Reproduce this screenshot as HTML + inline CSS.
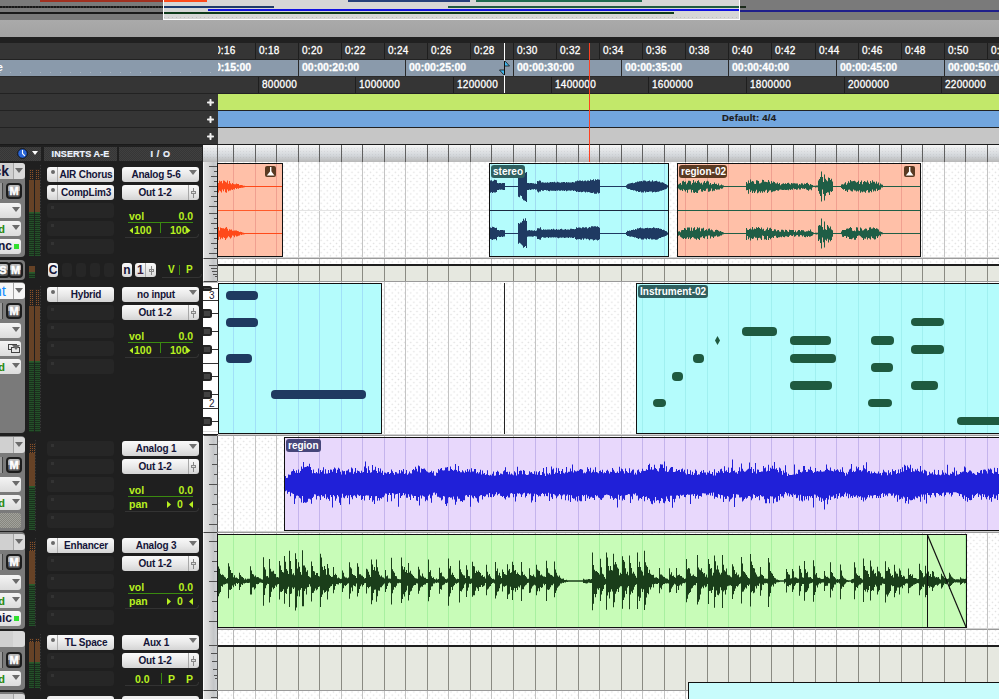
<!DOCTYPE html><html><head><meta charset="utf-8"><style>
*{margin:0;padding:0;box-sizing:border-box}
svg{display:block}
html,body{width:999px;height:699px;overflow:hidden;background:#1f1f1f;font-family:"Liberation Sans",sans-serif}
.ab{position:absolute}
.rl{position:absolute;color:#fff;font-weight:bold;font-size:10.5px;white-space:nowrap;line-height:12px}
.btn{position:absolute;background:linear-gradient(#f4f4f4,#e2e2e2 60%,#d0d0d0);border-radius:3px;color:#1a1a3a;font-weight:bold;font-size:11px;line-height:15px;text-align:center;white-space:nowrap;overflow:hidden}
.slot{position:absolute;background:#262626;border-radius:3px}
.slot:after{content:"";position:absolute;left:5px;top:4px;width:3px;height:3px;background:#333}
.gt{position:absolute;color:#b8f020;font-weight:bold;font-size:10.5px;line-height:12px;white-space:nowrap}
.lp{position:absolute;background:#5a5a5a;left:0;width:25px;border-radius:0 4px 4px 0}
.lb{position:absolute;left:0;width:25px;height:15px;background:linear-gradient(#f2f2f2,#d8d8d8);border-radius:0 3px 3px 0;overflow:hidden}
.mb{position:absolute;left:6px;width:15px;height:16px;background:linear-gradient(#7a7a7a,#333);border:1px solid #222;border-radius:3px;color:#fff;font-weight:bold;font-size:12px;line-height:14px;text-align:center}
.arr{position:absolute;width:0;height:0;border-left:5px solid transparent;border-right:5px solid transparent;border-top:6px solid #666}
</style></head><body>

<div class="ab" style="left:0;top:0;width:999px;height:20px;background:#7a7a7a"></div>
<div class="ab" style="left:0;top:6px;width:163px;height:2px;background:repeating-linear-gradient(90deg,#181818 0 2px,#303030 2px 3px)"></div>
<div class="ab" style="left:0;top:12px;width:163px;height:2px;background:#1a1a1a"></div>
<div class="ab" style="left:40px;top:0;width:123px;height:2px;background:#a03020"></div>
<div class="ab" style="left:739px;top:6px;width:7px;height:2px;background:#1a2a1a"></div>
<div class="ab" style="left:739px;top:10px;width:260px;height:2px;background:#1e1e8a"></div>
<div class="ab" style="left:163px;top:0;width:577px;height:20px;background:#d6d6d6;border:1px solid #fff;border-top:none"></div>
<div class="ab" style="left:164px;top:17px;width:575px;height:1px;background:repeating-linear-gradient(90deg,#c0c0c0 0 1px,transparent 1px 4px)"></div>
<div class="ab" style="left:164px;top:0;width:43px;height:2px;background:#ff4a1a"></div>
<div class="ab" style="left:348px;top:0;width:122px;height:2px;background:#25407a"></div>
<div class="ab" style="left:476px;top:0;width:166px;height:2px;background:#1f6a50"></div>
<div class="ab" style="left:164px;top:6px;width:110px;height:2px;background:#1e3a6a"></div>
<div class="ab" style="left:448px;top:6px;width:291px;height:2px;background:#1f5a40"></div>
<div class="ab" style="left:208px;top:9px;width:531px;height:2px;background:#1010e0"></div>
<div class="ab" style="left:164px;top:12px;width:510px;height:2px;background:#0e3a1a"></div>
<div class="ab" style="left:0;top:20px;width:999px;height:17px;background:linear-gradient(#aaaaaa,#a2a2a2)"></div>
<div class="ab" style="left:0;top:37px;width:999px;height:6px;background:#202020"></div>
<div class="ab" style="left:0;top:43px;width:999px;height:16px;background:#353535"></div>
<div class="ab" style="left:0;top:59px;width:999px;height:1px;background:#222"></div>
<div class="ab" style="left:0;top:60px;width:999px;height:16px;background:#8a9aab"></div>
<div class="ab" style="left:0;top:76px;width:999px;height:1px;background:#2a2a2a"></div>
<div class="ab" style="left:0;top:77px;width:999px;height:16px;background:#353535"></div>
<div class="ab" style="left:0;top:93px;width:999px;height:1px;background:#222"></div>
<div class="ab" style="left:0;top:94px;width:999px;height:16px;background:#353535"></div>
<div class="ab" style="left:218px;top:94px;width:781px;height:16px;background:#c2e86a"></div>
<div class="ab" style="left:0;top:110px;width:999px;height:1px;background:#222"></div>
<svg class="ab" style="left:207px;top:99px" width="7" height="7"><rect x="2.5" y="0" width="2" height="7" rx="0.8" fill="#f0f0f0"/><rect x="0" y="2.5" width="7" height="2" rx="0.8" fill="#f0f0f0"/></svg>
<div class="ab" style="left:0;top:111px;width:999px;height:16px;background:#353535"></div>
<div class="ab" style="left:218px;top:111px;width:781px;height:16px;background:#72a6de"></div>
<div class="ab" style="left:0;top:127px;width:999px;height:1px;background:#222"></div>
<svg class="ab" style="left:207px;top:116px" width="7" height="7"><rect x="2.5" y="0" width="2" height="7" rx="0.8" fill="#f0f0f0"/><rect x="0" y="2.5" width="7" height="2" rx="0.8" fill="#f0f0f0"/></svg>
<div class="ab" style="left:0;top:128px;width:999px;height:16px;background:#353535"></div>
<div class="ab" style="left:218px;top:128px;width:781px;height:16px;background:#c6c6c6"></div>
<div class="ab" style="left:0;top:144px;width:999px;height:1px;background:#222"></div>
<svg class="ab" style="left:207px;top:133px" width="7" height="7"><rect x="2.5" y="0" width="2" height="7" rx="0.8" fill="#f0f0f0"/><rect x="0" y="2.5" width="7" height="2" rx="0.8" fill="#f0f0f0"/></svg>
<div class="ab" style="left:722px;top:111.8px;font-weight:bold;font-size:9.5px;letter-spacing:0.25px;color:#1a1a1a;line-height:12px;-webkit-text-stroke:0.2px #1a1a1a">Default: 4/4</div>
<div class="rl" style="left:-3px;top:61px">e</div>
<div class="ab" style="left:0;top:72px;width:214px;height:1px;background:repeating-linear-gradient(90deg,#a8b4c0 0 1px,transparent 1px 10px)"></div>
<div class="ab" style="left:218px;top:43px;width:781px;height:50px;overflow:hidden">
<div class="ab" style="left:-50px;top:0;width:1px;height:16px;background:#1e1e1e"></div>
<div class="rl" style="left:-46px;top:2px;font-weight:normal;font-size:10px;letter-spacing:0.3px;-webkit-text-stroke:0.3px #fff">0:14</div>
<div class="ab" style="left:-7px;top:0;width:1px;height:16px;background:#1e1e1e"></div>
<div class="rl" style="left:-3px;top:2px;font-weight:normal;font-size:10px;letter-spacing:0.3px;-webkit-text-stroke:0.3px #fff">0:16</div>
<div class="ab" style="left:37px;top:0;width:1px;height:16px;background:#1e1e1e"></div>
<div class="rl" style="left:41px;top:2px;font-weight:normal;font-size:10px;letter-spacing:0.3px;-webkit-text-stroke:0.3px #fff">0:18</div>
<div class="ab" style="left:80px;top:0;width:1px;height:16px;background:#1e1e1e"></div>
<div class="rl" style="left:84px;top:2px;font-weight:normal;font-size:10px;letter-spacing:0.3px;-webkit-text-stroke:0.3px #fff">0:20</div>
<div class="ab" style="left:123px;top:0;width:1px;height:16px;background:#1e1e1e"></div>
<div class="rl" style="left:127px;top:2px;font-weight:normal;font-size:10px;letter-spacing:0.3px;-webkit-text-stroke:0.3px #fff">0:22</div>
<div class="ab" style="left:166px;top:0;width:1px;height:16px;background:#1e1e1e"></div>
<div class="rl" style="left:170px;top:2px;font-weight:normal;font-size:10px;letter-spacing:0.3px;-webkit-text-stroke:0.3px #fff">0:24</div>
<div class="ab" style="left:209px;top:0;width:1px;height:16px;background:#1e1e1e"></div>
<div class="rl" style="left:213px;top:2px;font-weight:normal;font-size:10px;letter-spacing:0.3px;-webkit-text-stroke:0.3px #fff">0:26</div>
<div class="ab" style="left:252px;top:0;width:1px;height:16px;background:#1e1e1e"></div>
<div class="rl" style="left:256px;top:2px;font-weight:normal;font-size:10px;letter-spacing:0.3px;-webkit-text-stroke:0.3px #fff">0:28</div>
<div class="ab" style="left:295px;top:0;width:1px;height:16px;background:#1e1e1e"></div>
<div class="rl" style="left:299px;top:2px;font-weight:normal;font-size:10px;letter-spacing:0.3px;-webkit-text-stroke:0.3px #fff">0:30</div>
<div class="ab" style="left:338px;top:0;width:1px;height:16px;background:#1e1e1e"></div>
<div class="rl" style="left:342px;top:2px;font-weight:normal;font-size:10px;letter-spacing:0.3px;-webkit-text-stroke:0.3px #fff">0:32</div>
<div class="ab" style="left:381px;top:0;width:1px;height:16px;background:#1e1e1e"></div>
<div class="rl" style="left:385px;top:2px;font-weight:normal;font-size:10px;letter-spacing:0.3px;-webkit-text-stroke:0.3px #fff">0:34</div>
<div class="ab" style="left:424px;top:0;width:1px;height:16px;background:#1e1e1e"></div>
<div class="rl" style="left:428px;top:2px;font-weight:normal;font-size:10px;letter-spacing:0.3px;-webkit-text-stroke:0.3px #fff">0:36</div>
<div class="ab" style="left:467px;top:0;width:1px;height:16px;background:#1e1e1e"></div>
<div class="rl" style="left:471px;top:2px;font-weight:normal;font-size:10px;letter-spacing:0.3px;-webkit-text-stroke:0.3px #fff">0:38</div>
<div class="ab" style="left:510px;top:0;width:1px;height:16px;background:#1e1e1e"></div>
<div class="rl" style="left:514px;top:2px;font-weight:normal;font-size:10px;letter-spacing:0.3px;-webkit-text-stroke:0.3px #fff">0:40</div>
<div class="ab" style="left:553px;top:0;width:1px;height:16px;background:#1e1e1e"></div>
<div class="rl" style="left:557px;top:2px;font-weight:normal;font-size:10px;letter-spacing:0.3px;-webkit-text-stroke:0.3px #fff">0:42</div>
<div class="ab" style="left:597px;top:0;width:1px;height:16px;background:#1e1e1e"></div>
<div class="rl" style="left:601px;top:2px;font-weight:normal;font-size:10px;letter-spacing:0.3px;-webkit-text-stroke:0.3px #fff">0:44</div>
<div class="ab" style="left:640px;top:0;width:1px;height:16px;background:#1e1e1e"></div>
<div class="rl" style="left:644px;top:2px;font-weight:normal;font-size:10px;letter-spacing:0.3px;-webkit-text-stroke:0.3px #fff">0:46</div>
<div class="ab" style="left:683px;top:0;width:1px;height:16px;background:#1e1e1e"></div>
<div class="rl" style="left:687px;top:2px;font-weight:normal;font-size:10px;letter-spacing:0.3px;-webkit-text-stroke:0.3px #fff">0:48</div>
<div class="ab" style="left:726px;top:0;width:1px;height:16px;background:#1e1e1e"></div>
<div class="rl" style="left:730px;top:2px;font-weight:normal;font-size:10px;letter-spacing:0.3px;-webkit-text-stroke:0.3px #fff">0:50</div>
<div class="ab" style="left:769px;top:0;width:1px;height:16px;background:#1e1e1e"></div>
<div class="rl" style="left:773px;top:2px;font-weight:normal;font-size:10px;letter-spacing:0.3px;-webkit-text-stroke:0.3px #fff">0:52</div>
<div class="ab" style="left:-28px;top:17px;width:1px;height:16px;background:#2a2a2a"></div>
<div class="rl" style="left:-24px;top:18px;-webkit-text-stroke:0.3px #fff">00:00:15:00</div>
<div class="ab" style="left:80px;top:17px;width:1px;height:16px;background:#2a2a2a"></div>
<div class="rl" style="left:84px;top:18px;-webkit-text-stroke:0.3px #fff">00:00:20:00</div>
<div class="ab" style="left:187px;top:17px;width:1px;height:16px;background:#2a2a2a"></div>
<div class="rl" style="left:191px;top:18px;-webkit-text-stroke:0.3px #fff">00:00:25:00</div>
<div class="ab" style="left:295px;top:17px;width:1px;height:16px;background:#2a2a2a"></div>
<div class="rl" style="left:299px;top:18px;-webkit-text-stroke:0.3px #fff">00:00:30:00</div>
<div class="ab" style="left:403px;top:17px;width:1px;height:16px;background:#2a2a2a"></div>
<div class="rl" style="left:407px;top:18px;-webkit-text-stroke:0.3px #fff">00:00:35:00</div>
<div class="ab" style="left:510px;top:17px;width:1px;height:16px;background:#2a2a2a"></div>
<div class="rl" style="left:514px;top:18px;-webkit-text-stroke:0.3px #fff">00:00:40:00</div>
<div class="ab" style="left:618px;top:17px;width:1px;height:16px;background:#2a2a2a"></div>
<div class="rl" style="left:622px;top:18px;-webkit-text-stroke:0.3px #fff">00:00:45:00</div>
<div class="ab" style="left:726px;top:17px;width:1px;height:16px;background:#2a2a2a"></div>
<div class="rl" style="left:730px;top:18px;-webkit-text-stroke:0.3px #fff">00:00:50:00</div>
<div class="ab" style="left:-58px;top:34px;width:1px;height:16px;background:#1e1e1e"></div>
<div class="rl" style="left:-54px;top:36px;font-weight:normal;font-size:10px;letter-spacing:0.3px;-webkit-text-stroke:0.3px #fff">600000</div>
<div class="ab" style="left:40px;top:34px;width:1px;height:16px;background:#1e1e1e"></div>
<div class="rl" style="left:44px;top:36px;font-weight:normal;font-size:10px;letter-spacing:0.3px;-webkit-text-stroke:0.3px #fff">800000</div>
<div class="ab" style="left:137px;top:34px;width:1px;height:16px;background:#1e1e1e"></div>
<div class="rl" style="left:141px;top:36px;font-weight:normal;font-size:10px;letter-spacing:0.3px;-webkit-text-stroke:0.3px #fff">1000000</div>
<div class="ab" style="left:235px;top:34px;width:1px;height:16px;background:#1e1e1e"></div>
<div class="rl" style="left:239px;top:36px;font-weight:normal;font-size:10px;letter-spacing:0.3px;-webkit-text-stroke:0.3px #fff">1200000</div>
<div class="ab" style="left:333px;top:34px;width:1px;height:16px;background:#1e1e1e"></div>
<div class="rl" style="left:337px;top:36px;font-weight:normal;font-size:10px;letter-spacing:0.3px;-webkit-text-stroke:0.3px #fff">1400000</div>
<div class="ab" style="left:430px;top:34px;width:1px;height:16px;background:#1e1e1e"></div>
<div class="rl" style="left:434px;top:36px;font-weight:normal;font-size:10px;letter-spacing:0.3px;-webkit-text-stroke:0.3px #fff">1600000</div>
<div class="ab" style="left:528px;top:34px;width:1px;height:16px;background:#1e1e1e"></div>
<div class="rl" style="left:532px;top:36px;font-weight:normal;font-size:10px;letter-spacing:0.3px;-webkit-text-stroke:0.3px #fff">1800000</div>
<div class="ab" style="left:626px;top:34px;width:1px;height:16px;background:#1e1e1e"></div>
<div class="rl" style="left:630px;top:36px;font-weight:normal;font-size:10px;letter-spacing:0.3px;-webkit-text-stroke:0.3px #fff">2000000</div>
<div class="ab" style="left:723px;top:34px;width:1px;height:16px;background:#1e1e1e"></div>
<div class="rl" style="left:727px;top:36px;font-weight:normal;font-size:10px;letter-spacing:0.3px;-webkit-text-stroke:0.3px #fff">2200000</div>
</div>
<div class="ab" style="left:0;top:144px;width:999px;height:1px;background:#1a1a1a"></div>
<div class="ab" style="left:0;top:145px;width:203px;height:17px;background:#202020"></div>
<div class="ab" style="left:0;top:147px;width:41px;height:14px;background:repeating-conic-gradient(#363636 0 25%,#404040 0 50%) 0 0/2px 2px"></div>
<div class="ab" style="left:44px;top:147px;width:73px;height:14px;background:repeating-conic-gradient(#363636 0 25%,#404040 0 50%) 0 0/2px 2px;color:#eef4ff;font-weight:bold;font-size:9px;letter-spacing:0.1px;line-height:15px;text-align:center;-webkit-text-stroke:0.2px #eef4ff">INSERTS A-E</div>
<div class="ab" style="left:119px;top:147px;width:83px;height:14px;background:repeating-conic-gradient(#363636 0 25%,#404040 0 50%) 0 0/2px 2px;color:#eef4ff;font-weight:bold;font-size:9px;letter-spacing:0.6px;line-height:15px;text-align:center;-webkit-text-stroke:0.2px #eef4ff">I / O</div>
<svg class="ab" style="left:17px;top:148px" width="11" height="11"><circle cx="5.5" cy="5.5" r="4.8" fill="#2a66d8" stroke="#111" stroke-width="1"/><path d="M5.5 2 L5.5 5.5 L7.8 7.8" stroke="#fff" stroke-width="1.1" fill="none"/></svg>
<div class="arr" style="left:32px;top:151px;border-top-color:#fff;border-left-width:3.5px;border-right-width:3.5px;border-top-width:4px"></div>
<div class="ab" style="left:203px;top:145px;width:796px;height:17px;background:linear-gradient(#f6f6f6,#e4e6e8 30%,#d4d8dc 60%,#b8b8b8)"></div>
<div class="ab" style="left:203px;top:147px;width:796px;height:12px;background:radial-gradient(circle,rgba(0,0,0,0.05) 0.6px,transparent 0.9px) 0 0/3px 3px"></div>
<div class="ab" style="left:233px;top:145px;width:1px;height:17px;background:#606060"></div>
<div class="ab" style="left:255px;top:145px;width:1px;height:17px;background:#606060"></div>
<div class="ab" style="left:276px;top:145px;width:1px;height:17px;background:#606060"></div>
<div class="ab" style="left:298px;top:145px;width:1px;height:17px;background:#606060"></div>
<div class="ab" style="left:319px;top:145px;width:1px;height:17px;background:#606060"></div>
<div class="ab" style="left:341px;top:145px;width:1px;height:17px;background:#606060"></div>
<div class="ab" style="left:362px;top:145px;width:1px;height:17px;background:#606060"></div>
<div class="ab" style="left:384px;top:145px;width:1px;height:17px;background:#606060"></div>
<div class="ab" style="left:405px;top:145px;width:1px;height:17px;background:#606060"></div>
<div class="ab" style="left:427px;top:145px;width:1px;height:17px;background:#606060"></div>
<div class="ab" style="left:448px;top:145px;width:1px;height:17px;background:#606060"></div>
<div class="ab" style="left:470px;top:145px;width:1px;height:17px;background:#606060"></div>
<div class="ab" style="left:491px;top:145px;width:1px;height:17px;background:#606060"></div>
<div class="ab" style="left:513px;top:145px;width:1px;height:17px;background:#606060"></div>
<div class="ab" style="left:535px;top:145px;width:1px;height:17px;background:#606060"></div>
<div class="ab" style="left:556px;top:145px;width:1px;height:17px;background:#606060"></div>
<div class="ab" style="left:578px;top:145px;width:1px;height:17px;background:#606060"></div>
<div class="ab" style="left:599px;top:145px;width:1px;height:17px;background:#606060"></div>
<div class="ab" style="left:621px;top:145px;width:1px;height:17px;background:#606060"></div>
<div class="ab" style="left:642px;top:145px;width:1px;height:17px;background:#606060"></div>
<div class="ab" style="left:664px;top:145px;width:1px;height:17px;background:#606060"></div>
<div class="ab" style="left:685px;top:145px;width:1px;height:17px;background:#606060"></div>
<div class="ab" style="left:707px;top:145px;width:1px;height:17px;background:#606060"></div>
<div class="ab" style="left:728px;top:145px;width:1px;height:17px;background:#606060"></div>
<div class="ab" style="left:750px;top:145px;width:1px;height:17px;background:#606060"></div>
<div class="ab" style="left:771px;top:145px;width:1px;height:17px;background:#606060"></div>
<div class="ab" style="left:793px;top:145px;width:1px;height:17px;background:#606060"></div>
<div class="ab" style="left:815px;top:145px;width:1px;height:17px;background:#606060"></div>
<div class="ab" style="left:836px;top:145px;width:1px;height:17px;background:#606060"></div>
<div class="ab" style="left:858px;top:145px;width:1px;height:17px;background:#606060"></div>
<div class="ab" style="left:879px;top:145px;width:1px;height:17px;background:#606060"></div>
<div class="ab" style="left:901px;top:145px;width:1px;height:17px;background:#606060"></div>
<div class="ab" style="left:922px;top:145px;width:1px;height:17px;background:#606060"></div>
<div class="ab" style="left:944px;top:145px;width:1px;height:17px;background:#606060"></div>
<div class="ab" style="left:965px;top:145px;width:1px;height:17px;background:#606060"></div>
<div class="ab" style="left:987px;top:145px;width:1px;height:17px;background:#606060"></div>
<div class="ab" style="left:217px;top:145px;width:1px;height:17px;background:#606060"></div>
<div class="ab" style="left:218px;top:162px;width:781px;height:537px;background:radial-gradient(circle,#dedede 0.6px,transparent 1px) 1px 1px/6.2px 6.2px,radial-gradient(circle,#dedede 0.6px,transparent 1px) 4.1px 4.1px/6.2px 6.2px,#fff"></div>
<div class="ab" style="left:203px;top:162px;width:15px;height:96px;background:linear-gradient(90deg,#fafafa 0,#fafafa 1px,#e2e2e2 1px,#d6d6d6 40%,#c4c6c8 70%,#cdd0d2 90%,#5a5a5a 93%,#5a5a5a)"></div><svg class="ab" style="left:203px;top:162px" width="15" height="96"><rect x="6" y="4" width="8" height="1" fill="#505050"/><rect x="11" y="9" width="3" height="1" fill="#505050"/><rect x="8" y="14" width="6" height="1" fill="#505050"/><rect x="11" y="19" width="3" height="1" fill="#505050"/><rect x="6" y="24" width="8" height="1" fill="#505050"/><rect x="11" y="29" width="3" height="1" fill="#505050"/><rect x="8" y="34" width="6" height="1" fill="#505050"/><rect x="11" y="39" width="3" height="1" fill="#505050"/><rect x="6" y="44" width="8" height="1" fill="#505050"/><rect x="6" y="51" width="8" height="1" fill="#505050"/><rect x="11" y="56" width="3" height="1" fill="#505050"/><rect x="8" y="61" width="6" height="1" fill="#505050"/><rect x="11" y="66" width="3" height="1" fill="#505050"/><rect x="6" y="71" width="8" height="1" fill="#505050"/><rect x="11" y="76" width="3" height="1" fill="#505050"/><rect x="8" y="81" width="6" height="1" fill="#505050"/><rect x="11" y="86" width="3" height="1" fill="#505050"/><rect x="6" y="91" width="8" height="1" fill="#505050"/></svg>
<div class="ab" style="left:233px;top:162px;width:1px;height:96px;background:#c4c4c4"></div>
<div class="ab" style="left:255px;top:162px;width:1px;height:96px;background:#c4c4c4"></div>
<div class="ab" style="left:276px;top:162px;width:1px;height:96px;background:#c4c4c4"></div>
<div class="ab" style="left:298px;top:162px;width:1px;height:96px;background:#c4c4c4"></div>
<div class="ab" style="left:319px;top:162px;width:1px;height:96px;background:#c4c4c4"></div>
<div class="ab" style="left:341px;top:162px;width:1px;height:96px;background:#c4c4c4"></div>
<div class="ab" style="left:362px;top:162px;width:1px;height:96px;background:#c4c4c4"></div>
<div class="ab" style="left:384px;top:162px;width:1px;height:96px;background:#c4c4c4"></div>
<div class="ab" style="left:405px;top:162px;width:1px;height:96px;background:#c4c4c4"></div>
<div class="ab" style="left:427px;top:162px;width:1px;height:96px;background:#c4c4c4"></div>
<div class="ab" style="left:448px;top:162px;width:1px;height:96px;background:#c4c4c4"></div>
<div class="ab" style="left:470px;top:162px;width:1px;height:96px;background:#c4c4c4"></div>
<div class="ab" style="left:491px;top:162px;width:1px;height:96px;background:#c4c4c4"></div>
<div class="ab" style="left:513px;top:162px;width:1px;height:96px;background:#c4c4c4"></div>
<div class="ab" style="left:535px;top:162px;width:1px;height:96px;background:#c4c4c4"></div>
<div class="ab" style="left:556px;top:162px;width:1px;height:96px;background:#c4c4c4"></div>
<div class="ab" style="left:578px;top:162px;width:1px;height:96px;background:#c4c4c4"></div>
<div class="ab" style="left:599px;top:162px;width:1px;height:96px;background:#c4c4c4"></div>
<div class="ab" style="left:621px;top:162px;width:1px;height:96px;background:#c4c4c4"></div>
<div class="ab" style="left:642px;top:162px;width:1px;height:96px;background:#c4c4c4"></div>
<div class="ab" style="left:664px;top:162px;width:1px;height:96px;background:#c4c4c4"></div>
<div class="ab" style="left:685px;top:162px;width:1px;height:96px;background:#c4c4c4"></div>
<div class="ab" style="left:707px;top:162px;width:1px;height:96px;background:#c4c4c4"></div>
<div class="ab" style="left:728px;top:162px;width:1px;height:96px;background:#c4c4c4"></div>
<div class="ab" style="left:750px;top:162px;width:1px;height:96px;background:#c4c4c4"></div>
<div class="ab" style="left:771px;top:162px;width:1px;height:96px;background:#c4c4c4"></div>
<div class="ab" style="left:793px;top:162px;width:1px;height:96px;background:#c4c4c4"></div>
<div class="ab" style="left:815px;top:162px;width:1px;height:96px;background:#c4c4c4"></div>
<div class="ab" style="left:836px;top:162px;width:1px;height:96px;background:#c4c4c4"></div>
<div class="ab" style="left:858px;top:162px;width:1px;height:96px;background:#c4c4c4"></div>
<div class="ab" style="left:879px;top:162px;width:1px;height:96px;background:#c4c4c4"></div>
<div class="ab" style="left:901px;top:162px;width:1px;height:96px;background:#c4c4c4"></div>
<div class="ab" style="left:922px;top:162px;width:1px;height:96px;background:#c4c4c4"></div>
<div class="ab" style="left:944px;top:162px;width:1px;height:96px;background:#c4c4c4"></div>
<div class="ab" style="left:965px;top:162px;width:1px;height:96px;background:#c4c4c4"></div>
<div class="ab" style="left:987px;top:162px;width:1px;height:96px;background:#c4c4c4"></div>
<div class="ab" style="left:218px;top:210px;width:781px;height:1px;background:#e4e4e4"></div>
<div class="ab" style="left:203px;top:258px;width:796px;height:1px;background:#9a9a9a"></div><div class="ab" style="left:204px;top:258px;width:13px;height:1px;background:#454545"></div><div class="ab" style="left:218px;top:257px;width:781px;height:1px;background:#d2d2d2"></div>
<div class="ab" style="left:217px;top:163px;width:66px;height:94px;background:#ffc0a8;border:1px solid #111;overflow:hidden"><div class="ab" style="left:-1px;top:-1px;width:66px;height:94px"><div class="ab" style="left:16px;top:0;width:1px;height:94px;background:#f0a090"></div><div class="ab" style="left:38px;top:0;width:1px;height:94px;background:#f0a090"></div><div class="ab" style="left:59px;top:0;width:1px;height:94px;background:#f0a090"></div></div><svg class="ab" style="left:0;top:0" width="66" height="95" viewBox="218 164 66 95"><rect x="218" y="186.0" width="66" height="1" fill="#ff4a1a"/><path d="M218 182.9 V182.9 H219 V180.7 H220 V181.5 H221 V181.0 H222 V183.2 H223 V180.5 H224 V180.7 H225 V181.7 H226 V182.5 H227 V180.4 H228 V183.8 H229 V181.0 H230 V183.3 H231 V184.3 H232 V183.1 H233 V183.9 H234 V184.2 H235 V184.2 H236 V183.6 H237 V184.1 H238 V184.0 H239 V185.3 H240 V184.9 H241 V184.9 H242 V185.2 H243 V185.8 H244 V185.7 H245 V186.0 H246 V187.0 H245 V187.3 H244 V187.4 H243 V187.7 H242 V187.7 H241 V188.1 H240 V188.0 H239 V188.8 H238 V188.2 H237 V189.0 H236 V188.0 H235 V189.4 H234 V189.1 H233 V190.0 H232 V189.5 H231 V190.4 H230 V190.5 H229 V191.2 H228 V189.4 H227 V192.8 H226 V192.2 H225 V189.2 H224 V191.3 H223 V189.4 H222 V192.4 H221 V191.3 H220 V190.6 H219 V192.6 H218Z" fill="#ff4a1a"/><rect x="218" y="233.0" width="66" height="1" fill="#ff4a1a"/><path d="M218 227.1 V227.1 H219 V230.4 H220 V227.5 H221 V228.0 H222 V228.2 H223 V228.2 H224 V228.7 H225 V227.8 H226 V227.1 H227 V228.8 H228 V230.7 H229 V229.2 H230 V229.8 H231 V229.6 H232 V230.7 H233 V230.7 H234 V230.5 H235 V230.5 H236 V230.5 H237 V231.0 H238 V231.3 H239 V232.0 H240 V231.7 H241 V232.1 H242 V232.5 H243 V232.7 H244 V232.9 H245 V233.0 H246 V234.0 H245 V234.3 H244 V234.6 H243 V234.6 H242 V234.9 H241 V234.6 H240 V235.6 H239 V235.8 H238 V236.2 H237 V236.4 H236 V235.5 H235 V237.3 H234 V235.8 H233 V235.5 H232 V237.5 H231 V238.6 H230 V237.3 H229 V236.2 H228 V237.5 H227 V238.6 H226 V240.0 H225 V238.1 H224 V237.2 H223 V238.8 H222 V237.8 H221 V239.2 H220 V236.8 H219 V239.9 H218Z" fill="#ff4a1a"/><rect x="218" y="210" width="66" height="1" fill="#ff5a2a"/></svg><div class="ab" style="left:47px;top:2px;width:11px;height:11px"><svg width="11" height="11"><rect x="0" y="0" width="11" height="11" rx="2" fill="#5a3a22"/><rect x="5" y="1" width="1.4" height="5" fill="#fff"/><path d="M5 5.5 L6.4 5.5 L9.5 9.5 L1.8 9.5Z" fill="#fff"/></svg></div></div>
<div class="ab" style="left:489px;top:163px;width:180px;height:94px;background:#b4fcfc;border:1px solid #111;overflow:hidden"><div class="ab" style="left:-1px;top:-1px;width:180px;height:94px"><div class="ab" style="left:2px;top:0;width:1px;height:94px;background:#a0dcf0"></div><div class="ab" style="left:24px;top:0;width:1px;height:94px;background:#a0dcf0"></div><div class="ab" style="left:46px;top:0;width:1px;height:94px;background:#a0dcf0"></div><div class="ab" style="left:67px;top:0;width:1px;height:94px;background:#a0dcf0"></div><div class="ab" style="left:89px;top:0;width:1px;height:94px;background:#a0dcf0"></div><div class="ab" style="left:110px;top:0;width:1px;height:94px;background:#a0dcf0"></div><div class="ab" style="left:132px;top:0;width:1px;height:94px;background:#a0dcf0"></div><div class="ab" style="left:153px;top:0;width:1px;height:94px;background:#a0dcf0"></div><div class="ab" style="left:175px;top:0;width:1px;height:94px;background:#a0dcf0"></div></div><svg class="ab" style="left:0;top:0" width="181" height="95" viewBox="490 164 181 95"><rect x="489" y="186.0" width="181" height="1" fill="#1f3a62"/><path d="M489 180.8 V180.8 H490 V180.6 H491 V180.2 H492 V181.2 H493 V180.8 H494 V179.7 H495 V179.9 H496 V180.2 H497 V183.1 H498 V183.2 H499 V183.1 H500 V183.0 H501 V183.4 H502 V182.9 H503 V183.1 H504 V183.1 H505 V186.0 H506 V186.0 H507 V186.0 H508 V186.0 H509 V186.0 H510 V186.0 H511 V186.0 H512 V186.0 H513 V186.0 H514 V186.0 H515 V186.0 H516 V186.0 H517 V186.0 H518 V177.3 H519 V176.9 H520 V175.6 H521 V177.2 H522 V172.7 H523 V171.6 H524 V172.2 H525 V172.8 H526 V172.1 H527 V183.1 H528 V183.0 H529 V183.2 H530 V183.1 H531 V183.1 H532 V183.3 H533 V183.3 H534 V183.7 H535 V183.4 H536 V184.0 H537 V181.0 H538 V181.2 H539 V180.4 H540 V180.7 H541 V182.5 H542 V182.3 H543 V182.6 H544 V182.8 H545 V182.4 H546 V182.8 H547 V182.3 H548 V182.8 H549 V182.5 H550 V181.9 H551 V182.3 H552 V182.1 H553 V182.2 H554 V181.8 H555 V182.4 H556 V182.6 H557 V181.8 H558 V182.2 H559 V182.4 H560 V182.8 H561 V182.2 H562 V182.2 H563 V182.1 H564 V182.1 H565 V182.8 H566 V182.1 H567 V182.6 H568 V182.2 H569 V182.4 H570 V182.4 H571 V182.5 H572 V182.0 H573 V182.2 H574 V182.5 H575 V181.2 H576 V181.3 H577 V180.6 H578 V181.1 H579 V180.4 H580 V180.4 H581 V181.1 H582 V180.4 H583 V181.3 H584 V180.8 H585 V180.5 H586 V181.3 H587 V180.5 H588 V180.5 H589 V181.0 H590 V179.5 H591 V180.2 H592 V180.1 H593 V179.3 H594 V180.8 H595 V179.3 H596 V180.1 H597 V179.3 H598 V179.6 H599 V179.7 H600 V186.0 H601 V186.0 H602 V186.0 H603 V186.0 H604 V186.0 H605 V186.0 H606 V186.0 H607 V186.0 H608 V186.0 H609 V186.0 H610 V186.0 H611 V186.0 H612 V186.0 H613 V186.0 H614 V186.0 H615 V186.0 H616 V186.0 H617 V186.0 H618 V186.0 H619 V186.0 H620 V186.0 H621 V186.0 H622 V186.0 H623 V186.0 H624 V186.0 H625 V186.0 H626 V185.2 H627 V184.2 H628 V183.8 H629 V183.4 H630 V183.2 H631 V182.9 H632 V182.7 H633 V183.3 H634 V182.9 H635 V182.2 H636 V182.2 H637 V181.6 H638 V181.8 H639 V181.2 H640 V181.3 H641 V181.0 H642 V181.5 H643 V180.5 H644 V180.6 H645 V180.8 H646 V181.6 H647 V181.3 H648 V181.1 H649 V180.6 H650 V181.6 H651 V181.5 H652 V180.3 H653 V181.5 H654 V181.2 H655 V181.1 H656 V180.8 H657 V181.5 H658 V181.8 H659 V181.4 H660 V182.4 H661 V182.4 H662 V182.3 H663 V182.7 H664 V183.5 H665 V183.9 H666 V184.4 H667 V185.3 H668 V187.6 H667 V188.7 H666 V189.2 H665 V189.4 H664 V190.1 H663 V190.3 H662 V190.8 H661 V190.7 H660 V191.2 H659 V191.7 H658 V191.7 H657 V191.9 H656 V192.3 H655 V191.8 H654 V192.1 H653 V192.5 H652 V191.5 H651 V191.5 H650 V191.4 H649 V192.0 H648 V192.0 H647 V191.7 H646 V192.5 H645 V191.3 H644 V192.4 H643 V192.3 H642 V192.4 H641 V191.5 H640 V192.1 H639 V191.9 H638 V191.0 H637 V191.4 H636 V190.7 H635 V190.2 H634 V190.4 H633 V190.0 H632 V190.1 H631 V189.7 H630 V189.0 H629 V189.0 H628 V188.7 H627 V187.8 H626 V187.0 H625 V187.0 H624 V187.0 H623 V187.0 H622 V187.0 H621 V187.0 H620 V187.0 H619 V187.0 H618 V187.0 H617 V187.0 H616 V187.0 H615 V187.0 H614 V187.0 H613 V187.0 H612 V187.0 H611 V187.0 H610 V187.0 H609 V187.0 H608 V187.0 H607 V187.0 H606 V187.0 H605 V187.0 H604 V187.0 H603 V187.0 H602 V187.0 H601 V187.0 H600 V193.1 H599 V193.6 H598 V192.6 H597 V193.8 H596 V193.8 H595 V193.8 H594 V192.5 H593 V192.9 H592 V192.9 H591 V192.7 H590 V192.3 H589 V191.9 H588 V192.3 H587 V191.8 H586 V192.6 H585 V191.7 H584 V191.6 H583 V192.0 H582 V192.3 H581 V191.7 H580 V192.0 H579 V191.9 H578 V191.6 H577 V192.0 H576 V191.1 H575 V190.4 H574 V191.0 H573 V190.2 H572 V190.6 H571 V190.8 H570 V190.5 H569 V190.5 H568 V190.7 H567 V191.2 H566 V190.3 H565 V191.0 H564 V190.6 H563 V190.7 H562 V190.3 H561 V190.8 H560 V190.8 H559 V190.2 H558 V190.7 H557 V190.5 H556 V190.9 H555 V190.7 H554 V190.8 H553 V190.8 H552 V190.7 H551 V190.6 H550 V191.2 H549 V191.0 H548 V190.2 H547 V190.4 H546 V190.0 H545 V190.0 H544 V190.8 H543 V190.8 H542 V190.1 H541 V191.5 H540 V191.5 H539 V192.5 H538 V191.6 H537 V189.5 H536 V189.7 H535 V189.1 H534 V189.5 H533 V189.3 H532 V189.6 H531 V190.0 H530 V189.4 H529 V190.1 H528 V190.1 H527 V202.0 H526 V201.0 H525 V200.4 H524 V200.2 H523 V198.7 H522 V196.0 H521 V195.5 H520 V197.2 H519 V196.7 H518 V187.0 H517 V187.0 H516 V187.0 H515 V187.0 H514 V187.0 H513 V187.0 H512 V187.0 H511 V187.0 H510 V187.0 H509 V187.0 H508 V187.0 H507 V187.0 H506 V187.0 H505 V190.1 H504 V190.1 H503 V189.8 H502 V189.4 H501 V189.8 H500 V189.4 H499 V190.0 H498 V190.1 H497 V192.1 H496 V192.5 H495 V192.5 H494 V192.2 H493 V193.1 H492 V191.9 H491 V192.7 H490 V192.6 H489Z" fill="#1f3a62"/><rect x="489" y="233.0" width="181" height="1" fill="#1f3a62"/><path d="M489 227.8 V227.8 H490 V227.6 H491 V228.1 H492 V226.8 H493 V227.0 H494 V227.4 H495 V227.9 H496 V227.8 H497 V230.0 H498 V230.0 H499 V230.4 H500 V230.0 H501 V229.9 H502 V230.1 H503 V230.2 H504 V230.2 H505 V233.0 H506 V233.0 H507 V233.0 H508 V233.0 H509 V233.0 H510 V233.0 H511 V233.0 H512 V233.0 H513 V233.0 H514 V233.0 H515 V233.0 H516 V233.0 H517 V233.0 H518 V223.0 H519 V223.7 H520 V222.6 H521 V222.4 H522 V221.1 H523 V218.7 H524 V220.4 H525 V218.2 H526 V221.0 H527 V230.4 H528 V230.3 H529 V229.9 H530 V230.4 H531 V230.3 H532 V230.6 H533 V230.7 H534 V230.3 H535 V230.9 H536 V230.5 H537 V228.3 H538 V228.3 H539 V228.5 H540 V227.3 H541 V229.5 H542 V230.1 H543 V229.2 H544 V229.7 H545 V229.4 H546 V229.7 H547 V229.5 H548 V229.5 H549 V229.5 H550 V229.8 H551 V229.0 H552 V229.5 H553 V228.8 H554 V229.6 H555 V229.8 H556 V229.1 H557 V229.8 H558 V229.6 H559 V229.7 H560 V229.0 H561 V228.8 H562 V229.6 H563 V229.8 H564 V229.6 H565 V228.9 H566 V229.8 H567 V229.6 H568 V229.6 H569 V229.7 H570 V228.8 H571 V228.8 H572 V228.9 H573 V229.0 H574 V229.3 H575 V228.9 H576 V227.3 H577 V228.1 H578 V227.5 H579 V227.5 H580 V227.7 H581 V228.2 H582 V227.3 H583 V227.2 H584 V227.7 H585 V227.3 H586 V227.2 H587 V228.5 H588 V227.7 H589 V227.1 H590 V227.4 H591 V226.3 H592 V226.3 H593 V226.5 H594 V226.3 H595 V226.3 H596 V226.7 H597 V226.3 H598 V227.0 H599 V227.7 H600 V233.0 H601 V233.0 H602 V233.0 H603 V233.0 H604 V233.0 H605 V233.0 H606 V233.0 H607 V233.0 H608 V233.0 H609 V233.0 H610 V233.0 H611 V233.0 H612 V233.0 H613 V233.0 H614 V233.0 H615 V233.0 H616 V233.0 H617 V233.0 H618 V233.0 H619 V233.0 H620 V233.0 H621 V233.0 H622 V233.0 H623 V233.0 H624 V233.0 H625 V233.0 H626 V232.1 H627 V230.8 H628 V231.1 H629 V230.5 H630 V230.8 H631 V230.0 H632 V230.0 H633 V229.6 H634 V229.9 H635 V228.9 H636 V229.5 H637 V228.3 H638 V228.6 H639 V227.9 H640 V227.6 H641 V228.3 H642 V228.2 H643 V228.5 H644 V228.5 H645 V228.0 H646 V227.9 H647 V227.7 H648 V228.2 H649 V228.0 H650 V228.0 H651 V228.3 H652 V228.1 H653 V227.3 H654 V227.7 H655 V228.2 H656 V227.9 H657 V228.3 H658 V228.0 H659 V228.7 H660 V228.7 H661 V229.1 H662 V230.0 H663 V229.7 H664 V230.2 H665 V230.9 H666 V231.3 H667 V232.4 H668 V234.8 H667 V235.4 H666 V236.0 H665 V236.4 H664 V236.7 H663 V237.1 H662 V237.3 H661 V237.9 H660 V237.9 H659 V238.8 H658 V239.4 H657 V239.7 H656 V239.7 H655 V239.2 H654 V239.2 H653 V239.4 H652 V239.5 H651 V238.5 H650 V239.3 H649 V239.1 H648 V238.3 H647 V239.5 H646 V238.8 H645 V238.5 H644 V239.5 H643 V239.4 H642 V239.4 H641 V238.5 H640 V238.2 H639 V238.9 H638 V238.2 H637 V238.1 H636 V237.2 H635 V237.4 H634 V237.0 H633 V236.8 H632 V236.4 H631 V236.8 H630 V236.4 H629 V236.0 H628 V236.0 H627 V234.9 H626 V234.0 H625 V234.0 H624 V234.0 H623 V234.0 H622 V234.0 H621 V234.0 H620 V234.0 H619 V234.0 H618 V234.0 H617 V234.0 H616 V234.0 H615 V234.0 H614 V234.0 H613 V234.0 H612 V234.0 H611 V234.0 H610 V234.0 H609 V234.0 H608 V234.0 H607 V234.0 H606 V234.0 H605 V234.0 H604 V234.0 H603 V234.0 H602 V234.0 H601 V234.0 H600 V239.3 H599 V240.1 H598 V240.5 H597 V239.8 H596 V239.6 H595 V240.1 H594 V240.5 H593 V239.4 H592 V239.3 H591 V239.2 H590 V240.2 H589 V239.2 H588 V238.7 H587 V239.3 H586 V238.6 H585 V238.5 H584 V239.7 H583 V238.5 H582 V239.7 H581 V239.4 H580 V239.1 H579 V239.3 H578 V239.3 H577 V239.7 H576 V238.9 H575 V237.3 H574 V238.0 H573 V237.9 H572 V237.6 H571 V237.8 H570 V237.2 H569 V238.1 H568 V237.4 H567 V237.5 H566 V237.7 H565 V238.1 H564 V237.6 H563 V237.6 H562 V237.7 H561 V237.6 H560 V237.7 H559 V238.2 H558 V237.7 H557 V237.3 H556 V237.4 H555 V237.3 H554 V237.6 H553 V237.3 H552 V237.6 H551 V237.4 H550 V237.2 H549 V238.1 H548 V237.2 H547 V237.2 H546 V237.8 H545 V237.8 H544 V237.6 H543 V237.1 H542 V237.7 H541 V239.7 H540 V239.4 H539 V239.1 H538 V238.9 H537 V236.4 H536 V236.2 H535 V236.1 H534 V236.5 H533 V236.7 H532 V236.4 H531 V236.4 H530 V236.4 H529 V236.6 H528 V236.8 H527 V248.0 H526 V246.1 H525 V247.1 H524 V247.7 H523 V245.6 H522 V244.5 H521 V243.6 H520 V242.7 H519 V243.8 H518 V234.0 H517 V234.0 H516 V234.0 H515 V234.0 H514 V234.0 H513 V234.0 H512 V234.0 H511 V234.0 H510 V234.0 H509 V234.0 H508 V234.0 H507 V234.0 H506 V234.0 H505 V236.4 H504 V236.5 H503 V236.9 H502 V236.4 H501 V237.1 H500 V236.9 H499 V236.5 H498 V237.0 H497 V240.2 H496 V239.0 H495 V239.2 H494 V239.2 H493 V240.0 H492 V239.4 H491 V239.1 H490 V239.0 H489Z" fill="#1f3a62"/><rect x="489" y="210" width="181" height="1" fill="#1a2a40"/></svg><div class="ab" style="left:1px;top:1px;width:34px;height:13px;background:#2f6060;border-radius:3px;color:#fff;font-weight:bold;font-size:10px;line-height:13px;padding-left:2px;white-space:nowrap;overflow:hidden">stereo</div></div>
<div class="ab" style="left:677px;top:163px;width:244px;height:94px;background:#ffc0a8;border:1px solid #111;overflow:hidden"><div class="ab" style="left:-1px;top:-1px;width:244px;height:94px"><div class="ab" style="left:8px;top:0;width:1px;height:94px;background:#f0a090"></div><div class="ab" style="left:30px;top:0;width:1px;height:94px;background:#f0a090"></div><div class="ab" style="left:51px;top:0;width:1px;height:94px;background:#f0a090"></div><div class="ab" style="left:73px;top:0;width:1px;height:94px;background:#f0a090"></div><div class="ab" style="left:94px;top:0;width:1px;height:94px;background:#f0a090"></div><div class="ab" style="left:116px;top:0;width:1px;height:94px;background:#f0a090"></div><div class="ab" style="left:138px;top:0;width:1px;height:94px;background:#f0a090"></div><div class="ab" style="left:159px;top:0;width:1px;height:94px;background:#f0a090"></div><div class="ab" style="left:181px;top:0;width:1px;height:94px;background:#f0a090"></div><div class="ab" style="left:202px;top:0;width:1px;height:94px;background:#f0a090"></div><div class="ab" style="left:224px;top:0;width:1px;height:94px;background:#f0a090"></div></div><svg class="ab" style="left:0;top:0" width="245" height="95" viewBox="678 164 245 95"><rect x="677" y="186.0" width="245" height="1" fill="#1f5e46"/><path d="M678 184.6 V184.6 H679 V183.7 H680 V183.1 H681 V184.8 H682 V181.3 H683 V180.7 H684 V181.9 H685 V181.6 H686 V184.3 H687 V182.7 H688 V180.8 H689 V180.7 H690 V181.3 H691 V184.5 H692 V183.0 H693 V180.1 H694 V182.6 H695 V181.6 H696 V183.1 H697 V181.0 H698 V180.3 H699 V182.3 H700 V183.4 H701 V182.7 H702 V184.5 H703 V182.6 H704 V181.0 H705 V182.9 H706 V181.5 H707 V180.8 H708 V181.6 H709 V184.6 H710 V183.0 H711 V184.8 H712 V184.0 H713 V184.1 H714 V182.4 H715 V184.0 H716 V183.7 H717 V184.9 H718 V183.6 H719 V185.4 H720 V185.3 H721 V184.6 H722 V185.2 H723 V185.6 H724 V186.0 H725 V186.0 H726 V186.0 H727 V186.0 H728 V186.0 H729 V186.0 H730 V186.0 H731 V186.0 H732 V186.0 H733 V186.0 H734 V186.0 H735 V186.0 H736 V186.0 H737 V186.0 H738 V186.0 H739 V186.0 H740 V186.0 H741 V186.0 H742 V186.0 H743 V186.0 H744 V186.0 H745 V186.0 H746 V181.9 H747 V183.4 H748 V180.4 H749 V182.9 H750 V179.4 H751 V181.8 H752 V181.0 H753 V181.6 H754 V183.8 H755 V184.0 H756 V180.2 H757 V180.6 H758 V181.0 H759 V183.5 H760 V183.2 H761 V182.5 H762 V179.8 H763 V179.9 H764 V181.7 H765 V181.7 H766 V182.1 H767 V182.2 H768 V180.1 H769 V181.7 H770 V183.8 H771 V181.1 H772 V182.7 H773 V181.5 H774 V182.1 H775 V183.2 H776 V183.6 H777 V182.4 H778 V183.9 H779 V183.1 H780 V185.2 H781 V184.3 H782 V183.7 H783 V183.3 H784 V184.0 H785 V183.2 H786 V184.1 H787 V182.9 H788 V182.8 H789 V183.7 H790 V184.6 H791 V182.9 H792 V183.4 H793 V183.3 H794 V183.3 H795 V183.5 H796 V183.6 H797 V183.6 H798 V185.2 H799 V184.1 H800 V184.5 H801 V183.3 H802 V183.5 H803 V184.7 H804 V183.5 H805 V183.9 H806 V183.1 H807 V182.8 H808 V184.0 H809 V185.2 H810 V184.0 H811 V184.7 H812 V184.9 H813 V185.7 H814 V185.7 H815 V185.7 H816 V185.6 H817 V185.6 H818 V180.6 H819 V179.1 H820 V177.1 H821 V178.7 H822 V177.1 H823 V182.1 H824 V178.7 H825 V178.7 H826 V180.2 H827 V181.3 H828 V177.4 H829 V177.9 H830 V180.0 H831 V178.8 H832 V181.6 H833 V186.0 H834 V186.0 H835 V186.0 H836 V186.0 H837 V186.0 H838 V186.0 H839 V186.0 H840 V186.0 H841 V184.5 H842 V184.3 H843 V184.6 H844 V183.4 H845 V182.2 H846 V184.8 H847 V183.3 H848 V181.2 H849 V182.8 H850 V180.0 H851 V181.3 H852 V181.2 H853 V180.9 H854 V180.8 H855 V181.6 H856 V182.6 H857 V181.9 H858 V180.8 H859 V184.1 H860 V181.9 H861 V180.4 H862 V184.3 H863 V182.0 H864 V181.0 H865 V181.8 H866 V182.2 H867 V180.5 H868 V182.6 H869 V183.9 H870 V181.0 H871 V182.7 H872 V180.3 H873 V181.8 H874 V181.8 H875 V183.5 H876 V181.5 H877 V183.8 H878 V182.6 H879 V185.2 H880 V183.5 H881 V184.4 H882 V184.8 H883 V186.0 H884 V186.0 H885 V186.0 H886 V186.0 H887 V186.0 H888 V186.0 H889 V186.0 H890 V186.0 H891 V186.0 H892 V186.0 H893 V186.0 H894 V186.0 H895 V186.0 H896 V186.0 H897 V186.0 H898 V186.0 H899 V186.0 H900 V186.0 H901 V186.0 H902 V186.0 H903 V186.0 H904 V186.0 H905 V186.0 H906 V186.0 H907 V186.0 H908 V186.0 H909 V186.0 H910 V186.0 H911 V186.0 H912 V186.0 H913 V186.0 H914 V186.0 H915 V186.0 H916 V186.0 H917 V186.0 H918 V186.0 H919 V186.0 H920 V187.0 H919 V187.0 H918 V187.0 H917 V187.0 H916 V187.0 H915 V187.0 H914 V187.0 H913 V187.0 H912 V187.0 H911 V187.0 H910 V187.0 H909 V187.0 H908 V187.0 H907 V187.0 H906 V187.0 H905 V187.0 H904 V187.0 H903 V187.0 H902 V187.0 H901 V187.0 H900 V187.0 H899 V187.0 H898 V187.0 H897 V187.0 H896 V187.0 H895 V187.0 H894 V187.0 H893 V187.0 H892 V187.0 H891 V187.0 H890 V187.0 H889 V187.0 H888 V187.0 H887 V187.0 H886 V187.0 H885 V187.0 H884 V187.0 H883 V187.5 H882 V187.4 H881 V189.6 H880 V189.7 H879 V190.1 H878 V191.0 H877 V188.8 H876 V191.3 H875 V190.5 H874 V191.4 H873 V189.6 H872 V192.3 H871 V191.0 H870 V192.5 H869 V192.4 H868 V189.9 H867 V190.8 H866 V192.7 H865 V191.8 H864 V191.5 H863 V192.3 H862 V191.4 H861 V192.7 H860 V190.2 H859 V191.6 H858 V190.7 H857 V191.4 H856 V190.6 H855 V190.4 H854 V189.5 H853 V191.6 H852 V191.2 H851 V190.4 H850 V189.6 H849 V189.8 H848 V191.9 H847 V190.4 H846 V190.9 H845 V189.1 H844 V189.8 H843 V189.1 H842 V188.0 H841 V187.0 H840 V187.0 H839 V187.0 H838 V187.0 H837 V187.0 H836 V187.0 H835 V187.0 H834 V187.0 H833 V191.0 H832 V192.1 H831 V191.2 H830 V194.9 H829 V192.6 H828 V192.2 H827 V193.1 H826 V195.7 H825 V191.2 H824 V194.1 H823 V189.5 H822 V192.8 H821 V196.0 H820 V193.7 H819 V190.9 H818 V187.3 H817 V187.2 H816 V187.5 H815 V187.1 H814 V187.0 H813 V187.4 H812 V190.2 H811 V189.3 H810 V189.4 H809 V190.8 H808 V190.1 H807 V189.6 H806 V188.3 H805 V189.0 H804 V188.6 H803 V188.8 H802 V188.0 H801 V189.6 H800 V189.4 H799 V188.2 H798 V189.6 H797 V189.7 H796 V189.0 H795 V189.3 H794 V188.3 H793 V189.7 H792 V189.2 H791 V189.9 H790 V189.3 H789 V190.2 H788 V189.7 H787 V190.0 H786 V190.0 H785 V189.7 H784 V190.0 H783 V190.1 H782 V189.8 H781 V189.5 H780 V189.7 H779 V190.8 H778 V190.4 H777 V190.0 H776 V190.8 H775 V191.2 H774 V191.2 H773 V191.7 H772 V192.2 H771 V190.2 H770 V190.6 H769 V191.8 H768 V193.0 H767 V189.7 H766 V190.4 H765 V192.2 H764 V191.2 H763 V192.7 H762 V191.2 H761 V192.7 H760 V191.2 H759 V192.6 H758 V193.2 H757 V189.7 H756 V191.5 H755 V193.1 H754 V191.2 H753 V192.9 H752 V190.4 H751 V191.9 H750 V189.3 H749 V193.8 H748 V190.1 H747 V190.3 H746 V187.0 H745 V187.0 H744 V187.0 H743 V187.0 H742 V187.0 H741 V187.0 H740 V187.0 H739 V187.0 H738 V187.0 H737 V187.0 H736 V187.0 H735 V187.0 H734 V187.0 H733 V187.0 H732 V187.0 H731 V187.0 H730 V187.0 H729 V187.0 H728 V187.0 H727 V187.0 H726 V187.0 H725 V187.0 H724 V187.3 H723 V188.6 H722 V188.8 H721 V188.2 H720 V189.4 H719 V189.5 H718 V189.5 H717 V189.8 H716 V189.1 H715 V190.7 H714 V190.5 H713 V191.2 H712 V188.4 H711 V190.7 H710 V191.5 H709 V191.7 H708 V188.5 H707 V188.8 H706 V190.8 H705 V190.9 H704 V190.2 H703 V191.7 H702 V191.5 H701 V189.1 H700 V189.7 H699 V190.4 H698 V192.9 H697 V192.8 H696 V191.9 H695 V192.9 H694 V192.6 H693 V190.0 H692 V192.6 H691 V189.5 H690 V189.6 H689 V189.7 H688 V192.7 H687 V190.0 H686 V191.5 H685 V190.2 H684 V189.3 H683 V190.9 H682 V189.8 H681 V190.2 H680 V189.5 H679 V188.6 H678Z" fill="#1f5e46"/><rect x="821" y="171.5" width="1" height="30" fill="#1f5e46"/><rect x="824" y="174.5" width="1" height="26" fill="#1f5e46"/><rect x="677" y="233.0" width="245" height="1" fill="#1f5e46"/><path d="M678 231.4 V231.4 H679 V231.2 H680 V232.3 H681 V230.2 H682 V230.0 H683 V229.9 H684 V227.9 H685 V228.6 H686 V230.1 H687 V227.6 H688 V227.6 H689 V227.5 H690 V230.7 H691 V227.6 H692 V230.7 H693 V228.2 H694 V227.2 H695 V230.1 H696 V229.3 H697 V227.3 H698 V228.2 H699 V227.6 H700 V231.2 H701 V228.5 H702 V228.6 H703 V227.7 H704 V230.7 H705 V229.9 H706 V229.3 H707 V230.4 H708 V228.7 H709 V228.6 H710 V230.2 H711 V229.4 H712 V230.3 H713 V231.4 H714 V231.8 H715 V230.0 H716 V229.8 H717 V230.1 H718 V230.8 H719 V231.4 H720 V231.1 H721 V231.8 H722 V232.1 H723 V232.4 H724 V233.0 H725 V233.0 H726 V233.0 H727 V233.0 H728 V233.0 H729 V233.0 H730 V233.0 H731 V233.0 H732 V233.0 H733 V233.0 H734 V233.0 H735 V233.0 H736 V233.0 H737 V233.0 H738 V233.0 H739 V233.0 H740 V233.0 H741 V233.0 H742 V233.0 H743 V233.0 H744 V233.0 H745 V233.0 H746 V228.1 H747 V229.8 H748 V230.1 H749 V228.9 H750 V228.5 H751 V229.5 H752 V226.9 H753 V229.5 H754 V228.5 H755 V229.0 H756 V227.3 H757 V227.9 H758 V226.9 H759 V228.1 H760 V229.0 H761 V227.5 H762 V229.5 H763 V228.8 H764 V231.1 H765 V230.5 H766 V229.3 H767 V227.4 H768 V230.1 H769 V228.3 H770 V227.8 H771 V229.1 H772 V230.9 H773 V230.8 H774 V229.2 H775 V229.4 H776 V231.3 H777 V230.2 H778 V230.0 H779 V231.6 H780 V231.8 H781 V229.7 H782 V229.8 H783 V230.2 H784 V231.7 H785 V229.8 H786 V230.1 H787 V231.3 H788 V232.0 H789 V229.8 H790 V229.9 H791 V230.1 H792 V229.9 H793 V230.0 H794 V232.0 H795 V230.6 H796 V232.2 H797 V231.2 H798 V230.0 H799 V230.1 H800 V231.2 H801 V230.1 H802 V230.3 H803 V230.2 H804 V231.5 H805 V231.7 H806 V231.2 H807 V231.2 H808 V230.5 H809 V231.1 H810 V229.5 H811 V231.5 H812 V232.1 H813 V232.6 H814 V233.0 H815 V232.8 H816 V232.8 H817 V232.7 H818 V225.7 H819 V225.0 H820 V225.5 H821 V228.6 H822 V226.9 H823 V229.8 H824 V229.1 H825 V229.2 H826 V230.0 H827 V225.0 H828 V226.4 H829 V228.3 H830 V226.4 H831 V229.6 H832 V230.2 H833 V233.0 H834 V233.0 H835 V233.0 H836 V233.0 H837 V233.0 H838 V233.0 H839 V233.0 H840 V233.0 H841 V231.5 H842 V230.0 H843 V230.1 H844 V229.9 H845 V230.1 H846 V228.7 H847 V228.5 H848 V228.8 H849 V227.9 H850 V227.0 H851 V228.1 H852 V230.7 H853 V231.1 H854 V230.5 H855 V231.2 H856 V227.2 H857 V227.5 H858 V230.4 H859 V230.9 H860 V227.6 H861 V228.4 H862 V230.4 H863 V230.2 H864 V229.2 H865 V228.5 H866 V228.8 H867 V230.4 H868 V230.1 H869 V227.6 H870 V227.2 H871 V228.7 H872 V228.4 H873 V227.5 H874 V228.0 H875 V229.1 H876 V228.2 H877 V228.8 H878 V229.5 H879 V231.4 H880 V231.5 H881 V231.9 H882 V232.4 H883 V233.0 H884 V233.0 H885 V233.0 H886 V233.0 H887 V233.0 H888 V233.0 H889 V233.0 H890 V233.0 H891 V233.0 H892 V233.0 H893 V233.0 H894 V233.0 H895 V233.0 H896 V233.0 H897 V233.0 H898 V233.0 H899 V233.0 H900 V233.0 H901 V233.0 H902 V233.0 H903 V233.0 H904 V233.0 H905 V233.0 H906 V233.0 H907 V233.0 H908 V233.0 H909 V233.0 H910 V233.0 H911 V233.0 H912 V233.0 H913 V233.0 H914 V233.0 H915 V233.0 H916 V233.0 H917 V233.0 H918 V233.0 H919 V233.0 H920 V234.0 H919 V234.0 H918 V234.0 H917 V234.0 H916 V234.0 H915 V234.0 H914 V234.0 H913 V234.0 H912 V234.0 H911 V234.0 H910 V234.0 H909 V234.0 H908 V234.0 H907 V234.0 H906 V234.0 H905 V234.0 H904 V234.0 H903 V234.0 H902 V234.0 H901 V234.0 H900 V234.0 H899 V234.0 H898 V234.0 H897 V234.0 H896 V234.0 H895 V234.0 H894 V234.0 H893 V234.0 H892 V234.0 H891 V234.0 H890 V234.0 H889 V234.0 H888 V234.0 H887 V234.0 H886 V234.0 H885 V234.0 H884 V234.0 H883 V234.3 H882 V234.3 H881 V236.3 H880 V235.2 H879 V236.2 H878 V238.1 H877 V236.2 H876 V239.2 H875 V239.4 H874 V238.4 H873 V238.1 H872 V236.5 H871 V239.4 H870 V238.5 H869 V238.0 H868 V239.6 H867 V237.3 H866 V238.7 H865 V238.6 H864 V239.9 H863 V237.9 H862 V237.3 H861 V236.3 H860 V235.5 H859 V235.6 H858 V236.0 H857 V238.0 H856 V239.7 H855 V239.8 H854 V237.7 H853 V238.6 H852 V239.3 H851 V239.0 H850 V239.0 H849 V236.9 H848 V236.5 H847 V238.1 H846 V236.0 H845 V236.1 H844 V237.0 H843 V236.7 H842 V234.3 H841 V234.0 H840 V234.0 H839 V234.0 H838 V234.0 H837 V234.0 H836 V234.0 H835 V234.0 H834 V234.0 H833 V236.8 H832 V239.9 H831 V241.2 H830 V239.7 H829 V242.4 H828 V238.7 H827 V240.8 H826 V239.8 H825 V241.8 H824 V242.2 H823 V237.5 H822 V241.4 H821 V243.0 H820 V239.6 H819 V240.9 H818 V234.3 H817 V234.5 H816 V234.2 H815 V234.1 H814 V234.3 H813 V235.4 H812 V236.0 H811 V236.4 H810 V236.8 H809 V236.0 H808 V237.1 H807 V236.3 H806 V237.2 H805 V237.1 H804 V235.4 H803 V236.5 H802 V235.3 H801 V235.0 H800 V236.5 H799 V236.6 H798 V234.9 H797 V235.3 H796 V236.2 H795 V236.8 H794 V234.8 H793 V236.0 H792 V235.7 H791 V235.1 H790 V235.7 H789 V236.9 H788 V236.7 H787 V236.2 H786 V236.2 H785 V237.3 H784 V237.0 H783 V236.3 H782 V237.3 H781 V236.7 H780 V237.3 H779 V237.2 H778 V237.9 H777 V237.5 H776 V235.7 H775 V236.1 H774 V238.0 H773 V237.3 H772 V237.9 H771 V239.3 H770 V237.9 H769 V239.9 H768 V236.1 H767 V239.9 H766 V239.2 H765 V239.4 H764 V236.1 H763 V235.6 H762 V240.0 H761 V238.4 H760 V237.7 H759 V238.0 H758 V240.2 H757 V237.7 H756 V237.7 H755 V236.8 H754 V238.5 H753 V239.1 H752 V238.3 H751 V240.4 H750 V237.6 H749 V239.2 H748 V236.1 H747 V240.1 H746 V234.0 H745 V234.0 H744 V234.0 H743 V234.0 H742 V234.0 H741 V234.0 H740 V234.0 H739 V234.0 H738 V234.0 H737 V234.0 H736 V234.0 H735 V234.0 H734 V234.0 H733 V234.0 H732 V234.0 H731 V234.0 H730 V234.0 H729 V234.0 H728 V234.0 H727 V234.0 H726 V234.0 H725 V234.0 H724 V234.2 H723 V234.4 H722 V235.5 H721 V235.5 H720 V236.2 H719 V236.5 H718 V236.8 H717 V235.6 H716 V236.2 H715 V236.4 H714 V238.1 H713 V236.7 H712 V236.6 H711 V238.6 H710 V235.4 H709 V235.4 H708 V238.9 H707 V236.3 H706 V236.6 H705 V238.5 H704 V238.1 H703 V236.2 H702 V237.3 H701 V237.6 H700 V239.9 H699 V239.0 H698 V238.3 H697 V239.8 H696 V238.8 H695 V238.6 H694 V237.4 H693 V236.9 H692 V238.0 H691 V239.3 H690 V237.6 H689 V238.9 H688 V237.2 H687 V238.5 H686 V238.9 H685 V237.9 H684 V239.0 H683 V238.2 H682 V237.6 H681 V236.7 H680 V235.3 H679 V235.7 H678Z" fill="#1f5e46"/><rect x="821" y="218.5" width="1" height="30" fill="#1f5e46"/><rect x="824" y="221.5" width="1" height="26" fill="#1f5e46"/><rect x="677" y="210" width="245" height="1" fill="#1f5e46"/></svg><div class="ab" style="left:1px;top:1px;width:48px;height:13px;background:#5a3a22;border-radius:3px;color:#fff;font-weight:bold;font-size:10px;line-height:13px;padding-left:2px;white-space:nowrap;overflow:hidden">region-02</div><div class="ab" style="left:226px;top:2px;width:11px;height:11px"><svg width="11" height="11"><rect x="0" y="0" width="11" height="11" rx="2" fill="#5a3a22"/><rect x="5" y="1" width="1.4" height="5" fill="#fff"/><path d="M5 5.5 L6.4 5.5 L9.5 9.5 L1.8 9.5Z" fill="#fff"/></svg></div></div>
<div class="ab" style="left:203px;top:259px;width:15px;height:22px;background:linear-gradient(90deg,#fafafa 0,#fafafa 1px,#e2e2e2 1px,#d6d6d6 40%,#c4c6c8 70%,#cdd0d2 90%,#5a5a5a 93%,#5a5a5a)"></div><svg class="ab" style="left:203px;top:259px" width="15" height="22"><rect x="6" y="6" width="8" height="1" fill="#505050"/><rect x="8" y="9" width="6" height="1" fill="#505050"/><rect x="9" y="12" width="5" height="1" fill="#505050"/><rect x="10" y="15" width="4" height="1" fill="#505050"/><rect x="12" y="17" width="2" height="1" fill="#505050"/></svg>
<div class="ab" style="left:233px;top:259px;width:1px;height:5px;background:#b8b8b8"></div>
<div class="ab" style="left:255px;top:259px;width:1px;height:5px;background:#b8b8b8"></div>
<div class="ab" style="left:276px;top:259px;width:1px;height:5px;background:#b8b8b8"></div>
<div class="ab" style="left:298px;top:259px;width:1px;height:5px;background:#b8b8b8"></div>
<div class="ab" style="left:319px;top:259px;width:1px;height:5px;background:#b8b8b8"></div>
<div class="ab" style="left:341px;top:259px;width:1px;height:5px;background:#b8b8b8"></div>
<div class="ab" style="left:362px;top:259px;width:1px;height:5px;background:#b8b8b8"></div>
<div class="ab" style="left:384px;top:259px;width:1px;height:5px;background:#b8b8b8"></div>
<div class="ab" style="left:405px;top:259px;width:1px;height:5px;background:#b8b8b8"></div>
<div class="ab" style="left:427px;top:259px;width:1px;height:5px;background:#b8b8b8"></div>
<div class="ab" style="left:448px;top:259px;width:1px;height:5px;background:#b8b8b8"></div>
<div class="ab" style="left:470px;top:259px;width:1px;height:5px;background:#b8b8b8"></div>
<div class="ab" style="left:491px;top:259px;width:1px;height:5px;background:#b8b8b8"></div>
<div class="ab" style="left:513px;top:259px;width:1px;height:5px;background:#b8b8b8"></div>
<div class="ab" style="left:535px;top:259px;width:1px;height:5px;background:#b8b8b8"></div>
<div class="ab" style="left:556px;top:259px;width:1px;height:5px;background:#b8b8b8"></div>
<div class="ab" style="left:578px;top:259px;width:1px;height:5px;background:#b8b8b8"></div>
<div class="ab" style="left:599px;top:259px;width:1px;height:5px;background:#b8b8b8"></div>
<div class="ab" style="left:621px;top:259px;width:1px;height:5px;background:#b8b8b8"></div>
<div class="ab" style="left:642px;top:259px;width:1px;height:5px;background:#b8b8b8"></div>
<div class="ab" style="left:664px;top:259px;width:1px;height:5px;background:#b8b8b8"></div>
<div class="ab" style="left:685px;top:259px;width:1px;height:5px;background:#b8b8b8"></div>
<div class="ab" style="left:707px;top:259px;width:1px;height:5px;background:#b8b8b8"></div>
<div class="ab" style="left:728px;top:259px;width:1px;height:5px;background:#b8b8b8"></div>
<div class="ab" style="left:750px;top:259px;width:1px;height:5px;background:#b8b8b8"></div>
<div class="ab" style="left:771px;top:259px;width:1px;height:5px;background:#b8b8b8"></div>
<div class="ab" style="left:793px;top:259px;width:1px;height:5px;background:#b8b8b8"></div>
<div class="ab" style="left:815px;top:259px;width:1px;height:5px;background:#b8b8b8"></div>
<div class="ab" style="left:836px;top:259px;width:1px;height:5px;background:#b8b8b8"></div>
<div class="ab" style="left:858px;top:259px;width:1px;height:5px;background:#b8b8b8"></div>
<div class="ab" style="left:879px;top:259px;width:1px;height:5px;background:#b8b8b8"></div>
<div class="ab" style="left:901px;top:259px;width:1px;height:5px;background:#b8b8b8"></div>
<div class="ab" style="left:922px;top:259px;width:1px;height:5px;background:#b8b8b8"></div>
<div class="ab" style="left:944px;top:259px;width:1px;height:5px;background:#b8b8b8"></div>
<div class="ab" style="left:965px;top:259px;width:1px;height:5px;background:#b8b8b8"></div>
<div class="ab" style="left:987px;top:259px;width:1px;height:5px;background:#b8b8b8"></div>
<div class="ab" style="left:218px;top:266px;width:781px;height:15px;background:#e6e8e0"></div>
<div class="ab" style="left:233px;top:264px;width:1px;height:17px;background:#8a8a82"></div>
<div class="ab" style="left:255px;top:264px;width:1px;height:17px;background:#8a8a82"></div>
<div class="ab" style="left:276px;top:264px;width:1px;height:17px;background:#8a8a82"></div>
<div class="ab" style="left:298px;top:264px;width:1px;height:17px;background:#8a8a82"></div>
<div class="ab" style="left:319px;top:264px;width:1px;height:17px;background:#8a8a82"></div>
<div class="ab" style="left:341px;top:264px;width:1px;height:17px;background:#8a8a82"></div>
<div class="ab" style="left:362px;top:264px;width:1px;height:17px;background:#8a8a82"></div>
<div class="ab" style="left:384px;top:264px;width:1px;height:17px;background:#8a8a82"></div>
<div class="ab" style="left:405px;top:264px;width:1px;height:17px;background:#8a8a82"></div>
<div class="ab" style="left:427px;top:264px;width:1px;height:17px;background:#8a8a82"></div>
<div class="ab" style="left:448px;top:264px;width:1px;height:17px;background:#8a8a82"></div>
<div class="ab" style="left:470px;top:264px;width:1px;height:17px;background:#8a8a82"></div>
<div class="ab" style="left:491px;top:264px;width:1px;height:17px;background:#8a8a82"></div>
<div class="ab" style="left:513px;top:264px;width:1px;height:17px;background:#8a8a82"></div>
<div class="ab" style="left:535px;top:264px;width:1px;height:17px;background:#8a8a82"></div>
<div class="ab" style="left:556px;top:264px;width:1px;height:17px;background:#8a8a82"></div>
<div class="ab" style="left:578px;top:264px;width:1px;height:17px;background:#8a8a82"></div>
<div class="ab" style="left:599px;top:264px;width:1px;height:17px;background:#8a8a82"></div>
<div class="ab" style="left:621px;top:264px;width:1px;height:17px;background:#8a8a82"></div>
<div class="ab" style="left:642px;top:264px;width:1px;height:17px;background:#8a8a82"></div>
<div class="ab" style="left:664px;top:264px;width:1px;height:17px;background:#8a8a82"></div>
<div class="ab" style="left:685px;top:264px;width:1px;height:17px;background:#8a8a82"></div>
<div class="ab" style="left:707px;top:264px;width:1px;height:17px;background:#8a8a82"></div>
<div class="ab" style="left:728px;top:264px;width:1px;height:17px;background:#8a8a82"></div>
<div class="ab" style="left:750px;top:264px;width:1px;height:17px;background:#8a8a82"></div>
<div class="ab" style="left:771px;top:264px;width:1px;height:17px;background:#8a8a82"></div>
<div class="ab" style="left:793px;top:264px;width:1px;height:17px;background:#8a8a82"></div>
<div class="ab" style="left:815px;top:264px;width:1px;height:17px;background:#8a8a82"></div>
<div class="ab" style="left:836px;top:264px;width:1px;height:17px;background:#8a8a82"></div>
<div class="ab" style="left:858px;top:264px;width:1px;height:17px;background:#8a8a82"></div>
<div class="ab" style="left:879px;top:264px;width:1px;height:17px;background:#8a8a82"></div>
<div class="ab" style="left:901px;top:264px;width:1px;height:17px;background:#8a8a82"></div>
<div class="ab" style="left:922px;top:264px;width:1px;height:17px;background:#8a8a82"></div>
<div class="ab" style="left:944px;top:264px;width:1px;height:17px;background:#8a8a82"></div>
<div class="ab" style="left:965px;top:264px;width:1px;height:17px;background:#8a8a82"></div>
<div class="ab" style="left:987px;top:264px;width:1px;height:17px;background:#8a8a82"></div>
<div class="ab" style="left:218px;top:264px;width:781px;height:2px;background:#1e1e1e"></div>
<div class="ab" style="left:203px;top:281px;width:796px;height:1px;background:#9a9a9a"></div><div class="ab" style="left:204px;top:281px;width:13px;height:1px;background:#454545"></div>
<svg class="ab" style="left:203px;top:282px" width="15" height="152"><rect width="15" height="152" fill="#fff"/><rect x="0" y="0" width="15" height="1" fill="#bbb"/><rect x="0" y="18" width="15" height="1" fill="#333"/><rect x="0" y="81" width="15" height="1" fill="#333"/><rect x="0" y="126" width="15" height="1" fill="#333"/><rect x="8" y="6" width="7" height="1" fill="#333"/><rect x="-3" y="4" width="12" height="5" rx="2.5" fill="#242424"/><rect x="1" y="6" width="6" height="1" fill="#4a4a4a" opacity="0.8"/><rect x="8" y="31" width="7" height="1" fill="#333"/><rect x="-3" y="27" width="12" height="9" rx="2.5" fill="#242424"/><rect x="1" y="29" width="6" height="5" fill="#4a4a4a" opacity="0.8"/><rect x="8" y="49" width="7" height="1" fill="#333"/><rect x="-3" y="45" width="12" height="9" rx="2.5" fill="#242424"/><rect x="1" y="47" width="6" height="5" fill="#4a4a4a" opacity="0.8"/><rect x="8" y="67" width="7" height="1" fill="#333"/><rect x="-3" y="63" width="12" height="9" rx="2.5" fill="#242424"/><rect x="1" y="65" width="6" height="5" fill="#4a4a4a" opacity="0.8"/><rect x="8" y="94" width="7" height="1" fill="#333"/><rect x="-3" y="90" width="12" height="9" rx="2.5" fill="#242424"/><rect x="1" y="92" width="6" height="5" fill="#4a4a4a" opacity="0.8"/><rect x="8" y="112" width="7" height="1" fill="#333"/><rect x="-3" y="108" width="12" height="9" rx="2.5" fill="#242424"/><rect x="1" y="110" width="6" height="5" fill="#4a4a4a" opacity="0.8"/><rect x="8" y="139" width="7" height="1" fill="#333"/><rect x="-3" y="135" width="12" height="9" rx="2.5" fill="#242424"/><rect x="1" y="137" width="6" height="5" fill="#4a4a4a" opacity="0.8"/><text x="6" y="17" font-family="Liberation Sans" font-size="10" fill="#223">3</text><text x="6" y="125" font-family="Liberation Sans" font-size="10" fill="#223">2</text><rect x="0" y="149" width="15" height="1" fill="#ddd"/></svg>
<div class="ab" style="left:233px;top:282px;width:1px;height:153px;background:#c4c4c4"></div>
<div class="ab" style="left:255px;top:282px;width:1px;height:153px;background:#c4c4c4"></div>
<div class="ab" style="left:276px;top:282px;width:1px;height:153px;background:#c4c4c4"></div>
<div class="ab" style="left:298px;top:282px;width:1px;height:153px;background:#c4c4c4"></div>
<div class="ab" style="left:319px;top:282px;width:1px;height:153px;background:#c4c4c4"></div>
<div class="ab" style="left:341px;top:282px;width:1px;height:153px;background:#c4c4c4"></div>
<div class="ab" style="left:362px;top:282px;width:1px;height:153px;background:#c4c4c4"></div>
<div class="ab" style="left:384px;top:282px;width:1px;height:153px;background:#c4c4c4"></div>
<div class="ab" style="left:405px;top:282px;width:1px;height:153px;background:#c4c4c4"></div>
<div class="ab" style="left:427px;top:282px;width:1px;height:153px;background:#c4c4c4"></div>
<div class="ab" style="left:448px;top:282px;width:1px;height:153px;background:#c4c4c4"></div>
<div class="ab" style="left:470px;top:282px;width:1px;height:153px;background:#c4c4c4"></div>
<div class="ab" style="left:491px;top:282px;width:1px;height:153px;background:#c4c4c4"></div>
<div class="ab" style="left:513px;top:282px;width:1px;height:153px;background:#c4c4c4"></div>
<div class="ab" style="left:535px;top:282px;width:1px;height:153px;background:#c4c4c4"></div>
<div class="ab" style="left:556px;top:282px;width:1px;height:153px;background:#c4c4c4"></div>
<div class="ab" style="left:578px;top:282px;width:1px;height:153px;background:#c4c4c4"></div>
<div class="ab" style="left:599px;top:282px;width:1px;height:153px;background:#c4c4c4"></div>
<div class="ab" style="left:621px;top:282px;width:1px;height:153px;background:#c4c4c4"></div>
<div class="ab" style="left:642px;top:282px;width:1px;height:153px;background:#c4c4c4"></div>
<div class="ab" style="left:664px;top:282px;width:1px;height:153px;background:#c4c4c4"></div>
<div class="ab" style="left:685px;top:282px;width:1px;height:153px;background:#c4c4c4"></div>
<div class="ab" style="left:707px;top:282px;width:1px;height:153px;background:#c4c4c4"></div>
<div class="ab" style="left:728px;top:282px;width:1px;height:153px;background:#c4c4c4"></div>
<div class="ab" style="left:750px;top:282px;width:1px;height:153px;background:#c4c4c4"></div>
<div class="ab" style="left:771px;top:282px;width:1px;height:153px;background:#c4c4c4"></div>
<div class="ab" style="left:793px;top:282px;width:1px;height:153px;background:#c4c4c4"></div>
<div class="ab" style="left:815px;top:282px;width:1px;height:153px;background:#c4c4c4"></div>
<div class="ab" style="left:836px;top:282px;width:1px;height:153px;background:#c4c4c4"></div>
<div class="ab" style="left:858px;top:282px;width:1px;height:153px;background:#c4c4c4"></div>
<div class="ab" style="left:879px;top:282px;width:1px;height:153px;background:#c4c4c4"></div>
<div class="ab" style="left:901px;top:282px;width:1px;height:153px;background:#c4c4c4"></div>
<div class="ab" style="left:922px;top:282px;width:1px;height:153px;background:#c4c4c4"></div>
<div class="ab" style="left:944px;top:282px;width:1px;height:153px;background:#c4c4c4"></div>
<div class="ab" style="left:965px;top:282px;width:1px;height:153px;background:#c4c4c4"></div>
<div class="ab" style="left:987px;top:282px;width:1px;height:153px;background:#c4c4c4"></div>
<div class="ab" style="left:504px;top:283px;width:1px;height:151px;background:#222"></div>
<div class="ab" style="left:218px;top:283px;width:164px;height:151px;background:#b4fcfc;border:1px solid #111;overflow:hidden"><div class="ab" style="left:-1px;top:-1px;width:164px;height:151px"><div class="ab" style="left:15px;top:0;width:1px;height:151px;background:#a0e0f8"></div><div class="ab" style="left:37px;top:0;width:1px;height:151px;background:#a0e0f8"></div><div class="ab" style="left:58px;top:0;width:1px;height:151px;background:#a0e0f8"></div><div class="ab" style="left:80px;top:0;width:1px;height:151px;background:#a0e0f8"></div><div class="ab" style="left:101px;top:0;width:1px;height:151px;background:#a0e0f8"></div><div class="ab" style="left:123px;top:0;width:1px;height:151px;background:#a0e0f8"></div><div class="ab" style="left:144px;top:0;width:1px;height:151px;background:#a0e0f8"></div></div><div class="ab" style="left:7px;top:7px;width:32px;height:9px;background:#1f3a60;border-radius:4px"></div><div class="ab" style="left:7px;top:34px;width:32px;height:9px;background:#1f3a60;border-radius:4px"></div><div class="ab" style="left:7px;top:70px;width:26px;height:9px;background:#1f3a60;border-radius:4px"></div><div class="ab" style="left:52px;top:106px;width:95px;height:9px;background:#1f3a60;border-radius:4px"></div></div>
<div class="ab" style="left:636px;top:283px;width:374px;height:151px;background:#b4fcfc;border:1px solid #111;overflow:hidden"><div class="ab" style="left:-1px;top:-1px;width:374px;height:151px"><div class="ab" style="left:6px;top:0;width:1px;height:151px;background:#a0f0f0"></div><div class="ab" style="left:28px;top:0;width:1px;height:151px;background:#a0f0f0"></div><div class="ab" style="left:49px;top:0;width:1px;height:151px;background:#a0f0f0"></div><div class="ab" style="left:71px;top:0;width:1px;height:151px;background:#a0f0f0"></div><div class="ab" style="left:92px;top:0;width:1px;height:151px;background:#a0f0f0"></div><div class="ab" style="left:114px;top:0;width:1px;height:151px;background:#a0f0f0"></div><div class="ab" style="left:135px;top:0;width:1px;height:151px;background:#a0f0f0"></div><div class="ab" style="left:157px;top:0;width:1px;height:151px;background:#a0f0f0"></div><div class="ab" style="left:179px;top:0;width:1px;height:151px;background:#a0f0f0"></div><div class="ab" style="left:200px;top:0;width:1px;height:151px;background:#a0f0f0"></div><div class="ab" style="left:222px;top:0;width:1px;height:151px;background:#a0f0f0"></div><div class="ab" style="left:243px;top:0;width:1px;height:151px;background:#a0f0f0"></div><div class="ab" style="left:265px;top:0;width:1px;height:151px;background:#a0f0f0"></div><div class="ab" style="left:286px;top:0;width:1px;height:151px;background:#a0f0f0"></div><div class="ab" style="left:308px;top:0;width:1px;height:151px;background:#a0f0f0"></div><div class="ab" style="left:329px;top:0;width:1px;height:151px;background:#a0f0f0"></div><div class="ab" style="left:351px;top:0;width:1px;height:151px;background:#a0f0f0"></div><div class="ab" style="left:372px;top:0;width:1px;height:151px;background:#a0f0f0"></div></div><div class="ab" style="left:1px;top:1px;width:70px;height:13px;background:#2f6060;border-radius:3px;color:#fff;font-weight:bold;font-size:10px;line-height:13px;padding-left:2px;white-space:nowrap;overflow:hidden">Instrument-02</div><div class="ab" style="left:16px;top:115px;width:13px;height:8px;background:#1f5a40;border-radius:4px"></div><div class="ab" style="left:35px;top:88px;width:11px;height:9px;background:#1f5a40;border-radius:4px"></div><div class="ab" style="left:56px;top:70px;width:11px;height:9px;background:#1f5a40;border-radius:4px"></div><svg class="ab" style="left:78px;top:52px" width="5" height="9"><path d="M2.5 0 L5 4.5 L2.5 9 L0 4.5Z" fill="#1f5a40"/></svg><div class="ab" style="left:105px;top:43px;width:35px;height:9px;background:#1f5a40;border-radius:4px"></div><div class="ab" style="left:153px;top:52px;width:41px;height:9px;background:#1f5a40;border-radius:4px"></div><div class="ab" style="left:153px;top:70px;width:46px;height:9px;background:#1f5a40;border-radius:4px"></div><div class="ab" style="left:153px;top:97px;width:42px;height:9px;background:#1f5a40;border-radius:4px"></div><div class="ab" style="left:234px;top:52px;width:23px;height:9px;background:#1f5a40;border-radius:4px"></div><div class="ab" style="left:234px;top:79px;width:22px;height:9px;background:#1f5a40;border-radius:4px"></div><div class="ab" style="left:231px;top:115px;width:24px;height:8px;background:#1f5a40;border-radius:4px"></div><div class="ab" style="left:274px;top:34px;width:33px;height:8px;background:#1f5a40;border-radius:4px"></div><div class="ab" style="left:274px;top:61px;width:33px;height:9px;background:#1f5a40;border-radius:4px"></div><div class="ab" style="left:274px;top:97px;width:27px;height:9px;background:#1f5a40;border-radius:4px"></div><div class="ab" style="left:320px;top:133px;width:53px;height:8px;background:#1f5a40;border-radius:4px"></div></div>
<div class="ab" style="left:203px;top:435px;width:796px;height:1px;background:#9a9a9a"></div><div class="ab" style="left:204px;top:435px;width:13px;height:1px;background:#454545"></div><div class="ab" style="left:218px;top:434px;width:781px;height:1px;background:#d2d2d2"></div>
<div class="ab" style="left:203px;top:436px;width:15px;height:96px;background:linear-gradient(90deg,#fafafa 0,#fafafa 1px,#e2e2e2 1px,#d6d6d6 40%,#c4c6c8 70%,#cdd0d2 90%,#5a5a5a 93%,#5a5a5a)"></div><svg class="ab" style="left:203px;top:436px" width="15" height="96"><rect x="6" y="8" width="8" height="1" fill="#505050"/><rect x="11" y="18" width="3" height="1" fill="#505050"/><rect x="9" y="28" width="5" height="1" fill="#505050"/><rect x="11" y="38" width="3" height="1" fill="#505050"/><rect x="6" y="48" width="8" height="1" fill="#505050"/><rect x="11" y="58" width="3" height="1" fill="#505050"/><rect x="9" y="68" width="5" height="1" fill="#505050"/><rect x="11" y="78" width="3" height="1" fill="#505050"/><rect x="6" y="88" width="8" height="1" fill="#505050"/></svg>
<div class="ab" style="left:233px;top:436px;width:1px;height:96px;background:#c4c4c4"></div>
<div class="ab" style="left:255px;top:436px;width:1px;height:96px;background:#c4c4c4"></div>
<div class="ab" style="left:276px;top:436px;width:1px;height:96px;background:#c4c4c4"></div>
<div class="ab" style="left:298px;top:436px;width:1px;height:96px;background:#c4c4c4"></div>
<div class="ab" style="left:319px;top:436px;width:1px;height:96px;background:#c4c4c4"></div>
<div class="ab" style="left:341px;top:436px;width:1px;height:96px;background:#c4c4c4"></div>
<div class="ab" style="left:362px;top:436px;width:1px;height:96px;background:#c4c4c4"></div>
<div class="ab" style="left:384px;top:436px;width:1px;height:96px;background:#c4c4c4"></div>
<div class="ab" style="left:405px;top:436px;width:1px;height:96px;background:#c4c4c4"></div>
<div class="ab" style="left:427px;top:436px;width:1px;height:96px;background:#c4c4c4"></div>
<div class="ab" style="left:448px;top:436px;width:1px;height:96px;background:#c4c4c4"></div>
<div class="ab" style="left:470px;top:436px;width:1px;height:96px;background:#c4c4c4"></div>
<div class="ab" style="left:491px;top:436px;width:1px;height:96px;background:#c4c4c4"></div>
<div class="ab" style="left:513px;top:436px;width:1px;height:96px;background:#c4c4c4"></div>
<div class="ab" style="left:535px;top:436px;width:1px;height:96px;background:#c4c4c4"></div>
<div class="ab" style="left:556px;top:436px;width:1px;height:96px;background:#c4c4c4"></div>
<div class="ab" style="left:578px;top:436px;width:1px;height:96px;background:#c4c4c4"></div>
<div class="ab" style="left:599px;top:436px;width:1px;height:96px;background:#c4c4c4"></div>
<div class="ab" style="left:621px;top:436px;width:1px;height:96px;background:#c4c4c4"></div>
<div class="ab" style="left:642px;top:436px;width:1px;height:96px;background:#c4c4c4"></div>
<div class="ab" style="left:664px;top:436px;width:1px;height:96px;background:#c4c4c4"></div>
<div class="ab" style="left:685px;top:436px;width:1px;height:96px;background:#c4c4c4"></div>
<div class="ab" style="left:707px;top:436px;width:1px;height:96px;background:#c4c4c4"></div>
<div class="ab" style="left:728px;top:436px;width:1px;height:96px;background:#c4c4c4"></div>
<div class="ab" style="left:750px;top:436px;width:1px;height:96px;background:#c4c4c4"></div>
<div class="ab" style="left:771px;top:436px;width:1px;height:96px;background:#c4c4c4"></div>
<div class="ab" style="left:793px;top:436px;width:1px;height:96px;background:#c4c4c4"></div>
<div class="ab" style="left:815px;top:436px;width:1px;height:96px;background:#c4c4c4"></div>
<div class="ab" style="left:836px;top:436px;width:1px;height:96px;background:#c4c4c4"></div>
<div class="ab" style="left:858px;top:436px;width:1px;height:96px;background:#c4c4c4"></div>
<div class="ab" style="left:879px;top:436px;width:1px;height:96px;background:#c4c4c4"></div>
<div class="ab" style="left:901px;top:436px;width:1px;height:96px;background:#c4c4c4"></div>
<div class="ab" style="left:922px;top:436px;width:1px;height:96px;background:#c4c4c4"></div>
<div class="ab" style="left:944px;top:436px;width:1px;height:96px;background:#c4c4c4"></div>
<div class="ab" style="left:965px;top:436px;width:1px;height:96px;background:#c4c4c4"></div>
<div class="ab" style="left:987px;top:436px;width:1px;height:96px;background:#c4c4c4"></div>
<div class="ab" style="left:284px;top:437px;width:726px;height:94px;background:#e8d8fc;border:1px solid #111;overflow:hidden"><div class="ab" style="left:-1px;top:-1px;width:726px;height:94px"><div class="ab" style="left:14px;top:0;width:1px;height:94px;background:#c4b4ec"></div><div class="ab" style="left:35px;top:0;width:1px;height:94px;background:#c4b4ec"></div><div class="ab" style="left:57px;top:0;width:1px;height:94px;background:#c4b4ec"></div><div class="ab" style="left:78px;top:0;width:1px;height:94px;background:#c4b4ec"></div><div class="ab" style="left:100px;top:0;width:1px;height:94px;background:#c4b4ec"></div><div class="ab" style="left:121px;top:0;width:1px;height:94px;background:#c4b4ec"></div><div class="ab" style="left:143px;top:0;width:1px;height:94px;background:#c4b4ec"></div><div class="ab" style="left:164px;top:0;width:1px;height:94px;background:#c4b4ec"></div><div class="ab" style="left:186px;top:0;width:1px;height:94px;background:#c4b4ec"></div><div class="ab" style="left:207px;top:0;width:1px;height:94px;background:#c4b4ec"></div><div class="ab" style="left:229px;top:0;width:1px;height:94px;background:#c4b4ec"></div><div class="ab" style="left:251px;top:0;width:1px;height:94px;background:#c4b4ec"></div><div class="ab" style="left:272px;top:0;width:1px;height:94px;background:#c4b4ec"></div><div class="ab" style="left:294px;top:0;width:1px;height:94px;background:#c4b4ec"></div><div class="ab" style="left:315px;top:0;width:1px;height:94px;background:#c4b4ec"></div><div class="ab" style="left:337px;top:0;width:1px;height:94px;background:#c4b4ec"></div><div class="ab" style="left:358px;top:0;width:1px;height:94px;background:#c4b4ec"></div><div class="ab" style="left:380px;top:0;width:1px;height:94px;background:#c4b4ec"></div><div class="ab" style="left:401px;top:0;width:1px;height:94px;background:#c4b4ec"></div><div class="ab" style="left:423px;top:0;width:1px;height:94px;background:#c4b4ec"></div><div class="ab" style="left:444px;top:0;width:1px;height:94px;background:#c4b4ec"></div><div class="ab" style="left:466px;top:0;width:1px;height:94px;background:#c4b4ec"></div><div class="ab" style="left:487px;top:0;width:1px;height:94px;background:#c4b4ec"></div><div class="ab" style="left:509px;top:0;width:1px;height:94px;background:#c4b4ec"></div><div class="ab" style="left:531px;top:0;width:1px;height:94px;background:#c4b4ec"></div><div class="ab" style="left:552px;top:0;width:1px;height:94px;background:#c4b4ec"></div><div class="ab" style="left:574px;top:0;width:1px;height:94px;background:#c4b4ec"></div><div class="ab" style="left:595px;top:0;width:1px;height:94px;background:#c4b4ec"></div><div class="ab" style="left:617px;top:0;width:1px;height:94px;background:#c4b4ec"></div><div class="ab" style="left:638px;top:0;width:1px;height:94px;background:#c4b4ec"></div><div class="ab" style="left:660px;top:0;width:1px;height:94px;background:#c4b4ec"></div><div class="ab" style="left:681px;top:0;width:1px;height:94px;background:#c4b4ec"></div><div class="ab" style="left:703px;top:0;width:1px;height:94px;background:#c4b4ec"></div><div class="ab" style="left:724px;top:0;width:1px;height:94px;background:#c4b4ec"></div></div><svg class="ab" style="left:0;top:0" width="726" height="95" viewBox="285 438 726 95"><path d="M285 476.0 V476.0 H286 V478.1 H287 V477.8 H288 V474.6 H289 V474.8 H290 V474.8 H291 V471.6 H292 V471.1 H293 V469.2 H294 V471.1 H295 V472.7 H296 V470.2 H297 V473.0 H298 V469.6 H299 V472.8 H300 V471.0 H301 V466.4 H302 V468.8 H303 V462.0 H304 V467.2 H305 V466.9 H306 V466.7 H307 V465.9 H308 V466.6 H309 V463.7 H310 V467.1 H311 V470.0 H312 V473.2 H313 V469.6 H314 V472.9 H315 V473.3 H316 V472.0 H317 V473.3 H318 V468.6 H319 V473.5 H320 V470.0 H321 V471.9 H322 V470.6 H323 V467.2 H324 V473.7 H325 V469.2 H326 V473.6 H327 V473.6 H328 V470.1 H329 V473.0 H330 V469.6 H331 V469.7 H332 V471.8 H333 V469.3 H334 V467.6 H335 V468.6 H336 V472.9 H337 V469.8 H338 V467.8 H339 V468.7 H340 V471.8 H341 V474.4 H342 V470.6 H343 V471.3 H344 V471.1 H345 V474.4 H346 V470.7 H347 V470.5 H348 V469.3 H349 V472.3 H350 V472.2 H351 V467.4 H352 V468.4 H353 V473.7 H354 V471.7 H355 V467.9 H356 V472.9 H357 V470.4 H358 V471.1 H359 V471.6 H360 V473.0 H361 V470.8 H362 V472.5 H363 V472.0 H364 V466.4 H365 V461.4 H366 V468.3 H367 V473.0 H368 V466.3 H369 V470.3 H370 V472.7 H371 V472.3 H372 V465.0 H373 V470.3 H374 V469.8 H375 V466.7 H376 V470.9 H377 V473.0 H378 V468.0 H379 V471.4 H380 V468.6 H381 V472.8 H382 V470.7 H383 V474.9 H384 V472.5 H385 V472.8 H386 V473.5 H387 V472.3 H388 V471.9 H389 V474.0 H390 V472.9 H391 V469.5 H392 V471.2 H393 V473.0 H394 V474.7 H395 V472.0 H396 V472.3 H397 V473.4 H398 V473.6 H399 V469.9 H400 V473.3 H401 V470.3 H402 V471.4 H403 V469.1 H404 V474.0 H405 V473.3 H406 V469.9 H407 V474.8 H408 V473.4 H409 V471.6 H410 V473.2 H411 V473.6 H412 V470.0 H413 V469.1 H414 V470.3 H415 V466.7 H416 V468.8 H417 V471.4 H418 V465.4 H419 V466.2 H420 V472.4 H421 V468.6 H422 V468.9 H423 V468.7 H424 V468.4 H425 V469.8 H426 V471.2 H427 V471.8 H428 V472.4 H429 V472.6 H430 V472.0 H431 V470.8 H432 V472.7 H433 V471.3 H434 V475.5 H435 V475.8 H436 V472.6 H437 V472.9 H438 V468.9 H439 V470.3 H440 V468.8 H441 V468.1 H442 V470.2 H443 V470.4 H444 V470.2 H445 V467.5 H446 V467.4 H447 V467.0 H448 V470.7 H449 V470.7 H450 V466.4 H451 V468.9 H452 V470.0 H453 V470.7 H454 V469.7 H455 V463.9 H456 V470.0 H457 V471.4 H458 V465.9 H459 V471.1 H460 V472.3 H461 V472.3 H462 V470.3 H463 V471.6 H464 V472.7 H465 V470.4 H466 V471.9 H467 V468.9 H468 V471.4 H469 V469.5 H470 V472.3 H471 V468.3 H472 V471.6 H473 V471.5 H474 V469.0 H475 V469.0 H476 V473.2 H477 V472.0 H478 V473.4 H479 V472.3 H480 V469.7 H481 V474.5 H482 V470.6 H483 V473.8 H484 V473.1 H485 V475.0 H486 V474.3 H487 V470.3 H488 V475.1 H489 V475.5 H490 V474.7 H491 V475.5 H492 V473.8 H493 V471.5 H494 V475.7 H495 V475.4 H496 V472.1 H497 V470.7 H498 V471.8 H499 V475.0 H500 V473.4 H501 V473.8 H502 V474.3 H503 V471.2 H504 V470.2 H505 V467.2 H506 V472.0 H507 V471.7 H508 V474.2 H509 V471.7 H510 V474.6 H511 V473.5 H512 V474.5 H513 V475.3 H514 V471.3 H515 V472.5 H516 V475.5 H517 V466.8 H518 V474.3 H519 V471.1 H520 V470.4 H521 V470.7 H522 V474.2 H523 V469.9 H524 V470.7 H525 V474.2 H526 V474.9 H527 V475.0 H528 V474.6 H529 V471.2 H530 V472.5 H531 V472.0 H532 V473.4 H533 V474.1 H534 V471.3 H535 V474.5 H536 V471.4 H537 V474.7 H538 V472.3 H539 V471.1 H540 V475.1 H541 V474.9 H542 V472.0 H543 V468.1 H544 V473.6 H545 V475.9 H546 V466.9 H547 V473.4 H548 V474.4 H549 V473.0 H550 V474.5 H551 V466.6 H552 V469.5 H553 V468.4 H554 V474.1 H555 V472.4 H556 V467.7 H557 V473.1 H558 V468.3 H559 V471.0 H560 V473.9 H561 V471.1 H562 V469.1 H563 V472.7 H564 V473.4 H565 V472.2 H566 V467.0 H567 V472.7 H568 V471.8 H569 V471.8 H570 V468.5 H571 V471.2 H572 V464.4 H573 V472.5 H574 V470.3 H575 V471.2 H576 V471.6 H577 V470.7 H578 V470.9 H579 V469.7 H580 V469.1 H581 V469.3 H582 V469.8 H583 V473.2 H584 V472.5 H585 V473.2 H586 V471.8 H587 V467.3 H588 V468.9 H589 V471.3 H590 V467.8 H591 V472.8 H592 V471.8 H593 V469.8 H594 V472.2 H595 V467.2 H596 V472.0 H597 V472.6 H598 V473.3 H599 V471.0 H600 V470.6 H601 V472.1 H602 V469.8 H603 V473.2 H604 V472.2 H605 V473.0 H606 V470.7 H607 V469.7 H608 V471.3 H609 V473.4 H610 V471.7 H611 V472.0 H612 V468.1 H613 V469.8 H614 V471.5 H615 V473.0 H616 V472.7 H617 V471.5 H618 V473.0 H619 V466.8 H620 V471.2 H621 V468.5 H622 V469.3 H623 V471.2 H624 V473.6 H625 V468.6 H626 V470.9 H627 V472.2 H628 V473.1 H629 V468.2 H630 V472.8 H631 V471.3 H632 V469.8 H633 V469.5 H634 V474.6 H635 V472.7 H636 V474.4 H637 V470.2 H638 V469.5 H639 V471.7 H640 V473.1 H641 V471.2 H642 V468.7 H643 V470.7 H644 V471.0 H645 V470.8 H646 V469.2 H647 V470.0 H648 V464.9 H649 V463.7 H650 V469.4 H651 V467.0 H652 V469.7 H653 V469.6 H654 V464.8 H655 V468.1 H656 V469.1 H657 V470.7 H658 V471.6 H659 V468.2 H660 V464.2 H661 V464.4 H662 V464.5 H663 V468.1 H664 V461.5 H665 V471.2 H666 V466.3 H667 V472.1 H668 V471.5 H669 V469.4 H670 V467.7 H671 V467.1 H672 V467.0 H673 V472.0 H674 V472.1 H675 V471.5 H676 V469.0 H677 V471.0 H678 V470.1 H679 V469.7 H680 V472.0 H681 V469.2 H682 V468.4 H683 V471.5 H684 V469.7 H685 V473.2 H686 V474.5 H687 V469.3 H688 V474.0 H689 V474.0 H690 V470.3 H691 V474.7 H692 V471.8 H693 V474.9 H694 V473.2 H695 V469.6 H696 V470.7 H697 V474.9 H698 V474.3 H699 V474.6 H700 V471.9 H701 V470.7 H702 V473.0 H703 V469.9 H704 V472.5 H705 V472.6 H706 V474.7 H707 V472.3 H708 V472.7 H709 V470.8 H710 V473.8 H711 V473.9 H712 V472.1 H713 V475.5 H714 V469.2 H715 V475.6 H716 V472.6 H717 V473.1 H718 V471.1 H719 V472.5 H720 V469.3 H721 V468.8 H722 V471.3 H723 V473.1 H724 V466.2 H725 V471.3 H726 V470.2 H727 V472.0 H728 V467.5 H729 V473.0 H730 V472.2 H731 V467.8 H732 V459.5 H733 V471.1 H734 V470.5 H735 V472.4 H736 V472.2 H737 V473.7 H738 V470.9 H739 V467.2 H740 V471.4 H741 V463.4 H742 V468.8 H743 V470.8 H744 V471.8 H745 V471.6 H746 V470.6 H747 V469.4 H748 V468.7 H749 V462.6 H750 V469.1 H751 V467.0 H752 V472.9 H753 V468.9 H754 V471.5 H755 V463.1 H756 V473.4 H757 V469.4 H758 V469.7 H759 V472.1 H760 V472.1 H761 V471.5 H762 V471.4 H763 V466.1 H764 V468.3 H765 V467.4 H766 V471.6 H767 V470.8 H768 V464.7 H769 V471.0 H770 V467.8 H771 V468.7 H772 V465.8 H773 V468.8 H774 V462.1 H775 V469.3 H776 V468.3 H777 V470.0 H778 V472.2 H779 V467.5 H780 V468.5 H781 V471.1 H782 V474.7 H783 V470.6 H784 V472.7 H785 V465.3 H786 V472.2 H787 V475.9 H788 V473.8 H789 V475.1 H790 V474.9 H791 V474.9 H792 V474.7 H793 V474.4 H794 V464.5 H795 V474.5 H796 V473.5 H797 V474.1 H798 V469.8 H799 V469.7 H800 V471.9 H801 V472.5 H802 V471.4 H803 V465.9 H804 V466.0 H805 V470.1 H806 V471.9 H807 V471.7 H808 V469.3 H809 V469.7 H810 V466.7 H811 V470.1 H812 V471.2 H813 V472.9 H814 V472.0 H815 V467.9 H816 V471.4 H817 V471.0 H818 V471.6 H819 V471.5 H820 V469.9 H821 V471.6 H822 V471.7 H823 V471.4 H824 V471.3 H825 V469.9 H826 V464.5 H827 V468.8 H828 V469.9 H829 V470.5 H830 V467.6 H831 V470.7 H832 V471.1 H833 V471.4 H834 V469.2 H835 V470.8 H836 V470.1 H837 V469.2 H838 V470.6 H839 V471.9 H840 V469.5 H841 V471.9 H842 V467.2 H843 V471.7 H844 V472.9 H845 V475.7 H846 V472.7 H847 V474.2 H848 V471.7 H849 V469.6 H850 V468.8 H851 V464.1 H852 V471.9 H853 V470.8 H854 V472.0 H855 V471.3 H856 V466.6 H857 V468.4 H858 V467.0 H859 V470.2 H860 V469.9 H861 V471.4 H862 V470.5 H863 V465.3 H864 V468.3 H865 V469.3 H866 V462.3 H867 V472.2 H868 V471.0 H869 V471.1 H870 V473.4 H871 V471.6 H872 V473.3 H873 V473.0 H874 V471.7 H875 V473.1 H876 V473.6 H877 V473.6 H878 V471.6 H879 V473.6 H880 V473.1 H881 V475.3 H882 V472.8 H883 V469.8 H884 V471.6 H885 V472.2 H886 V472.4 H887 V475.2 H888 V470.3 H889 V473.3 H890 V472.1 H891 V474.7 H892 V469.2 H893 V470.9 H894 V471.3 H895 V469.9 H896 V473.9 H897 V473.1 H898 V469.5 H899 V473.3 H900 V469.0 H901 V472.0 H902 V467.2 H903 V471.4 H904 V464.7 H905 V465.7 H906 V470.0 H907 V465.5 H908 V467.2 H909 V468.5 H910 V464.8 H911 V472.1 H912 V468.2 H913 V471.2 H914 V471.5 H915 V469.3 H916 V470.6 H917 V468.7 H918 V471.1 H919 V471.7 H920 V466.1 H921 V471.4 H922 V470.2 H923 V473.2 H924 V469.8 H925 V470.5 H926 V471.2 H927 V475.4 H928 V475.1 H929 V471.7 H930 V473.5 H931 V473.5 H932 V472.3 H933 V474.5 H934 V469.7 H935 V474.2 H936 V474.9 H937 V474.6 H938 V469.9 H939 V474.8 H940 V475.2 H941 V474.6 H942 V470.3 H943 V472.5 H944 V474.7 H945 V472.7 H946 V473.8 H947 V464.8 H948 V474.7 H949 V475.3 H950 V473.5 H951 V473.9 H952 V471.7 H953 V472.6 H954 V467.6 H955 V475.7 H956 V470.8 H957 V474.6 H958 V474.4 H959 V474.1 H960 V472.0 H961 V472.5 H962 V471.8 H963 V471.4 H964 V466.6 H965 V467.6 H966 V472.1 H967 V472.7 H968 V471.8 H969 V470.6 H970 V470.4 H971 V471.5 H972 V473.5 H973 V472.9 H974 V473.7 H975 V474.8 H976 V475.1 H977 V472.0 H978 V472.8 H979 V472.9 H980 V470.5 H981 V469.9 H982 V473.6 H983 V469.8 H984 V469.4 H985 V469.7 H986 V471.2 H987 V473.5 H988 V468.8 H989 V469.7 H990 V468.6 H991 V469.4 H992 V473.0 H993 V473.8 H994 V467.7 H995 V471.7 H996 V472.0 H997 V468.1 H998 V474.0 H999 V470.5 H1000 V495.3 H999 V494.0 H998 V499.9 H997 V495.4 H996 V498.5 H995 V498.5 H994 V494.4 H993 V497.1 H992 V501.7 H991 V497.9 H990 V499.7 H989 V495.7 H988 V497.0 H987 V499.3 H986 V497.2 H985 V494.6 H984 V496.9 H983 V494.0 H982 V499.7 H981 V495.5 H980 V494.5 H979 V496.9 H978 V493.2 H977 V494.0 H976 V495.0 H975 V496.3 H974 V498.0 H973 V494.7 H972 V499.9 H971 V500.2 H970 V500.0 H969 V498.0 H968 V501.8 H967 V497.1 H966 V500.7 H965 V495.4 H964 V499.0 H963 V497.3 H962 V494.3 H961 V494.0 H960 V496.1 H959 V493.6 H958 V493.1 H957 V492.6 H956 V492.3 H955 V492.3 H954 V492.3 H953 V494.8 H952 V496.4 H951 V492.9 H950 V494.2 H949 V492.6 H948 V492.4 H947 V492.4 H946 V495.0 H945 V496.6 H944 V492.6 H943 V493.2 H942 V495.9 H941 V495.0 H940 V495.6 H939 V493.9 H938 V493.0 H937 V493.0 H936 V497.2 H935 V495.4 H934 V493.1 H933 V492.9 H932 V495.0 H931 V497.5 H930 V495.2 H929 V494.9 H928 V492.9 H927 V503.5 H926 V494.6 H925 V499.8 H924 V494.5 H923 V496.7 H922 V494.6 H921 V501.8 H920 V496.7 H919 V496.3 H918 V498.2 H917 V497.7 H916 V496.5 H915 V499.5 H914 V498.7 H913 V500.0 H912 V500.2 H911 V500.3 H910 V499.4 H909 V503.8 H908 V497.1 H907 V500.9 H906 V503.2 H905 V497.6 H904 V496.6 H903 V498.7 H902 V497.5 H901 V499.0 H900 V499.6 H899 V495.2 H898 V501.7 H897 V494.8 H896 V495.8 H895 V497.8 H894 V493.4 H893 V495.6 H892 V495.7 H891 V493.8 H890 V493.2 H889 V493.5 H888 V496.2 H887 V494.7 H886 V495.7 H885 V493.7 H884 V497.1 H883 V493.1 H882 V494.1 H881 V498.1 H880 V495.8 H879 V498.1 H878 V496.1 H877 V497.9 H876 V495.1 H875 V495.0 H874 V495.4 H873 V498.3 H872 V495.8 H871 V495.5 H870 V497.6 H869 V495.1 H868 V497.3 H867 V498.7 H866 V500.2 H865 V497.6 H864 V501.4 H863 V497.4 H862 V500.0 H861 V496.2 H860 V497.1 H859 V495.9 H858 V497.8 H857 V495.2 H856 V496.6 H855 V497.1 H854 V495.6 H853 V498.1 H852 V495.9 H851 V497.6 H850 V494.2 H849 V498.2 H848 V493.6 H847 V496.2 H846 V492.6 H845 V494.2 H844 V496.9 H843 V496.1 H842 V496.5 H841 V497.6 H840 V493.3 H839 V496.1 H838 V498.7 H837 V494.1 H836 V498.1 H835 V498.6 H834 V495.6 H833 V496.8 H832 V496.8 H831 V500.1 H830 V495.6 H829 V499.4 H828 V504.2 H827 V498.0 H826 V499.8 H825 V509.5 H824 V500.7 H823 V498.5 H822 V502.1 H821 V497.5 H820 V500.8 H819 V497.0 H818 V495.7 H817 V497.8 H816 V494.7 H815 V494.4 H814 V507.4 H813 V497.9 H812 V496.0 H811 V497.6 H810 V496.1 H809 V500.4 H808 V496.1 H807 V499.3 H806 V496.5 H805 V500.4 H804 V496.1 H803 V501.5 H802 V500.5 H801 V494.7 H800 V500.8 H799 V495.3 H798 V497.7 H797 V498.2 H796 V494.4 H795 V495.0 H794 V493.7 H793 V497.0 H792 V495.3 H791 V494.2 H790 V496.6 H789 V493.2 H788 V495.5 H787 V493.3 H786 V491.9 H785 V494.3 H784 V497.8 H783 V496.2 H782 V496.4 H781 V493.9 H780 V500.3 H779 V496.0 H778 V501.7 H777 V501.8 H776 V497.5 H775 V498.7 H774 V503.3 H773 V496.4 H772 V496.4 H771 V496.3 H770 V503.3 H769 V499.0 H768 V498.6 H767 V503.3 H766 V503.2 H765 V499.2 H764 V496.3 H763 V496.7 H762 V496.2 H761 V495.1 H760 V500.2 H759 V496.0 H758 V497.1 H757 V496.4 H756 V498.1 H755 V495.1 H754 V494.2 H753 V498.6 H752 V500.3 H751 V496.7 H750 V495.9 H749 V496.0 H748 V497.8 H747 V498.8 H746 V497.4 H745 V498.9 H744 V500.4 H743 V501.5 H742 V497.3 H741 V497.5 H740 V497.4 H739 V494.7 H738 V494.5 H737 V494.3 H736 V497.8 H735 V507.1 H734 V494.1 H733 V497.6 H732 V498.8 H731 V499.6 H730 V501.4 H729 V496.7 H728 V496.1 H727 V498.8 H726 V498.9 H725 V496.7 H724 V502.0 H723 V495.3 H722 V494.9 H721 V498.6 H720 V494.8 H719 V494.0 H718 V497.7 H717 V497.0 H716 V496.8 H715 V498.8 H714 V492.6 H713 V495.8 H712 V492.7 H711 V495.4 H710 V493.2 H709 V494.7 H708 V494.6 H707 V495.3 H706 V493.5 H705 V493.5 H704 V493.2 H703 V493.2 H702 V496.7 H701 V495.9 H700 V496.0 H699 V498.7 H698 V494.8 H697 V496.0 H696 V498.4 H695 V494.0 H694 V495.9 H693 V494.3 H692 V494.4 H691 V503.9 H690 V494.8 H689 V494.8 H688 V494.2 H687 V494.9 H686 V497.2 H685 V496.9 H684 V494.7 H683 V495.2 H682 V495.8 H681 V494.7 H680 V498.6 H679 V496.1 H678 V495.2 H677 V495.6 H676 V498.7 H675 V502.2 H674 V498.9 H673 V507.8 H672 V495.8 H671 V495.8 H670 V501.9 H669 V500.9 H668 V498.8 H667 V496.4 H666 V501.2 H665 V503.3 H664 V502.8 H663 V498.7 H662 V498.1 H661 V501.1 H660 V503.2 H659 V500.2 H658 V500.1 H657 V500.8 H656 V496.9 H655 V502.8 H654 V500.6 H653 V504.3 H652 V503.8 H651 V501.3 H650 V498.8 H649 V498.0 H648 V499.7 H647 V496.6 H646 V496.9 H645 V501.2 H644 V496.1 H643 V497.1 H642 V499.0 H641 V497.9 H640 V498.5 H639 V500.5 H638 V495.5 H637 V495.8 H636 V493.2 H635 V494.6 H634 V493.8 H633 V499.3 H632 V496.5 H631 V503.0 H630 V494.3 H629 V493.9 H628 V494.7 H627 V494.9 H626 V495.2 H625 V499.9 H624 V498.8 H623 V500.6 H622 V495.4 H621 V496.0 H620 V499.8 H619 V494.8 H618 V507.4 H617 V498.8 H616 V498.1 H615 V498.7 H614 V500.0 H613 V497.7 H612 V496.0 H611 V498.7 H610 V495.4 H609 V494.9 H608 V494.7 H607 V494.6 H606 V495.1 H605 V495.3 H604 V497.6 H603 V498.2 H602 V500.0 H601 V499.6 H600 V498.1 H599 V497.4 H598 V495.5 H597 V496.3 H596 V495.0 H595 V500.0 H594 V498.1 H593 V497.7 H592 V496.8 H591 V497.5 H590 V498.9 H589 V496.2 H588 V498.3 H587 V494.8 H586 V500.9 H585 V494.9 H584 V496.2 H583 V495.0 H582 V501.3 H581 V501.2 H580 V500.4 H579 V496.1 H578 V501.4 H577 V496.8 H576 V500.4 H575 V498.6 H574 V498.7 H573 V497.9 H572 V495.3 H571 V502.0 H570 V495.1 H569 V500.4 H568 V494.4 H567 V495.7 H566 V500.2 H565 V494.6 H564 V494.5 H563 V495.5 H562 V499.3 H561 V495.3 H560 V494.1 H559 V495.4 H558 V496.6 H557 V498.3 H556 V495.4 H555 V494.6 H554 V494.0 H553 V499.1 H552 V497.3 H551 V493.8 H550 V501.0 H549 V492.7 H548 V496.2 H547 V495.9 H546 V493.8 H545 V496.3 H544 V494.1 H543 V493.0 H542 V494.0 H541 V496.2 H540 V495.7 H539 V496.5 H538 V495.1 H537 V494.3 H536 V502.0 H535 V493.7 H534 V496.3 H533 V500.5 H532 V502.6 H531 V493.5 H530 V494.2 H529 V493.3 H528 V493.4 H527 V496.0 H526 V497.5 H525 V492.8 H524 V493.2 H523 V494.4 H522 V497.1 H521 V494.2 H520 V493.3 H519 V493.8 H518 V493.3 H517 V496.5 H516 V501.5 H515 V493.9 H514 V497.3 H513 V493.8 H512 V493.1 H511 V493.6 H510 V497.4 H509 V497.5 H508 V495.7 H507 V496.9 H506 V499.4 H505 V498.3 H504 V495.9 H503 V497.0 H502 V496.0 H501 V495.7 H500 V493.4 H499 V494.0 H498 V495.3 H497 V492.3 H496 V494.2 H495 V495.8 H494 V497.1 H493 V494.3 H492 V497.2 H491 V497.0 H490 V493.0 H489 V497.3 H488 V494.5 H487 V494.5 H486 V496.3 H485 V496.8 H484 V496.1 H483 V499.4 H482 V495.0 H481 V495.2 H480 V496.2 H479 V502.7 H478 V501.4 H477 V498.3 H476 V497.4 H475 V496.1 H474 V498.5 H473 V497.5 H472 V495.5 H471 V506.7 H470 V494.9 H469 V497.1 H468 V496.4 H467 V495.1 H466 V495.4 H465 V500.3 H464 V500.2 H463 V502.1 H462 V500.9 H461 V501.2 H460 V498.7 H459 V498.8 H458 V496.6 H457 V501.8 H456 V504.8 H455 V499.4 H454 V496.5 H453 V499.6 H452 V497.5 H451 V497.8 H450 V497.1 H449 V497.4 H448 V503.3 H447 V506.0 H446 V504.0 H445 V496.6 H444 V496.0 H443 V499.4 H442 V500.4 H441 V497.8 H440 V497.6 H439 V496.7 H438 V496.8 H437 V493.2 H436 V494.7 H435 V492.5 H434 V492.8 H433 V495.4 H432 V502.8 H431 V498.2 H430 V494.5 H429 V495.7 H428 V500.5 H427 V499.7 H426 V501.3 H425 V496.8 H424 V496.3 H423 V495.5 H422 V498.5 H421 V495.6 H420 V505.4 H419 V496.9 H418 V500.9 H417 V500.6 H416 V495.9 H415 V496.1 H414 V497.9 H413 V495.7 H412 V494.5 H411 V500.1 H410 V496.7 H409 V494.2 H408 V497.8 H407 V497.7 H406 V493.8 H405 V495.3 H404 V493.0 H403 V495.2 H402 V496.1 H401 V498.1 H400 V493.1 H399 V506.7 H398 V493.8 H397 V494.1 H396 V494.6 H395 V498.6 H394 V493.5 H393 V493.1 H392 V501.2 H391 V494.9 H390 V492.9 H389 V495.1 H388 V501.7 H387 V493.7 H386 V493.4 H385 V495.4 H384 V497.3 H383 V497.3 H382 V498.8 H381 V498.0 H380 V500.6 H379 V498.0 H378 V500.8 H377 V495.9 H376 V496.2 H375 V503.9 H374 V500.3 H373 V501.8 H372 V495.9 H371 V498.1 H370 V500.1 H369 V495.4 H368 V495.6 H367 V495.3 H366 V495.8 H365 V500.5 H364 V495.9 H363 V499.0 H362 V499.9 H361 V495.2 H360 V496.1 H359 V495.3 H358 V494.6 H357 V498.1 H356 V496.4 H355 V495.3 H354 V495.8 H353 V499.3 H352 V497.2 H351 V495.1 H350 V504.2 H349 V495.4 H348 V497.9 H347 V495.3 H346 V496.2 H345 V498.2 H344 V497.6 H343 V493.7 H342 V497.8 H341 V505.1 H340 V502.8 H339 V496.6 H338 V494.9 H337 V498.5 H336 V500.8 H335 V496.2 H334 V494.9 H333 V507.6 H332 V497.0 H331 V495.0 H330 V500.8 H329 V499.1 H328 V497.6 H327 V499.2 H326 V494.3 H325 V498.1 H324 V496.2 H323 V496.5 H322 V495.1 H321 V500.1 H320 V496.4 H319 V495.7 H318 V495.9 H317 V499.4 H316 V494.5 H315 V494.3 H314 V496.8 H313 V497.9 H312 V503.7 H311 V499.5 H310 V498.8 H309 V498.7 H308 V501.8 H307 V502.6 H306 V502.8 H305 V502.3 H304 V502.9 H303 V496.1 H302 V502.6 H301 V498.5 H300 V497.8 H299 V496.1 H298 V495.6 H297 V495.8 H296 V498.4 H295 V503.9 H294 V493.9 H293 V493.5 H292 V492.7 H291 V496.2 H290 V491.7 H289 V491.9 H288 V493.8 H287 V490.4 H286 V491.3 H285Z" fill="#2020d8"/></svg><div class="ab" style="left:1px;top:1px;width:35px;height:13px;background:#46467a;border-radius:3px;color:#fff;font-weight:bold;font-size:10px;line-height:13px;padding-left:2px;white-space:nowrap;overflow:hidden">region</div></div>
<div class="ab" style="left:203px;top:532px;width:796px;height:1px;background:#9a9a9a"></div><div class="ab" style="left:204px;top:532px;width:13px;height:1px;background:#454545"></div><div class="ab" style="left:218px;top:531px;width:781px;height:1px;background:#d2d2d2"></div>
<div class="ab" style="left:203px;top:533px;width:15px;height:96px;background:linear-gradient(90deg,#fafafa 0,#fafafa 1px,#e2e2e2 1px,#d6d6d6 40%,#c4c6c8 70%,#cdd0d2 90%,#5a5a5a 93%,#5a5a5a)"></div><svg class="ab" style="left:203px;top:533px" width="15" height="96"><rect x="6" y="8" width="8" height="1" fill="#505050"/><rect x="11" y="18" width="3" height="1" fill="#505050"/><rect x="9" y="28" width="5" height="1" fill="#505050"/><rect x="11" y="38" width="3" height="1" fill="#505050"/><rect x="6" y="48" width="8" height="1" fill="#505050"/><rect x="11" y="58" width="3" height="1" fill="#505050"/><rect x="9" y="68" width="5" height="1" fill="#505050"/><rect x="11" y="78" width="3" height="1" fill="#505050"/><rect x="6" y="88" width="8" height="1" fill="#505050"/></svg>
<div class="ab" style="left:233px;top:533px;width:1px;height:96px;background:#c4c4c4"></div>
<div class="ab" style="left:255px;top:533px;width:1px;height:96px;background:#c4c4c4"></div>
<div class="ab" style="left:276px;top:533px;width:1px;height:96px;background:#c4c4c4"></div>
<div class="ab" style="left:298px;top:533px;width:1px;height:96px;background:#c4c4c4"></div>
<div class="ab" style="left:319px;top:533px;width:1px;height:96px;background:#c4c4c4"></div>
<div class="ab" style="left:341px;top:533px;width:1px;height:96px;background:#c4c4c4"></div>
<div class="ab" style="left:362px;top:533px;width:1px;height:96px;background:#c4c4c4"></div>
<div class="ab" style="left:384px;top:533px;width:1px;height:96px;background:#c4c4c4"></div>
<div class="ab" style="left:405px;top:533px;width:1px;height:96px;background:#c4c4c4"></div>
<div class="ab" style="left:427px;top:533px;width:1px;height:96px;background:#c4c4c4"></div>
<div class="ab" style="left:448px;top:533px;width:1px;height:96px;background:#c4c4c4"></div>
<div class="ab" style="left:470px;top:533px;width:1px;height:96px;background:#c4c4c4"></div>
<div class="ab" style="left:491px;top:533px;width:1px;height:96px;background:#c4c4c4"></div>
<div class="ab" style="left:513px;top:533px;width:1px;height:96px;background:#c4c4c4"></div>
<div class="ab" style="left:535px;top:533px;width:1px;height:96px;background:#c4c4c4"></div>
<div class="ab" style="left:556px;top:533px;width:1px;height:96px;background:#c4c4c4"></div>
<div class="ab" style="left:578px;top:533px;width:1px;height:96px;background:#c4c4c4"></div>
<div class="ab" style="left:599px;top:533px;width:1px;height:96px;background:#c4c4c4"></div>
<div class="ab" style="left:621px;top:533px;width:1px;height:96px;background:#c4c4c4"></div>
<div class="ab" style="left:642px;top:533px;width:1px;height:96px;background:#c4c4c4"></div>
<div class="ab" style="left:664px;top:533px;width:1px;height:96px;background:#c4c4c4"></div>
<div class="ab" style="left:685px;top:533px;width:1px;height:96px;background:#c4c4c4"></div>
<div class="ab" style="left:707px;top:533px;width:1px;height:96px;background:#c4c4c4"></div>
<div class="ab" style="left:728px;top:533px;width:1px;height:96px;background:#c4c4c4"></div>
<div class="ab" style="left:750px;top:533px;width:1px;height:96px;background:#c4c4c4"></div>
<div class="ab" style="left:771px;top:533px;width:1px;height:96px;background:#c4c4c4"></div>
<div class="ab" style="left:793px;top:533px;width:1px;height:96px;background:#c4c4c4"></div>
<div class="ab" style="left:815px;top:533px;width:1px;height:96px;background:#c4c4c4"></div>
<div class="ab" style="left:836px;top:533px;width:1px;height:96px;background:#c4c4c4"></div>
<div class="ab" style="left:858px;top:533px;width:1px;height:96px;background:#c4c4c4"></div>
<div class="ab" style="left:879px;top:533px;width:1px;height:96px;background:#c4c4c4"></div>
<div class="ab" style="left:901px;top:533px;width:1px;height:96px;background:#c4c4c4"></div>
<div class="ab" style="left:922px;top:533px;width:1px;height:96px;background:#c4c4c4"></div>
<div class="ab" style="left:944px;top:533px;width:1px;height:96px;background:#c4c4c4"></div>
<div class="ab" style="left:965px;top:533px;width:1px;height:96px;background:#c4c4c4"></div>
<div class="ab" style="left:987px;top:533px;width:1px;height:96px;background:#c4c4c4"></div>
<div class="ab" style="left:217px;top:534px;width:750px;height:94px;background:#c8fcb8;border:1px solid #111;overflow:hidden"><div class="ab" style="left:-1px;top:-1px;width:750px;height:94px"><div class="ab" style="left:16px;top:0;width:1px;height:94px;background:#a8f0a0"></div><div class="ab" style="left:38px;top:0;width:1px;height:94px;background:#a8f0a0"></div><div class="ab" style="left:59px;top:0;width:1px;height:94px;background:#a8f0a0"></div><div class="ab" style="left:81px;top:0;width:1px;height:94px;background:#a8f0a0"></div><div class="ab" style="left:102px;top:0;width:1px;height:94px;background:#a8f0a0"></div><div class="ab" style="left:124px;top:0;width:1px;height:94px;background:#a8f0a0"></div><div class="ab" style="left:145px;top:0;width:1px;height:94px;background:#a8f0a0"></div><div class="ab" style="left:167px;top:0;width:1px;height:94px;background:#a8f0a0"></div><div class="ab" style="left:188px;top:0;width:1px;height:94px;background:#a8f0a0"></div><div class="ab" style="left:210px;top:0;width:1px;height:94px;background:#a8f0a0"></div><div class="ab" style="left:231px;top:0;width:1px;height:94px;background:#a8f0a0"></div><div class="ab" style="left:253px;top:0;width:1px;height:94px;background:#a8f0a0"></div><div class="ab" style="left:274px;top:0;width:1px;height:94px;background:#a8f0a0"></div><div class="ab" style="left:296px;top:0;width:1px;height:94px;background:#a8f0a0"></div><div class="ab" style="left:318px;top:0;width:1px;height:94px;background:#a8f0a0"></div><div class="ab" style="left:339px;top:0;width:1px;height:94px;background:#a8f0a0"></div><div class="ab" style="left:361px;top:0;width:1px;height:94px;background:#a8f0a0"></div><div class="ab" style="left:382px;top:0;width:1px;height:94px;background:#a8f0a0"></div><div class="ab" style="left:404px;top:0;width:1px;height:94px;background:#a8f0a0"></div><div class="ab" style="left:425px;top:0;width:1px;height:94px;background:#a8f0a0"></div><div class="ab" style="left:447px;top:0;width:1px;height:94px;background:#a8f0a0"></div><div class="ab" style="left:468px;top:0;width:1px;height:94px;background:#a8f0a0"></div><div class="ab" style="left:490px;top:0;width:1px;height:94px;background:#a8f0a0"></div><div class="ab" style="left:511px;top:0;width:1px;height:94px;background:#a8f0a0"></div><div class="ab" style="left:533px;top:0;width:1px;height:94px;background:#a8f0a0"></div><div class="ab" style="left:554px;top:0;width:1px;height:94px;background:#a8f0a0"></div><div class="ab" style="left:576px;top:0;width:1px;height:94px;background:#a8f0a0"></div><div class="ab" style="left:598px;top:0;width:1px;height:94px;background:#a8f0a0"></div><div class="ab" style="left:619px;top:0;width:1px;height:94px;background:#a8f0a0"></div><div class="ab" style="left:641px;top:0;width:1px;height:94px;background:#a8f0a0"></div><div class="ab" style="left:662px;top:0;width:1px;height:94px;background:#a8f0a0"></div><div class="ab" style="left:684px;top:0;width:1px;height:94px;background:#a8f0a0"></div><div class="ab" style="left:705px;top:0;width:1px;height:94px;background:#a8f0a0"></div><div class="ab" style="left:727px;top:0;width:1px;height:94px;background:#a8f0a0"></div><div class="ab" style="left:748px;top:0;width:1px;height:94px;background:#a8f0a0"></div></div><svg class="ab" style="left:0;top:0" width="749" height="94" viewBox="218 535 749 94"><path d="M218 566.6 V566.6 H219 V568.7 H220 V573.7 H221 V574.9 H222 V574.6 H223 V575.2 H224 V576.8 H225 V577.6 H226 V579.0 H227 V578.0 H228 V563.2 H229 V566.6 H230 V570.0 H231 V573.0 H232 V572.9 H233 V577.2 H234 V575.3 H235 V577.7 H236 V577.5 H237 V578.2 H238 V578.9 H239 V572.8 H240 V575.1 H241 V576.4 H242 V576.9 H243 V578.0 H244 V579.4 H245 V578.5 H246 V579.4 H247 V578.7 H248 V578.7 H249 V578.8 H250 V566.2 H251 V570.5 H252 V574.0 H253 V574.6 H254 V576.5 H255 V575.6 H256 V577.2 H257 V577.1 H258 V577.3 H259 V578.3 H260 V578.6 H261 V579.3 H262 V579.5 H263 V557.3 H264 V567.3 H265 V569.6 H266 V576.2 H267 V576.1 H268 V577.6 H269 V559.0 H270 V568.7 H271 V571.6 H272 V571.6 H273 V570.7 H274 V573.7 H275 V574.1 H276 V577.2 H277 V577.0 H278 V577.4 H279 V561.0 H280 V565.6 H281 V570.1 H282 V572.1 H283 V572.4 H284 V556.1 H285 V561.7 H286 V568.9 H287 V570.8 H288 V574.0 H289 V550.8 H290 V560.9 H291 V569.0 H292 V574.6 H293 V573.2 H294 V575.3 H295 V553.2 H296 V559.1 H297 V568.6 H298 V562.2 H299 V566.8 H300 V572.0 H301 V574.7 H302 V550.3 H303 V565.5 H304 V565.5 H305 V567.4 H306 V571.8 H307 V570.2 H308 V575.9 H309 V576.8 H310 V577.5 H311 V561.5 H312 V565.9 H313 V571.1 H314 V571.6 H315 V575.1 H316 V573.0 H317 V573.0 H318 V575.9 H319 V576.4 H320 V553.8 H321 V557.6 H322 V566.8 H323 V570.0 H324 V566.0 H325 V569.0 H326 V574.7 H327 V564.0 H328 V568.3 H329 V574.7 H330 V576.0 H331 V576.9 H332 V576.8 H333 V566.9 H334 V574.9 H335 V573.8 H336 V575.0 H337 V578.3 H338 V577.4 H339 V578.2 H340 V579.1 H341 V578.7 H342 V570.6 H343 V572.8 H344 V576.6 H345 V577.5 H346 V577.5 H347 V578.2 H348 V577.5 H349 V562.3 H350 V567.3 H351 V568.6 H352 V574.0 H353 V574.9 H354 V575.2 H355 V576.1 H356 V578.0 H357 V563.2 H358 V566.8 H359 V574.3 H360 V574.2 H361 V575.5 H362 V575.8 H363 V576.9 H364 V578.4 H365 V578.1 H366 V568.7 H367 V569.4 H368 V571.7 H369 V574.7 H370 V577.0 H371 V559.5 H372 V564.5 H373 V570.1 H374 V567.1 H375 V570.8 H376 V559.4 H377 V567.3 H378 V571.4 H379 V574.7 H380 V576.4 H381 V575.4 H382 V577.3 H383 V577.4 H384 V578.5 H385 V570.0 H386 V576.2 H387 V575.4 H388 V578.4 H389 V578.6 H390 V578.7 H391 V557.7 H392 V569.2 H393 V571.3 H394 V572.8 H395 V576.1 H396 V576.2 H397 V578.8 H398 V578.9 H399 V579.2 H400 V579.2 H401 V557.5 H402 V566.3 H403 V569.4 H404 V567.0 H405 V572.1 H406 V570.0 H407 V573.1 H408 V562.9 H409 V572.4 H410 V570.7 H411 V573.7 H412 V574.7 H413 V576.0 H414 V577.5 H415 V578.2 H416 V578.4 H417 V578.8 H418 V566.7 H419 V569.6 H420 V575.6 H421 V576.5 H422 V573.6 H423 V576.5 H424 V577.8 H425 V577.7 H426 V579.1 H427 V579.1 H428 V559.6 H429 V572.1 H430 V570.3 H431 V576.3 H432 V577.9 H433 V577.3 H434 V578.9 H435 V579.5 H436 V578.6 H437 V579.6 H438 V579.0 H439 V567.7 H440 V573.1 H441 V572.5 H442 V576.3 H443 V576.5 H444 V577.6 H445 V578.9 H446 V579.3 H447 V578.5 H448 V558.4 H449 V568.4 H450 V566.1 H451 V574.7 H452 V572.7 H453 V574.9 H454 V576.9 H455 V578.2 H456 V579.2 H457 V578.8 H458 V579.0 H459 V560.4 H460 V569.2 H461 V572.3 H462 V574.3 H463 V575.2 H464 V575.4 H465 V577.9 H466 V565.3 H467 V569.8 H468 V575.9 H469 V576.2 H470 V578.8 H471 V578.4 H472 V561.7 H473 V566.1 H474 V566.6 H475 V573.1 H476 V570.8 H477 V572.0 H478 V570.5 H479 V572.1 H480 V572.9 H481 V575.7 H482 V575.0 H483 V577.0 H484 V576.4 H485 V578.5 H486 V564.8 H487 V571.8 H488 V575.2 H489 V574.1 H490 V576.5 H491 V577.9 H492 V579.0 H493 V578.7 H494 V579.4 H495 V561.9 H496 V571.1 H497 V568.6 H498 V575.3 H499 V572.8 H500 V576.1 H501 V578.0 H502 V569.6 H503 V571.9 H504 V574.0 H505 V574.4 H506 V575.1 H507 V564.2 H508 V570.5 H509 V569.0 H510 V572.9 H511 V572.3 H512 V561.8 H513 V565.0 H514 V570.7 H515 V570.1 H516 V574.1 H517 V572.4 H518 V573.9 H519 V575.1 H520 V575.6 H521 V562.1 H522 V571.8 H523 V574.9 H524 V574.4 H525 V575.9 H526 V577.3 H527 V578.8 H528 V578.8 H529 V568.2 H530 V575.0 H531 V575.8 H532 V576.1 H533 V574.4 H534 V576.6 H535 V577.2 H536 V564.7 H537 V569.6 H538 V570.4 H539 V570.9 H540 V575.3 H541 V574.5 H542 V575.7 H543 V576.6 H544 V576.5 H545 V576.9 H546 V560.7 H547 V568.3 H548 V572.8 H549 V573.5 H550 V574.8 H551 V575.1 H552 V575.7 H553 V576.7 H554 V561.4 H555 V569.4 H556 V572.8 H557 V575.4 H558 V576.7 H559 V575.5 H560 V577.7 H561 V578.8 H562 V578.7 H563 V578.5 H564 V579.9 H565 V580.1 H566 V579.7 H567 V580.4 H568 V580.5 H569 V580.5 H570 V580.5 H571 V580.5 H572 V580.5 H573 V580.5 H574 V580.5 H575 V580.5 H576 V580.5 H577 V580.5 H578 V580.5 H579 V580.5 H580 V580.5 H581 V580.5 H582 V580.5 H583 V578.7 H584 V579.6 H585 V579.7 H586 V579.4 H587 V579.4 H588 V579.1 H589 V579.1 H590 V579.6 H591 V579.1 H592 V552.5 H593 V565.0 H594 V569.7 H595 V571.3 H596 V571.1 H597 V572.0 H598 V573.0 H599 V574.6 H600 V558.8 H601 V567.3 H602 V573.8 H603 V574.4 H604 V577.1 H605 V578.8 H606 V552.6 H607 V557.4 H608 V566.0 H609 V570.6 H610 V566.1 H611 V570.0 H612 V570.5 H613 V553.7 H614 V564.6 H615 V562.1 H616 V564.3 H617 V567.6 H618 V568.8 H619 V575.2 H620 V572.7 H621 V573.9 H622 V556.3 H623 V560.1 H624 V561.8 H625 V568.3 H626 V573.8 H627 V571.7 H628 V575.2 H629 V555.5 H630 V563.1 H631 V567.9 H632 V573.4 H633 V571.8 H634 V573.8 H635 V575.7 H636 V577.7 H637 V552.6 H638 V567.0 H639 V561.8 H640 V567.0 H641 V570.6 H642 V571.8 H643 V575.5 H644 V550.8 H645 V562.2 H646 V565.4 H647 V567.0 H648 V573.0 H649 V569.8 H650 V573.7 H651 V574.7 H652 V575.1 H653 V574.8 H654 V577.7 H655 V577.6 H656 V577.3 H657 V578.1 H658 V578.7 H659 V568.0 H660 V574.6 H661 V574.5 H662 V575.6 H663 V576.8 H664 V577.1 H665 V578.2 H666 V578.6 H667 V578.7 H668 V579.7 H669 V568.3 H670 V574.6 H671 V572.2 H672 V575.9 H673 V575.6 H674 V577.1 H675 V577.8 H676 V567.9 H677 V575.4 H678 V575.1 H679 V574.5 H680 V575.9 H681 V576.0 H682 V577.6 H683 V577.7 H684 V579.1 H685 V578.5 H686 V558.9 H687 V569.2 H688 V567.9 H689 V568.4 H690 V573.6 H691 V575.9 H692 V575.5 H693 V574.4 H694 V576.0 H695 V576.4 H696 V577.0 H697 V555.0 H698 V567.5 H699 V569.4 H700 V570.3 H701 V568.2 H702 V572.0 H703 V573.6 H704 V573.0 H705 V576.8 H706 V574.4 H707 V577.5 H708 V559.1 H709 V564.1 H710 V568.7 H711 V568.1 H712 V575.6 H713 V572.8 H714 V555.6 H715 V561.3 H716 V569.5 H717 V565.4 H718 V569.4 H719 V572.6 H720 V574.4 H721 V572.7 H722 V555.1 H723 V564.8 H724 V570.2 H725 V571.4 H726 V568.5 H727 V574.7 H728 V575.2 H729 V575.3 H730 V576.5 H731 V577.3 H732 V564.3 H733 V566.6 H734 V570.0 H735 V574.1 H736 V572.6 H737 V575.2 H738 V574.5 H739 V577.3 H740 V576.5 H741 V557.1 H742 V563.5 H743 V571.3 H744 V571.9 H745 V573.6 H746 V575.1 H747 V576.7 H748 V577.9 H749 V578.6 H750 V554.0 H751 V561.4 H752 V564.9 H753 V568.1 H754 V568.6 H755 V572.4 H756 V574.5 H757 V576.4 H758 V576.7 H759 V576.3 H760 V567.0 H761 V574.4 H762 V575.0 H763 V576.0 H764 V578.4 H765 V578.6 H766 V578.7 H767 V578.7 H768 V558.1 H769 V562.5 H770 V571.0 H771 V572.8 H772 V573.8 H773 V576.1 H774 V577.7 H775 V578.3 H776 V579.5 H777 V579.4 H778 V579.9 H779 V580.5 H780 V580.5 H781 V580.5 H782 V580.5 H783 V580.5 H784 V579.1 H785 V578.7 H786 V568.9 H787 V572.1 H788 V574.3 H789 V574.8 H790 V578.4 H791 V578.2 H792 V568.9 H793 V571.3 H794 V577.5 H795 V577.3 H796 V577.8 H797 V578.6 H798 V578.8 H799 V565.8 H800 V569.0 H801 V572.7 H802 V577.3 H803 V577.7 H804 V560.9 H805 V569.2 H806 V573.1 H807 V571.8 H808 V577.2 H809 V577.2 H810 V577.0 H811 V578.2 H812 V579.1 H813 V560.3 H814 V566.2 H815 V574.4 H816 V572.9 H817 V577.6 H818 V578.0 H819 V577.7 H820 V578.6 H821 V579.1 H822 V579.0 H823 V578.8 H824 V571.0 H825 V575.8 H826 V576.9 H827 V576.8 H828 V577.7 H829 V578.6 H830 V562.2 H831 V571.9 H832 V573.1 H833 V576.2 H834 V577.0 H835 V578.3 H836 V579.4 H837 V579.1 H838 V579.5 H839 V579.0 H840 V564.4 H841 V570.5 H842 V575.8 H843 V577.6 H844 V578.4 H845 V578.7 H846 V579.8 H847 V580.0 H848 V580.4 H849 V580.5 H850 V580.5 H851 V579.5 H852 V578.9 H853 V578.8 H854 V562.3 H855 V567.4 H856 V573.6 H857 V574.9 H858 V575.9 H859 V575.8 H860 V577.9 H861 V578.6 H862 V579.4 H863 V558.5 H864 V566.0 H865 V570.1 H866 V570.8 H867 V570.8 H868 V574.1 H869 V576.9 H870 V560.5 H871 V566.6 H872 V570.8 H873 V569.5 H874 V573.7 H875 V573.1 H876 V576.2 H877 V566.8 H878 V571.3 H879 V571.4 H880 V573.3 H881 V577.0 H882 V576.8 H883 V578.4 H884 V578.6 H885 V561.3 H886 V571.1 H887 V570.7 H888 V567.2 H889 V569.0 H890 V573.6 H891 V576.1 H892 V574.9 H893 V577.6 H894 V564.8 H895 V571.6 H896 V573.4 H897 V573.8 H898 V576.4 H899 V568.4 H900 V570.5 H901 V574.9 H902 V576.9 H903 V575.7 H904 V576.5 H905 V578.9 H906 V578.7 H907 V578.8 H908 V568.6 H909 V574.9 H910 V573.9 H911 V576.1 H912 V574.6 H913 V578.0 H914 V578.1 H915 V578.0 H916 V578.6 H917 V579.2 H918 V579.1 H919 V563.7 H920 V569.9 H921 V571.3 H922 V573.0 H923 V577.2 H924 V576.3 H925 V565.7 H926 V573.5 H927 V572.7 H928 V571.5 H929 V576.0 H930 V574.1 H931 V576.9 H932 V570.9 H933 V571.8 H934 V576.3 H935 V577.5 H936 V576.9 H937 V577.6 H938 V577.0 H939 V578.7 H940 V579.4 H941 V573.7 H942 V575.7 H943 V576.5 H944 V578.0 H945 V577.9 H946 V578.7 H947 V579.1 H948 V578.6 H949 V572.7 H950 V574.6 H951 V576.5 H952 V577.5 H953 V578.5 H954 V578.9 H955 V579.6 H956 V579.3 H957 V579.2 H958 V579.3 H959 V579.5 H960 V577.3 H961 V578.5 H962 V578.7 H963 V578.7 H964 V579.1 H965 V578.8 H966 V580.4 H967 V581.7 H966 V583.1 H965 V583.4 H964 V582.4 H963 V583.0 H962 V584.1 H961 V584.7 H960 V582.6 H959 V582.4 H958 V582.5 H957 V582.3 H956 V582.4 H955 V582.3 H954 V583.0 H953 V583.8 H952 V584.9 H951 V586.0 H950 V588.9 H949 V582.6 H948 V583.0 H947 V584.3 H946 V583.9 H945 V583.6 H944 V585.3 H943 V587.2 H942 V588.4 H941 V583.5 H940 V583.8 H939 V584.8 H938 V585.8 H937 V584.8 H936 V585.0 H935 V586.4 H934 V587.7 H933 V590.9 H932 V586.9 H931 V586.6 H930 V587.8 H929 V585.9 H928 V586.6 H927 V595.0 H926 V597.2 H925 V584.4 H924 V587.1 H923 V586.4 H922 V588.9 H921 V590.2 H920 V595.2 H919 V583.2 H918 V583.1 H917 V583.4 H916 V584.1 H915 V584.6 H914 V584.8 H913 V585.9 H912 V586.5 H911 V587.5 H910 V588.1 H909 V593.2 H908 V583.4 H907 V583.3 H906 V583.7 H905 V585.5 H904 V585.1 H903 V588.3 H902 V586.5 H901 V587.3 H900 V594.4 H899 V587.4 H898 V587.6 H897 V590.8 H896 V593.1 H895 V597.3 H894 V586.1 H893 V586.2 H892 V585.3 H891 V591.0 H890 V592.7 H889 V594.5 H888 V596.4 H887 V594.4 H886 V602.4 H885 V584.0 H884 V583.7 H883 V583.6 H882 V585.2 H881 V585.3 H880 V590.1 H879 V591.4 H878 V594.6 H877 V586.4 H876 V584.8 H875 V587.0 H874 V590.8 H873 V589.9 H872 V591.1 H871 V600.4 H870 V586.1 H869 V589.9 H868 V592.2 H867 V589.3 H866 V591.6 H865 V590.1 H864 V602.0 H863 V582.8 H862 V583.2 H861 V584.6 H860 V584.5 H859 V585.6 H858 V587.9 H857 V586.9 H856 V590.6 H855 V599.3 H854 V582.8 H853 V583.2 H852 V582.9 H851 V581.5 H850 V581.5 H849 V581.9 H848 V581.8 H847 V582.2 H846 V583.5 H845 V584.5 H844 V587.1 H843 V586.5 H842 V588.8 H841 V599.3 H840 V583.4 H839 V582.4 H838 V583.0 H837 V582.6 H836 V584.5 H835 V584.6 H834 V587.5 H833 V590.8 H832 V589.3 H831 V597.6 H830 V583.2 H829 V583.3 H828 V585.7 H827 V585.8 H826 V586.0 H825 V590.9 H824 V582.5 H823 V582.6 H822 V582.8 H821 V583.8 H820 V583.3 H819 V584.5 H818 V587.5 H817 V585.6 H816 V592.0 H815 V595.1 H814 V601.8 H813 V582.4 H812 V583.1 H811 V583.3 H810 V583.7 H809 V588.2 H808 V590.4 H807 V592.1 H806 V592.3 H805 V600.8 H804 V584.0 H803 V584.0 H802 V586.1 H801 V591.3 H800 V595.7 H799 V582.8 H798 V582.9 H797 V583.1 H796 V584.5 H795 V586.0 H794 V589.6 H793 V591.9 H792 V583.8 H791 V585.3 H790 V585.0 H789 V586.5 H788 V586.1 H787 V592.5 H786 V582.3 H785 V583.4 H784 V581.5 H783 V581.5 H782 V581.5 H781 V581.5 H780 V582.0 H779 V582.3 H778 V582.2 H777 V582.5 H776 V583.9 H775 V583.6 H774 V586.4 H773 V584.8 H772 V586.6 H771 V593.0 H770 V596.4 H769 V607.0 H768 V583.5 H767 V583.0 H766 V583.3 H765 V583.2 H764 V585.1 H763 V584.6 H762 V590.2 H761 V595.7 H760 V583.5 H759 V586.0 H758 V585.4 H757 V588.5 H756 V586.2 H755 V592.6 H754 V593.2 H753 V590.9 H752 V592.3 H751 V606.6 H750 V584.5 H749 V586.0 H748 V585.0 H747 V588.5 H746 V587.5 H745 V589.4 H744 V591.4 H743 V591.7 H742 V603.4 H741 V583.4 H740 V584.1 H739 V585.5 H738 V586.7 H737 V586.0 H736 V588.4 H735 V590.9 H734 V594.2 H733 V599.1 H732 V586.0 H731 V585.3 H730 V585.4 H729 V585.8 H728 V586.2 H727 V589.7 H726 V594.5 H725 V590.2 H724 V591.6 H723 V607.9 H722 V590.2 H721 V587.3 H720 V593.6 H719 V595.3 H718 V594.7 H717 V590.6 H716 V596.9 H715 V607.8 H714 V586.8 H713 V589.9 H712 V592.9 H711 V590.7 H710 V591.1 H709 V604.0 H708 V583.9 H707 V586.5 H706 V587.2 H705 V585.4 H704 V588.2 H703 V586.8 H702 V588.6 H701 V594.6 H700 V599.6 H699 V601.8 H698 V604.4 H697 V583.0 H696 V585.2 H695 V585.1 H694 V585.8 H693 V587.8 H692 V588.5 H691 V592.0 H690 V593.1 H689 V594.6 H688 V598.7 H687 V602.3 H686 V582.6 H685 V583.2 H684 V583.0 H683 V583.5 H682 V585.8 H681 V584.6 H680 V585.4 H679 V589.9 H678 V586.0 H677 V593.1 H676 V584.4 H675 V583.8 H674 V585.2 H673 V586.8 H672 V588.6 H671 V592.0 H670 V592.6 H669 V583.4 H668 V583.2 H667 V583.5 H666 V583.2 H665 V584.0 H664 V584.0 H663 V585.2 H662 V589.3 H661 V587.7 H660 V593.3 H659 V583.1 H658 V583.9 H657 V584.0 H656 V583.7 H655 V583.9 H654 V587.4 H653 V584.2 H652 V587.2 H651 V589.6 H650 V587.3 H649 V594.3 H648 V593.1 H647 V597.4 H646 V604.7 H645 V610.1 H644 V589.2 H643 V592.1 H642 V588.8 H641 V597.7 H640 V601.0 H639 V596.5 H638 V608.9 H637 V584.3 H636 V584.9 H635 V586.7 H634 V589.7 H633 V593.1 H632 V591.5 H631 V594.4 H630 V609.2 H629 V585.9 H628 V587.4 H627 V593.9 H626 V590.8 H625 V597.4 H624 V600.1 H623 V608.7 H622 V586.2 H621 V586.3 H620 V587.5 H619 V591.9 H618 V589.1 H617 V591.6 H616 V593.7 H615 V602.3 H614 V607.2 H613 V591.5 H612 V589.2 H611 V591.7 H610 V598.4 H609 V592.3 H608 V595.5 H607 V609.7 H606 V584.2 H605 V584.9 H604 V589.0 H603 V590.9 H602 V594.4 H601 V601.0 H600 V588.0 H599 V589.7 H598 V588.4 H597 V594.0 H596 V597.3 H595 V594.0 H594 V603.8 H593 V610.2 H592 V583.1 H591 V582.9 H590 V582.8 H589 V582.5 H588 V583.2 H587 V583.4 H586 V583.2 H585 V583.1 H584 V582.9 H583 V581.5 H582 V581.5 H581 V581.5 H580 V581.5 H579 V581.5 H578 V581.5 H577 V581.5 H576 V581.5 H575 V581.5 H574 V581.5 H573 V581.5 H572 V581.5 H571 V581.5 H570 V581.5 H569 V581.5 H568 V582.0 H567 V581.7 H566 V582.6 H565 V582.3 H564 V583.1 H563 V582.7 H562 V583.6 H561 V583.5 H560 V585.4 H559 V586.5 H558 V587.7 H557 V590.5 H556 V592.9 H555 V597.2 H554 V583.7 H553 V585.2 H552 V585.2 H551 V587.3 H550 V589.3 H549 V590.1 H548 V589.6 H547 V601.0 H546 V584.1 H545 V585.3 H544 V583.8 H543 V587.2 H542 V587.9 H541 V587.0 H540 V591.2 H539 V588.3 H538 V591.2 H537 V595.3 H536 V585.5 H535 V584.7 H534 V585.5 H533 V586.6 H532 V588.4 H531 V592.6 H530 V592.9 H529 V582.8 H528 V582.9 H527 V584.6 H526 V585.3 H525 V586.6 H524 V589.3 H523 V589.2 H522 V601.1 H521 V585.2 H520 V587.6 H519 V586.6 H518 V590.1 H517 V588.0 H516 V591.8 H515 V587.9 H514 V590.3 H513 V600.1 H512 V589.9 H511 V586.7 H510 V593.8 H509 V594.4 H508 V599.0 H507 V585.5 H506 V585.9 H505 V586.7 H504 V586.3 H503 V591.6 H502 V583.6 H501 V584.2 H500 V588.3 H499 V591.3 H498 V591.7 H497 V595.5 H496 V598.6 H495 V583.4 H494 V582.8 H493 V582.9 H492 V583.9 H491 V586.0 H490 V586.7 H489 V588.4 H488 V589.5 H487 V595.2 H486 V583.0 H485 V585.6 H484 V586.2 H483 V587.1 H482 V585.1 H481 V587.1 H480 V587.0 H479 V591.0 H478 V588.6 H477 V587.3 H476 V590.7 H475 V595.3 H474 V595.2 H473 V596.8 H472 V583.2 H471 V584.1 H470 V583.8 H469 V587.5 H468 V590.8 H467 V597.1 H466 V583.3 H465 V584.6 H464 V588.0 H463 V589.5 H462 V591.6 H461 V591.0 H460 V602.5 H459 V582.6 H458 V583.0 H457 V583.8 H456 V583.2 H455 V585.1 H454 V586.3 H453 V589.9 H452 V586.9 H451 V593.3 H450 V596.5 H449 V605.8 H448 V582.5 H447 V583.0 H446 V582.7 H445 V584.2 H444 V584.8 H443 V585.3 H442 V589.7 H441 V588.9 H440 V593.8 H439 V582.8 H438 V582.5 H437 V583.0 H436 V582.5 H435 V583.4 H434 V583.4 H433 V586.3 H432 V586.6 H431 V590.1 H430 V597.0 H429 V601.3 H428 V582.9 H427 V582.9 H426 V584.6 H425 V584.6 H424 V584.9 H423 V586.7 H422 V586.6 H421 V587.4 H420 V590.7 H419 V593.8 H418 V583.4 H417 V583.2 H416 V584.9 H415 V584.9 H414 V585.8 H413 V587.7 H412 V590.8 H411 V591.6 H410 V594.9 H409 V600.5 H408 V585.7 H407 V590.6 H406 V592.1 H405 V596.4 H404 V594.2 H403 V599.1 H402 V602.9 H401 V583.0 H400 V582.8 H399 V583.3 H398 V583.3 H397 V585.8 H396 V587.5 H395 V586.9 H394 V589.7 H393 V593.3 H392 V604.5 H391 V583.3 H390 V582.6 H389 V583.3 H388 V586.0 H387 V588.9 H386 V591.9 H385 V583.5 H384 V584.5 H383 V585.7 H382 V587.3 H381 V587.2 H380 V590.8 H379 V590.5 H378 V596.3 H377 V601.7 H376 V589.5 H375 V589.8 H374 V592.9 H373 V600.2 H372 V604.2 H371 V586.6 H370 V587.1 H369 V588.2 H368 V587.0 H367 V593.5 H366 V583.0 H365 V583.3 H364 V585.0 H363 V586.4 H362 V584.6 H361 V586.3 H360 V589.0 H359 V593.1 H358 V596.4 H357 V583.6 H356 V586.6 H355 V586.0 H354 V585.3 H353 V591.3 H352 V587.4 H351 V593.6 H350 V598.8 H349 V583.2 H348 V583.7 H347 V585.1 H346 V585.9 H345 V585.2 H344 V588.3 H343 V592.1 H342 V582.9 H341 V583.4 H340 V583.1 H339 V584.6 H338 V584.3 H337 V584.1 H336 V586.0 H335 V589.8 H334 V593.3 H333 V584.3 H332 V585.9 H331 V586.5 H330 V588.0 H329 V591.6 H328 V599.4 H327 V590.7 H326 V591.9 H325 V592.8 H324 V590.3 H323 V594.6 H322 V597.0 H321 V606.9 H320 V586.4 H319 V587.0 H318 V589.2 H317 V590.3 H316 V588.5 H315 V590.7 H314 V592.7 H313 V593.0 H312 V601.5 H311 V586.4 H310 V584.2 H309 V587.1 H308 V587.2 H307 V594.4 H306 V588.8 H305 V590.9 H304 V606.2 H303 V606.3 H302 V588.0 H301 V589.8 H300 V596.6 H299 V590.4 H298 V596.3 H297 V607.4 H296 V610.4 H295 V587.6 H294 V588.9 H293 V587.4 H292 V593.5 H291 V594.1 H290 V606.9 H289 V586.8 H288 V588.7 H287 V594.1 H286 V593.0 H285 V603.7 H284 V589.3 H283 V591.1 H282 V592.1 H281 V591.8 H280 V599.4 H279 V584.1 H278 V584.5 H277 V586.7 H276 V585.4 H275 V588.1 H274 V589.3 H273 V587.4 H272 V591.7 H271 V597.0 H270 V602.6 H269 V583.9 H268 V583.7 H267 V585.2 H266 V588.2 H265 V595.1 H264 V605.8 H263 V582.9 H262 V582.8 H261 V582.6 H260 V582.8 H259 V584.1 H258 V584.2 H257 V583.9 H256 V588.2 H255 V589.4 H254 V587.2 H253 V587.5 H252 V594.4 H251 V594.6 H250 V582.7 H249 V582.9 H248 V583.1 H247 V582.7 H246 V583.1 H245 V583.6 H244 V583.2 H243 V584.9 H242 V584.2 H241 V587.0 H240 V590.0 H239 V582.9 H238 V584.1 H237 V583.0 H236 V585.9 H235 V584.5 H234 V587.3 H233 V585.4 H232 V589.1 H231 V589.9 H230 V589.7 H229 V598.3 H228 V583.4 H227 V583.4 H226 V584.0 H225 V584.5 H224 V584.4 H223 V586.7 H222 V586.1 H221 V592.1 H220 V593.5 H219 V596.3 H218Z" fill="#1a3e1a"/><rect x="218" y="580.5" width="748" height="1" fill="#1a3e1a"/><line x1="927.5" y1="535" x2="927.5" y2="627" stroke="#111" stroke-width="1"/><line x1="927.5" y1="535" x2="966" y2="627" stroke="#111" stroke-width="1.2"/></svg></div>
<div class="ab" style="left:203px;top:629px;width:796px;height:1px;background:#9a9a9a"></div><div class="ab" style="left:204px;top:629px;width:13px;height:1px;background:#454545"></div><div class="ab" style="left:218px;top:628px;width:781px;height:1px;background:#d2d2d2"></div>
<div class="ab" style="left:203px;top:629px;width:15px;height:62px;background:linear-gradient(90deg,#fafafa 0,#fafafa 1px,#e2e2e2 1px,#d6d6d6 40%,#c4c6c8 70%,#cdd0d2 90%,#5a5a5a 93%,#5a5a5a)"></div><svg class="ab" style="left:203px;top:629px" width="15" height="62"><rect x="6" y="16" width="8" height="1" fill="#505050"/><rect x="8" y="24" width="6" height="1" fill="#505050"/><rect x="9" y="32" width="5" height="1" fill="#505050"/><rect x="10" y="40" width="4" height="1" fill="#505050"/><rect x="11" y="46" width="3" height="1" fill="#505050"/><rect x="12" y="49" width="2" height="1" fill="#505050"/></svg>
<div class="ab" style="left:218px;top:647px;width:781px;height:43px;background:#e6e8e0"></div>
<div class="ab" style="left:233px;top:629px;width:1px;height:16px;background:#b8b8b8"></div>
<div class="ab" style="left:255px;top:629px;width:1px;height:16px;background:#b8b8b8"></div>
<div class="ab" style="left:276px;top:629px;width:1px;height:16px;background:#b8b8b8"></div>
<div class="ab" style="left:298px;top:629px;width:1px;height:16px;background:#b8b8b8"></div>
<div class="ab" style="left:319px;top:629px;width:1px;height:16px;background:#b8b8b8"></div>
<div class="ab" style="left:341px;top:629px;width:1px;height:16px;background:#b8b8b8"></div>
<div class="ab" style="left:362px;top:629px;width:1px;height:16px;background:#b8b8b8"></div>
<div class="ab" style="left:384px;top:629px;width:1px;height:16px;background:#b8b8b8"></div>
<div class="ab" style="left:405px;top:629px;width:1px;height:16px;background:#b8b8b8"></div>
<div class="ab" style="left:427px;top:629px;width:1px;height:16px;background:#b8b8b8"></div>
<div class="ab" style="left:448px;top:629px;width:1px;height:16px;background:#b8b8b8"></div>
<div class="ab" style="left:470px;top:629px;width:1px;height:16px;background:#b8b8b8"></div>
<div class="ab" style="left:491px;top:629px;width:1px;height:16px;background:#b8b8b8"></div>
<div class="ab" style="left:513px;top:629px;width:1px;height:16px;background:#b8b8b8"></div>
<div class="ab" style="left:535px;top:629px;width:1px;height:16px;background:#b8b8b8"></div>
<div class="ab" style="left:556px;top:629px;width:1px;height:16px;background:#b8b8b8"></div>
<div class="ab" style="left:578px;top:629px;width:1px;height:16px;background:#b8b8b8"></div>
<div class="ab" style="left:599px;top:629px;width:1px;height:16px;background:#b8b8b8"></div>
<div class="ab" style="left:621px;top:629px;width:1px;height:16px;background:#b8b8b8"></div>
<div class="ab" style="left:642px;top:629px;width:1px;height:16px;background:#b8b8b8"></div>
<div class="ab" style="left:664px;top:629px;width:1px;height:16px;background:#b8b8b8"></div>
<div class="ab" style="left:685px;top:629px;width:1px;height:16px;background:#b8b8b8"></div>
<div class="ab" style="left:707px;top:629px;width:1px;height:16px;background:#b8b8b8"></div>
<div class="ab" style="left:728px;top:629px;width:1px;height:16px;background:#b8b8b8"></div>
<div class="ab" style="left:750px;top:629px;width:1px;height:16px;background:#b8b8b8"></div>
<div class="ab" style="left:771px;top:629px;width:1px;height:16px;background:#b8b8b8"></div>
<div class="ab" style="left:793px;top:629px;width:1px;height:16px;background:#b8b8b8"></div>
<div class="ab" style="left:815px;top:629px;width:1px;height:16px;background:#b8b8b8"></div>
<div class="ab" style="left:836px;top:629px;width:1px;height:16px;background:#b8b8b8"></div>
<div class="ab" style="left:858px;top:629px;width:1px;height:16px;background:#b8b8b8"></div>
<div class="ab" style="left:879px;top:629px;width:1px;height:16px;background:#b8b8b8"></div>
<div class="ab" style="left:901px;top:629px;width:1px;height:16px;background:#b8b8b8"></div>
<div class="ab" style="left:922px;top:629px;width:1px;height:16px;background:#b8b8b8"></div>
<div class="ab" style="left:944px;top:629px;width:1px;height:16px;background:#b8b8b8"></div>
<div class="ab" style="left:965px;top:629px;width:1px;height:16px;background:#b8b8b8"></div>
<div class="ab" style="left:987px;top:629px;width:1px;height:16px;background:#b8b8b8"></div>
<div class="ab" style="left:233px;top:645px;width:1px;height:45px;background:#8a8a82"></div>
<div class="ab" style="left:255px;top:645px;width:1px;height:45px;background:#8a8a82"></div>
<div class="ab" style="left:276px;top:645px;width:1px;height:45px;background:#8a8a82"></div>
<div class="ab" style="left:298px;top:645px;width:1px;height:45px;background:#8a8a82"></div>
<div class="ab" style="left:319px;top:645px;width:1px;height:45px;background:#8a8a82"></div>
<div class="ab" style="left:341px;top:645px;width:1px;height:45px;background:#8a8a82"></div>
<div class="ab" style="left:362px;top:645px;width:1px;height:45px;background:#8a8a82"></div>
<div class="ab" style="left:384px;top:645px;width:1px;height:45px;background:#8a8a82"></div>
<div class="ab" style="left:405px;top:645px;width:1px;height:45px;background:#8a8a82"></div>
<div class="ab" style="left:427px;top:645px;width:1px;height:45px;background:#8a8a82"></div>
<div class="ab" style="left:448px;top:645px;width:1px;height:45px;background:#8a8a82"></div>
<div class="ab" style="left:470px;top:645px;width:1px;height:45px;background:#8a8a82"></div>
<div class="ab" style="left:491px;top:645px;width:1px;height:45px;background:#8a8a82"></div>
<div class="ab" style="left:513px;top:645px;width:1px;height:45px;background:#8a8a82"></div>
<div class="ab" style="left:535px;top:645px;width:1px;height:45px;background:#8a8a82"></div>
<div class="ab" style="left:556px;top:645px;width:1px;height:45px;background:#8a8a82"></div>
<div class="ab" style="left:578px;top:645px;width:1px;height:45px;background:#8a8a82"></div>
<div class="ab" style="left:599px;top:645px;width:1px;height:45px;background:#8a8a82"></div>
<div class="ab" style="left:621px;top:645px;width:1px;height:45px;background:#8a8a82"></div>
<div class="ab" style="left:642px;top:645px;width:1px;height:45px;background:#8a8a82"></div>
<div class="ab" style="left:664px;top:645px;width:1px;height:45px;background:#8a8a82"></div>
<div class="ab" style="left:685px;top:645px;width:1px;height:45px;background:#8a8a82"></div>
<div class="ab" style="left:707px;top:645px;width:1px;height:45px;background:#8a8a82"></div>
<div class="ab" style="left:728px;top:645px;width:1px;height:45px;background:#8a8a82"></div>
<div class="ab" style="left:750px;top:645px;width:1px;height:45px;background:#8a8a82"></div>
<div class="ab" style="left:771px;top:645px;width:1px;height:45px;background:#8a8a82"></div>
<div class="ab" style="left:793px;top:645px;width:1px;height:45px;background:#8a8a82"></div>
<div class="ab" style="left:815px;top:645px;width:1px;height:45px;background:#8a8a82"></div>
<div class="ab" style="left:836px;top:645px;width:1px;height:45px;background:#8a8a82"></div>
<div class="ab" style="left:858px;top:645px;width:1px;height:45px;background:#8a8a82"></div>
<div class="ab" style="left:879px;top:645px;width:1px;height:45px;background:#8a8a82"></div>
<div class="ab" style="left:901px;top:645px;width:1px;height:45px;background:#8a8a82"></div>
<div class="ab" style="left:922px;top:645px;width:1px;height:45px;background:#8a8a82"></div>
<div class="ab" style="left:944px;top:645px;width:1px;height:45px;background:#8a8a82"></div>
<div class="ab" style="left:965px;top:645px;width:1px;height:45px;background:#8a8a82"></div>
<div class="ab" style="left:987px;top:645px;width:1px;height:45px;background:#8a8a82"></div>
<div class="ab" style="left:218px;top:645px;width:781px;height:2px;background:#1e1e1e"></div>
<div class="ab" style="left:203px;top:690px;width:796px;height:1px;background:#9a9a9a"></div><div class="ab" style="left:204px;top:690px;width:13px;height:1px;background:#454545"></div>
<div class="ab" style="left:203px;top:691px;width:15px;height:8px;background:linear-gradient(90deg,#fafafa 0,#fafafa 1px,#e2e2e2 1px,#d6d6d6 40%,#c4c6c8 70%,#cdd0d2 90%,#5a5a5a 93%,#5a5a5a)"></div><svg class="ab" style="left:203px;top:691px" width="15" height="8"><rect x="8" y="6" width="6" height="1" fill="#505050"/></svg>
<div class="ab" style="left:233px;top:691px;width:1px;height:8px;background:#c4c4c4"></div>
<div class="ab" style="left:255px;top:691px;width:1px;height:8px;background:#c4c4c4"></div>
<div class="ab" style="left:276px;top:691px;width:1px;height:8px;background:#c4c4c4"></div>
<div class="ab" style="left:298px;top:691px;width:1px;height:8px;background:#c4c4c4"></div>
<div class="ab" style="left:319px;top:691px;width:1px;height:8px;background:#c4c4c4"></div>
<div class="ab" style="left:341px;top:691px;width:1px;height:8px;background:#c4c4c4"></div>
<div class="ab" style="left:362px;top:691px;width:1px;height:8px;background:#c4c4c4"></div>
<div class="ab" style="left:384px;top:691px;width:1px;height:8px;background:#c4c4c4"></div>
<div class="ab" style="left:405px;top:691px;width:1px;height:8px;background:#c4c4c4"></div>
<div class="ab" style="left:427px;top:691px;width:1px;height:8px;background:#c4c4c4"></div>
<div class="ab" style="left:448px;top:691px;width:1px;height:8px;background:#c4c4c4"></div>
<div class="ab" style="left:470px;top:691px;width:1px;height:8px;background:#c4c4c4"></div>
<div class="ab" style="left:491px;top:691px;width:1px;height:8px;background:#c4c4c4"></div>
<div class="ab" style="left:513px;top:691px;width:1px;height:8px;background:#c4c4c4"></div>
<div class="ab" style="left:535px;top:691px;width:1px;height:8px;background:#c4c4c4"></div>
<div class="ab" style="left:556px;top:691px;width:1px;height:8px;background:#c4c4c4"></div>
<div class="ab" style="left:578px;top:691px;width:1px;height:8px;background:#c4c4c4"></div>
<div class="ab" style="left:599px;top:691px;width:1px;height:8px;background:#c4c4c4"></div>
<div class="ab" style="left:621px;top:691px;width:1px;height:8px;background:#c4c4c4"></div>
<div class="ab" style="left:642px;top:691px;width:1px;height:8px;background:#c4c4c4"></div>
<div class="ab" style="left:664px;top:691px;width:1px;height:8px;background:#c4c4c4"></div>
<div class="ab" style="left:685px;top:691px;width:1px;height:8px;background:#c4c4c4"></div>
<div class="ab" style="left:707px;top:691px;width:1px;height:8px;background:#c4c4c4"></div>
<div class="ab" style="left:728px;top:691px;width:1px;height:8px;background:#c4c4c4"></div>
<div class="ab" style="left:750px;top:691px;width:1px;height:8px;background:#c4c4c4"></div>
<div class="ab" style="left:771px;top:691px;width:1px;height:8px;background:#c4c4c4"></div>
<div class="ab" style="left:793px;top:691px;width:1px;height:8px;background:#c4c4c4"></div>
<div class="ab" style="left:815px;top:691px;width:1px;height:8px;background:#c4c4c4"></div>
<div class="ab" style="left:836px;top:691px;width:1px;height:8px;background:#c4c4c4"></div>
<div class="ab" style="left:858px;top:691px;width:1px;height:8px;background:#c4c4c4"></div>
<div class="ab" style="left:879px;top:691px;width:1px;height:8px;background:#c4c4c4"></div>
<div class="ab" style="left:901px;top:691px;width:1px;height:8px;background:#c4c4c4"></div>
<div class="ab" style="left:922px;top:691px;width:1px;height:8px;background:#c4c4c4"></div>
<div class="ab" style="left:944px;top:691px;width:1px;height:8px;background:#c4c4c4"></div>
<div class="ab" style="left:965px;top:691px;width:1px;height:8px;background:#c4c4c4"></div>
<div class="ab" style="left:987px;top:691px;width:1px;height:8px;background:#c4c4c4"></div>
<div class="ab" style="left:688px;top:682px;width:311px;height:17px;background:#c8fcfc;border:1px solid #111;border-right:none;border-bottom:none"></div>
<div class="ab" style="left:589px;top:43px;width:1px;height:119px;background:#ff4020"></div>
<div class="ab" style="left:504px;top:43px;width:1px;height:50px;background:#fff"></div>
<svg class="ab" style="left:499px;top:60px" width="12" height="16"><path d="M5.5 1 L5.5 6 L10.5 6 L6.5 1.5Z" fill="#40b8f0" stroke="#111" stroke-width="0.8"/><path d="M5.5 15 L5.5 10 L0.5 10 L4.5 14.5Z" fill="#40b8f0" stroke="#111" stroke-width="0.8"/><rect x="5" y="1" width="1" height="14" fill="#111"/></svg>
<div class="ab" style="left:0;top:163px;width:25px;height:94px;background:#7a7a7a;border-radius:0 4px 4px 0"></div>
<div class="ab" style="left:0;top:163px;width:25px;height:16px;background:linear-gradient(90deg,#d0d0d0 0,#d0d0d0 13px,#dadada 13px);border-radius:0 3px 3px 0;overflow:hidden"><div class="ab" style="right:16px;top:-1px;color:#141438;font-weight:bold;font-size:14px;line-height:18px;white-space:nowrap">ck</div></div><div class="ab" style="left:13px;top:163px;width:1px;height:16px;background:#a4a4a4"></div><div class="arr" style="left:15px;top:168px;border-left-width:4px;border-right-width:4px;border-top-width:5px;border-top-color:#6a6a6a"></div>
<div class="ab" style="left:6px;top:183px;width:16px;height:16px;background:linear-gradient(#bcbcbc,#a8a8a8 48%,#646464 52%,#505050);border:2px solid #1c1c1c;border-radius:4px;color:#fff;font-weight:bold;font-size:11px;line-height:12px;text-align:center;-webkit-text-stroke:0.5px #fff">M</div>
<div class="ab" style="left:0;top:183px;width:3px;height:16px;background:#9a9a9a;border-right:1px solid #444"></div>
<div class="ab" style="left:0;top:203px;width:21px;height:15px;background:linear-gradient(#f4f4f4,#dcdcdc);border-radius:0 3px 3px 0;overflow:hidden"></div><div class="arr" style="left:12px;top:207px;border-left-width:4px;border-right-width:4px;border-top-width:5px;border-top-color:#6a6a6a"></div>
<div class="ab" style="left:0;top:221px;width:21px;height:15px;background:linear-gradient(#f4f4f4,#dcdcdc);border-radius:0 3px 3px 0;overflow:hidden"><div class="ab" style="right:0;left:-20px;top:0;color:#2a8a10;font-weight:bold;font-size:11px;line-height:16px;white-space:nowrap;text-align:left"><span class="ab" style="right:16px">d</span></div></div><div class="arr" style="left:12px;top:225px;border-left-width:4px;border-right-width:4px;border-top-width:5px;border-top-color:#6a6a6a"></div>
<div class="ab" style="left:0;top:239px;width:21px;height:15px;background:linear-gradient(#f8f8f8,#dcdcdc);border-radius:0 3px 3px 0;overflow:hidden"><span class="ab" style="right:9px;top:0;color:#141438;font-weight:bold;font-size:12px;line-height:15px;white-space:nowrap">nc</span></div><div class="ab" style="left:14px;top:244px;width:5px;height:5px;background:#30e030"></div>
<div class="ab" style="left:29px;top:169px;width:5px;height:11px;background:#262220"></div><svg class="ab" style="left:29px;top:169px" width="5" height="11"><rect x="1" y="1" width="1" height="1" fill="#8a5228"/><rect x="3" y="1" width="1" height="1" fill="#8a5228"/><rect x="1" y="3" width="1" height="1" fill="#8a5228"/><rect x="3" y="3" width="1" height="1" fill="#8a5228"/><rect x="1" y="5" width="1" height="1" fill="#8a5228"/><rect x="3" y="5" width="1" height="1" fill="#8a5228"/><rect x="1" y="7" width="1" height="1" fill="#8a5228"/><rect x="3" y="7" width="1" height="1" fill="#8a5228"/><rect x="1" y="9" width="1" height="1" fill="#8a5228"/><rect x="3" y="9" width="1" height="1" fill="#8a5228"/></svg><div class="ab" style="left:29px;top:180px;width:5px;height:32px;background:#664226"></div><div class="ab" style="left:29px;top:212px;width:5px;height:44px;background:repeating-linear-gradient(#24502a 0 1px,#1a301c 1px 2px);border-top:1px solid #2a5a2a"></div><div class="ab" style="left:35px;top:169px;width:5px;height:11px;background:#262220"></div><svg class="ab" style="left:35px;top:169px" width="5" height="11"><rect x="1" y="1" width="1" height="1" fill="#8a5228"/><rect x="3" y="1" width="1" height="1" fill="#8a5228"/><rect x="1" y="3" width="1" height="1" fill="#8a5228"/><rect x="3" y="3" width="1" height="1" fill="#8a5228"/><rect x="1" y="5" width="1" height="1" fill="#8a5228"/><rect x="3" y="5" width="1" height="1" fill="#8a5228"/><rect x="1" y="7" width="1" height="1" fill="#8a5228"/><rect x="3" y="7" width="1" height="1" fill="#8a5228"/><rect x="1" y="9" width="1" height="1" fill="#8a5228"/><rect x="3" y="9" width="1" height="1" fill="#8a5228"/></svg><div class="ab" style="left:35px;top:180px;width:5px;height:32px;background:#664226"></div><div class="ab" style="left:35px;top:212px;width:5px;height:44px;background:repeating-linear-gradient(#24502a 0 1px,#1a301c 1px 2px);border-top:1px solid #2a5a2a"></div>
<div class="ab" style="left:40px;top:165px;width:1px;height:91px;background:repeating-linear-gradient(#383838 0 1px,#242424 1px 3px)"></div>
<div class="ab" style="left:47px;top:167px;width:67px;height:15px;background:linear-gradient(#fafafa,#e8e8e8 55%,#d4d4d4);border-radius:3px"></div><div class="ab" style="left:57px;top:167px;width:1px;height:15px;background:#b0b0b0"></div><div class="ab" style="left:51px;top:170px;width:4px;height:4px;border-radius:50%;background:#6a6a6a"></div><div class="ab" style="left:58px;top:167px;width:56px;height:15px;color:#141438;font-weight:bold;font-size:10px;letter-spacing:-0.2px;line-height:15px;text-align:center;white-space:nowrap">AIR Chorus</div><div class="ab" style="left:47px;top:185px;width:67px;height:15px;background:linear-gradient(#fafafa,#e8e8e8 55%,#d4d4d4);border-radius:3px"></div><div class="ab" style="left:57px;top:185px;width:1px;height:15px;background:#b0b0b0"></div><div class="ab" style="left:51px;top:188px;width:4px;height:4px;border-radius:50%;background:#6a6a6a"></div><div class="ab" style="left:58px;top:185px;width:56px;height:15px;color:#141438;font-weight:bold;font-size:10px;letter-spacing:-0.2px;line-height:15px;text-align:center;white-space:nowrap">CompLim3</div><div class="ab" style="left:47px;top:203px;width:67px;height:15px;background:#262626;border-radius:3px"></div><div class="ab" style="left:51px;top:206px;width:3px;height:3px;background:#333"></div><div class="ab" style="left:47px;top:221px;width:67px;height:15px;background:#262626;border-radius:3px"></div><div class="ab" style="left:51px;top:224px;width:3px;height:3px;background:#333"></div><div class="ab" style="left:47px;top:239px;width:67px;height:15px;background:#262626;border-radius:3px"></div><div class="ab" style="left:51px;top:242px;width:3px;height:3px;background:#333"></div>
<div class="ab" style="left:122px;top:167px;width:77px;height:15px;background:linear-gradient(#fafafa,#e8e8e8 55%,#d4d4d4);border-radius:3px;color:#141438;font-weight:bold;font-size:10px;letter-spacing:-0.2px;line-height:15px;white-space:nowrap"><span class="ab" style="left:0;width:68px;text-align:center">Analog 5-6</span></div><div class="arr" style="left:189px;top:170px;border-left-width:4px;border-right-width:4px;border-top-width:5px;border-top-color:#707070"></div><div class="ab" style="left:122px;top:185px;width:77px;height:15px;background:linear-gradient(#fafafa,#e8e8e8 55%,#d4d4d4);border-radius:3px;color:#141438;font-weight:bold;font-size:10px;letter-spacing:-0.2px;line-height:15px;white-space:nowrap"><span class="ab" style="left:0;width:66px;text-align:center">Out 1-2</span></div><div class="ab" style="left:188px;top:185px;width:1px;height:15px;background:#a8a8a8"></div><div class="ab" style="left:193px;top:188px;width:1px;height:10px;background:#888"></div><div class="ab" style="left:191px;top:191px;width:5px;height:3px;background:#ddd;border:1px solid #888"></div><div class="gt" style="left:129px;top:210px">vol</div><div class="gt" style="left:160px;top:210;width:33px;text-align:right;top:210px">0.0</div><div class="ab" style="left:128px;top:222px;width:65px;height:1px;background:#3a8a10"></div><div class="ab" style="left:160px;top:223px;width:1px;height:10px;background:#3a8a10"></div><svg class="ab" style="left:129px;top:227px" width="4" height="7"><path d="M4 0.5 L4 6.5 L0.5 3.5Z" fill="#b8f020"/></svg><div class="gt" style="left:134px;top:224px">100</div><div class="gt" style="left:170px;top:224px">100</div><svg class="ab" style="left:187px;top:227px" width="4" height="7"><path d="M0 0.5 L0 6.5 L3.5 3.5Z" fill="#b8f020"/></svg><div class="ab" style="left:125px;top:234px;width:74px;height:4px;border-bottom:1px solid #333;border-right:1px solid #333;border-radius:0 0 4px 0"></div>
<div class="ab" style="left:0;top:260px;width:25px;height:20px;background:#7a7a7a;border-radius:0 4px 4px 0"></div>
<div class="ab" style="left:-4px;top:262px;width:14px;height:16px;background:linear-gradient(#bcbcbc,#a8a8a8 48%,#646464 52%,#505050);border:2px solid #1c1c1c;border-radius:4px;color:#fff;font-weight:bold;font-size:11px;line-height:12px;text-align:center;-webkit-text-stroke:0.5px #fff">S</div><div class="ab" style="left:8px;top:262px;width:15px;height:16px;background:linear-gradient(#bcbcbc,#a8a8a8 48%,#646464 52%,#505050);border:2px solid #1c1c1c;border-radius:4px;color:#fff;font-weight:bold;font-size:11px;line-height:12px;text-align:center;-webkit-text-stroke:0.5px #fff">M</div>
<div class="ab" style="left:29px;top:266px;width:6px;height:0px;background:#262220"></div><svg class="ab" style="left:29px;top:266px" width="6" height="0"></svg><div class="ab" style="left:29px;top:266px;width:6px;height:6px;background:#664226"></div><div class="ab" style="left:29px;top:272px;width:6px;height:6px;background:repeating-linear-gradient(#24502a 0 1px,#1a301c 1px 2px);border-top:1px solid #2a5a2a"></div>
<div class="ab" style="left:48px;top:263px;width:10px;height:14px;background:linear-gradient(#fafafa,#d8d8d8);border-radius:3px;color:#141438;font-weight:bold;font-size:12px;line-height:14px;text-align:center">C</div>
<div class="ab" style="left:62px;top:263px;width:10px;height:14px;background:#262626;border-radius:3px"></div>
<div class="ab" style="left:76px;top:263px;width:10px;height:14px;background:#262626;border-radius:3px"></div>
<div class="ab" style="left:90px;top:263px;width:10px;height:14px;background:#262626;border-radius:3px"></div>
<div class="ab" style="left:104px;top:263px;width:10px;height:14px;background:#262626;border-radius:3px"></div>
<div class="ab" style="left:122px;top:263px;width:10px;height:14px;background:linear-gradient(#fafafa,#d8d8d8);border-radius:3px;color:#141438;font-weight:bold;font-size:12px;line-height:14px;text-align:center">n</div>
<div class="ab" style="left:135px;top:263px;width:21px;height:14px;background:linear-gradient(#fafafa,#d8d8d8);border-radius:3px;color:#3a1a3a;font-weight:bold;font-size:12px;line-height:14px"><span class="ab" style="left:2px">1</span></div>
<div class="ab" style="left:145px;top:263px;width:1px;height:14px;background:#aaa"></div><div class="ab" style="left:151px;top:266px;width:1px;height:9px;background:#888"></div><div class="ab" style="left:149px;top:269px;width:5px;height:3px;border:1px solid #888"></div>
<div class="gt" style="left:168px;top:264px;font-size:10px">V</div><div class="ab" style="left:179px;top:265px;width:1px;height:10px;background:#3a8a10"></div><div class="gt" style="left:186px;top:264px;font-size:10px">P</div>
<div class="ab" style="left:162px;top:274px;width:40px;height:4px;border-bottom:1px solid #333;border-right:1px solid #333;border-radius:0 0 4px 0"></div>
<div class="ab" style="left:0;top:282px;width:25px;height:151px;background:#7a7a7a;border-radius:0 4px 4px 0"></div>
<div class="ab" style="left:0;top:283px;width:25px;height:16px;background:#f6f6f6;border-radius:0 3px 3px 0;overflow:hidden"><div class="ab" style="right:19px;top:-1px;color:#1a8cff;font-weight:normal;font-size:15px;line-height:18px;white-space:nowrap">nt</div></div><div class="ab" style="left:13px;top:283px;width:1px;height:16px;background:#a4a4a4"></div><div class="arr" style="left:15px;top:288px;border-left-width:4px;border-right-width:4px;border-top-width:5px;border-top-color:#6a6a6a"></div>
<div class="ab" style="left:6px;top:303px;width:16px;height:16px;background:linear-gradient(#bcbcbc,#a8a8a8 48%,#646464 52%,#505050);border:2px solid #1c1c1c;border-radius:4px;color:#fff;font-weight:bold;font-size:11px;line-height:12px;text-align:center;-webkit-text-stroke:0.5px #fff">M</div>
<div class="ab" style="left:0;top:303px;width:3px;height:16px;background:#9a9a9a;border-right:1px solid #444"></div>
<div class="ab" style="left:0;top:323px;width:21px;height:15px;background:linear-gradient(#f4f4f4,#dcdcdc);border-radius:0 3px 3px 0;overflow:hidden"></div><div class="arr" style="left:12px;top:327px;border-left-width:4px;border-right-width:4px;border-top-width:5px;border-top-color:#6a6a6a"></div>
<div class="ab" style="left:0;top:341px;width:21px;height:15px;background:linear-gradient(#f4f4f4,#dcdcdc);border-radius:0 3px 3px 0;overflow:hidden"><div class="ab" style="left:8px;top:3px;width:9px;height:6px;border:1px solid #444"></div><div class="ab" style="left:11px;top:6px;width:9px;height:6px;border:1px solid #444;background:#e8e8e8"></div></div><div class="arr" style="left:12px;top:345px;border-left-width:4px;border-right-width:4px;border-top-width:5px;border-top-color:#6a6a6a"></div>
<div class="ab" style="left:9px;top:344px;width:12px;height:9px;"></div>
<div class="ab" style="left:0;top:359px;width:21px;height:15px;background:linear-gradient(#f4f4f4,#dcdcdc);border-radius:0 3px 3px 0;overflow:hidden"><div class="ab" style="right:0;left:-20px;top:0;color:#2a8a10;font-weight:bold;font-size:11px;line-height:16px;white-space:nowrap;text-align:left"><span class="ab" style="right:16px">d</span></div></div><div class="arr" style="left:12px;top:363px;border-left-width:4px;border-right-width:4px;border-top-width:5px;border-top-color:#6a6a6a"></div>
<div class="ab" style="left:29px;top:289px;width:5px;height:17px;background:#262220"></div><svg class="ab" style="left:29px;top:289px" width="5" height="17"><rect x="1" y="1" width="1" height="1" fill="#8a5228"/><rect x="3" y="1" width="1" height="1" fill="#8a5228"/><rect x="1" y="3" width="1" height="1" fill="#8a5228"/><rect x="3" y="3" width="1" height="1" fill="#8a5228"/><rect x="1" y="5" width="1" height="1" fill="#8a5228"/><rect x="3" y="5" width="1" height="1" fill="#8a5228"/><rect x="1" y="7" width="1" height="1" fill="#8a5228"/><rect x="3" y="7" width="1" height="1" fill="#8a5228"/><rect x="1" y="9" width="1" height="1" fill="#8a5228"/><rect x="3" y="9" width="1" height="1" fill="#8a5228"/><rect x="1" y="11" width="1" height="1" fill="#8a5228"/><rect x="3" y="11" width="1" height="1" fill="#8a5228"/><rect x="1" y="13" width="1" height="1" fill="#8a5228"/><rect x="3" y="13" width="1" height="1" fill="#8a5228"/><rect x="1" y="15" width="1" height="1" fill="#8a5228"/><rect x="3" y="15" width="1" height="1" fill="#8a5228"/></svg><div class="ab" style="left:29px;top:306px;width:5px;height:55px;background:#664226"></div><div class="ab" style="left:29px;top:361px;width:5px;height:71px;background:repeating-linear-gradient(#24502a 0 1px,#1a301c 1px 2px);border-top:1px solid #2a5a2a"></div><div class="ab" style="left:35px;top:289px;width:5px;height:17px;background:#262220"></div><svg class="ab" style="left:35px;top:289px" width="5" height="17"><rect x="1" y="1" width="1" height="1" fill="#8a5228"/><rect x="3" y="1" width="1" height="1" fill="#8a5228"/><rect x="1" y="3" width="1" height="1" fill="#8a5228"/><rect x="3" y="3" width="1" height="1" fill="#8a5228"/><rect x="1" y="5" width="1" height="1" fill="#8a5228"/><rect x="3" y="5" width="1" height="1" fill="#8a5228"/><rect x="1" y="7" width="1" height="1" fill="#8a5228"/><rect x="3" y="7" width="1" height="1" fill="#8a5228"/><rect x="1" y="9" width="1" height="1" fill="#8a5228"/><rect x="3" y="9" width="1" height="1" fill="#8a5228"/><rect x="1" y="11" width="1" height="1" fill="#8a5228"/><rect x="3" y="11" width="1" height="1" fill="#8a5228"/><rect x="1" y="13" width="1" height="1" fill="#8a5228"/><rect x="3" y="13" width="1" height="1" fill="#8a5228"/><rect x="1" y="15" width="1" height="1" fill="#8a5228"/><rect x="3" y="15" width="1" height="1" fill="#8a5228"/></svg><div class="ab" style="left:35px;top:306px;width:5px;height:55px;background:#664226"></div><div class="ab" style="left:35px;top:361px;width:5px;height:71px;background:repeating-linear-gradient(#24502a 0 1px,#1a301c 1px 2px);border-top:1px solid #2a5a2a"></div>
<div class="ab" style="left:40px;top:286px;width:1px;height:147px;background:repeating-linear-gradient(#383838 0 1px,#242424 1px 3px)"></div>
<div class="ab" style="left:47px;top:287px;width:67px;height:15px;background:linear-gradient(#fafafa,#e8e8e8 55%,#d4d4d4);border-radius:3px"></div><div class="ab" style="left:57px;top:287px;width:1px;height:15px;background:#b0b0b0"></div><div class="ab" style="left:51px;top:290px;width:4px;height:4px;border-radius:50%;background:#6a6a6a"></div><div class="ab" style="left:58px;top:287px;width:56px;height:15px;color:#141438;font-weight:bold;font-size:10px;letter-spacing:-0.2px;line-height:15px;text-align:center;white-space:nowrap">Hybrid</div><div class="ab" style="left:47px;top:305px;width:67px;height:15px;background:#262626;border-radius:3px"></div><div class="ab" style="left:51px;top:308px;width:3px;height:3px;background:#333"></div><div class="ab" style="left:47px;top:323px;width:67px;height:15px;background:#262626;border-radius:3px"></div><div class="ab" style="left:51px;top:326px;width:3px;height:3px;background:#333"></div><div class="ab" style="left:47px;top:341px;width:67px;height:15px;background:#262626;border-radius:3px"></div><div class="ab" style="left:51px;top:344px;width:3px;height:3px;background:#333"></div><div class="ab" style="left:47px;top:359px;width:67px;height:15px;background:#262626;border-radius:3px"></div><div class="ab" style="left:51px;top:362px;width:3px;height:3px;background:#333"></div>
<div class="ab" style="left:122px;top:287px;width:77px;height:15px;background:linear-gradient(#fafafa,#e8e8e8 55%,#d4d4d4);border-radius:3px;color:#141438;font-weight:bold;font-size:10px;letter-spacing:-0.2px;line-height:15px;white-space:nowrap"><span class="ab" style="left:0;width:68px;text-align:center">no input</span></div><div class="arr" style="left:189px;top:290px;border-left-width:4px;border-right-width:4px;border-top-width:5px;border-top-color:#707070"></div><div class="ab" style="left:122px;top:305px;width:77px;height:15px;background:linear-gradient(#fafafa,#e8e8e8 55%,#d4d4d4);border-radius:3px;color:#141438;font-weight:bold;font-size:10px;letter-spacing:-0.2px;line-height:15px;white-space:nowrap"><span class="ab" style="left:0;width:66px;text-align:center">Out 1-2</span></div><div class="ab" style="left:188px;top:305px;width:1px;height:15px;background:#a8a8a8"></div><div class="ab" style="left:193px;top:308px;width:1px;height:10px;background:#888"></div><div class="ab" style="left:191px;top:311px;width:5px;height:3px;background:#ddd;border:1px solid #888"></div><div class="gt" style="left:129px;top:330px">vol</div><div class="gt" style="left:160px;top:330;width:33px;text-align:right;top:330px">0.0</div><div class="ab" style="left:128px;top:342px;width:65px;height:1px;background:#3a8a10"></div><div class="ab" style="left:160px;top:343px;width:1px;height:10px;background:#3a8a10"></div><svg class="ab" style="left:129px;top:347px" width="4" height="7"><path d="M4 0.5 L4 6.5 L0.5 3.5Z" fill="#b8f020"/></svg><div class="gt" style="left:134px;top:344px">100</div><div class="gt" style="left:170px;top:344px">100</div><svg class="ab" style="left:187px;top:347px" width="4" height="7"><path d="M0 0.5 L0 6.5 L3.5 3.5Z" fill="#b8f020"/></svg><div class="ab" style="left:125px;top:354px;width:74px;height:4px;border-bottom:1px solid #333;border-right:1px solid #333;border-radius:0 0 4px 0"></div>
<div class="ab" style="left:0;top:436px;width:25px;height:95px;background:#7a7a7a;border-radius:0 4px 4px 0"></div>
<div class="ab" style="left:0;top:437px;width:25px;height:16px;background:linear-gradient(90deg,#d0d0d0 0,#d0d0d0 13px,#dadada 13px);border-radius:0 3px 3px 0;overflow:hidden"></div><div class="ab" style="left:13px;top:437px;width:1px;height:16px;background:#a4a4a4"></div><div class="arr" style="left:15px;top:442px;border-left-width:4px;border-right-width:4px;border-top-width:5px;border-top-color:#6a6a6a"></div>
<div class="ab" style="left:6px;top:457px;width:16px;height:16px;background:linear-gradient(#bcbcbc,#a8a8a8 48%,#646464 52%,#505050);border:2px solid #1c1c1c;border-radius:4px;color:#fff;font-weight:bold;font-size:11px;line-height:12px;text-align:center;-webkit-text-stroke:0.5px #fff">M</div>
<div class="ab" style="left:0;top:457px;width:3px;height:16px;background:#9a9a9a;border-right:1px solid #444"></div>
<div class="ab" style="left:0;top:477px;width:21px;height:15px;background:linear-gradient(#f4f4f4,#dcdcdc);border-radius:0 3px 3px 0;overflow:hidden"></div><div class="arr" style="left:12px;top:481px;border-left-width:4px;border-right-width:4px;border-top-width:5px;border-top-color:#6a6a6a"></div>
<div class="ab" style="left:0;top:495px;width:21px;height:15px;background:linear-gradient(#f4f4f4,#dcdcdc);border-radius:0 3px 3px 0;overflow:hidden"><div class="ab" style="right:0;left:-20px;top:0;color:#2a8a10;font-weight:bold;font-size:11px;line-height:16px;white-space:nowrap;text-align:left"><span class="ab" style="right:16px">d</span></div></div><div class="arr" style="left:12px;top:499px;border-left-width:4px;border-right-width:4px;border-top-width:5px;border-top-color:#6a6a6a"></div>
<div class="ab" style="left:0;top:513px;width:21px;height:15px;background:repeating-conic-gradient(#a2a29c 0 25%,#86867e 0 50%) 0 0/2px 2px;border-radius:0 3px 3px 0"></div>
<div class="ab" style="left:29px;top:443px;width:6px;height:10px;background:#262220"></div><svg class="ab" style="left:29px;top:443px" width="6" height="10"><rect x="1" y="1" width="1" height="1" fill="#8a5228"/><rect x="3" y="1" width="1" height="1" fill="#8a5228"/><rect x="5" y="1" width="1" height="1" fill="#8a5228"/><rect x="1" y="3" width="1" height="1" fill="#8a5228"/><rect x="3" y="3" width="1" height="1" fill="#8a5228"/><rect x="5" y="3" width="1" height="1" fill="#8a5228"/><rect x="1" y="5" width="1" height="1" fill="#8a5228"/><rect x="3" y="5" width="1" height="1" fill="#8a5228"/><rect x="5" y="5" width="1" height="1" fill="#8a5228"/><rect x="1" y="7" width="1" height="1" fill="#8a5228"/><rect x="3" y="7" width="1" height="1" fill="#8a5228"/><rect x="5" y="7" width="1" height="1" fill="#8a5228"/><rect x="1" y="9" width="1" height="1" fill="#8a5228"/><rect x="3" y="9" width="1" height="1" fill="#8a5228"/><rect x="5" y="9" width="1" height="1" fill="#8a5228"/></svg><div class="ab" style="left:29px;top:453px;width:6px;height:33px;background:#664226"></div><div class="ab" style="left:29px;top:486px;width:6px;height:44px;background:repeating-linear-gradient(#24502a 0 1px,#1a301c 1px 2px);border-top:1px solid #2a5a2a"></div>
<div class="ab" style="left:35px;top:440px;width:1px;height:91px;background:repeating-linear-gradient(#383838 0 1px,#242424 1px 3px)"></div>
<div class="ab" style="left:47px;top:441px;width:67px;height:15px;background:#262626;border-radius:3px"></div><div class="ab" style="left:51px;top:444px;width:3px;height:3px;background:#333"></div><div class="ab" style="left:47px;top:459px;width:67px;height:15px;background:#262626;border-radius:3px"></div><div class="ab" style="left:51px;top:462px;width:3px;height:3px;background:#333"></div><div class="ab" style="left:47px;top:477px;width:67px;height:15px;background:#262626;border-radius:3px"></div><div class="ab" style="left:51px;top:480px;width:3px;height:3px;background:#333"></div><div class="ab" style="left:47px;top:495px;width:67px;height:15px;background:#262626;border-radius:3px"></div><div class="ab" style="left:51px;top:498px;width:3px;height:3px;background:#333"></div><div class="ab" style="left:47px;top:513px;width:67px;height:15px;background:#262626;border-radius:3px"></div><div class="ab" style="left:51px;top:516px;width:3px;height:3px;background:#333"></div>
<div class="ab" style="left:122px;top:441px;width:77px;height:15px;background:linear-gradient(#fafafa,#e8e8e8 55%,#d4d4d4);border-radius:3px;color:#141438;font-weight:bold;font-size:10px;letter-spacing:-0.2px;line-height:15px;white-space:nowrap"><span class="ab" style="left:0;width:68px;text-align:center">Analog 1</span></div><div class="arr" style="left:189px;top:444px;border-left-width:4px;border-right-width:4px;border-top-width:5px;border-top-color:#707070"></div><div class="ab" style="left:122px;top:459px;width:77px;height:15px;background:linear-gradient(#fafafa,#e8e8e8 55%,#d4d4d4);border-radius:3px;color:#141438;font-weight:bold;font-size:10px;letter-spacing:-0.2px;line-height:15px;white-space:nowrap"><span class="ab" style="left:0;width:66px;text-align:center">Out 1-2</span></div><div class="ab" style="left:188px;top:459px;width:1px;height:15px;background:#a8a8a8"></div><div class="ab" style="left:193px;top:462px;width:1px;height:10px;background:#888"></div><div class="ab" style="left:191px;top:465px;width:5px;height:3px;background:#ddd;border:1px solid #888"></div><div class="gt" style="left:129px;top:484px">vol</div><div class="gt" style="left:160px;top:484;width:33px;text-align:right;top:484px">0.0</div><div class="ab" style="left:128px;top:496px;width:65px;height:1px;background:#3a8a10"></div><div class="gt" style="left:129px;top:498px">pan</div><svg class="ab" style="left:167px;top:501px" width="5" height="7"><path d="M0 0 L0 7 L4 3.5Z" fill="#b8f020"/></svg><div class="gt" style="left:177px;top:498px">0</div><svg class="ab" style="left:189px;top:501px" width="5" height="7"><path d="M4 0 L4 7 L0 3.5Z" fill="#b8f020"/></svg><div class="ab" style="left:125px;top:508px;width:74px;height:4px;border-bottom:1px solid #333;border-right:1px solid #333;border-radius:0 0 4px 0"></div>
<div class="ab" style="left:0;top:532px;width:25px;height:97px;background:#7a7a7a;border-radius:0 4px 4px 0"></div>
<div class="ab" style="left:0;top:534px;width:25px;height:16px;background:linear-gradient(90deg,#d0d0d0 0,#d0d0d0 13px,#dadada 13px);border-radius:0 3px 3px 0;overflow:hidden"></div><div class="ab" style="left:13px;top:534px;width:1px;height:16px;background:#a4a4a4"></div><div class="arr" style="left:15px;top:539px;border-left-width:4px;border-right-width:4px;border-top-width:5px;border-top-color:#6a6a6a"></div>
<div class="ab" style="left:6px;top:554px;width:16px;height:16px;background:linear-gradient(#bcbcbc,#a8a8a8 48%,#646464 52%,#505050);border:2px solid #1c1c1c;border-radius:4px;color:#fff;font-weight:bold;font-size:11px;line-height:12px;text-align:center;-webkit-text-stroke:0.5px #fff">M</div>
<div class="ab" style="left:0;top:554px;width:3px;height:16px;background:#9a9a9a;border-right:1px solid #444"></div>
<div class="ab" style="left:0;top:575px;width:21px;height:15px;background:linear-gradient(#f4f4f4,#dcdcdc);border-radius:0 3px 3px 0;overflow:hidden"></div><div class="arr" style="left:12px;top:579px;border-left-width:4px;border-right-width:4px;border-top-width:5px;border-top-color:#6a6a6a"></div>
<div class="ab" style="left:0;top:593px;width:21px;height:15px;background:linear-gradient(#f4f4f4,#dcdcdc);border-radius:0 3px 3px 0;overflow:hidden"><div class="ab" style="right:0;left:-20px;top:0;color:#2a8a10;font-weight:bold;font-size:11px;line-height:16px;white-space:nowrap;text-align:left"><span class="ab" style="right:16px">d</span></div></div><div class="arr" style="left:12px;top:597px;border-left-width:4px;border-right-width:4px;border-top-width:5px;border-top-color:#6a6a6a"></div>
<div class="ab" style="left:0;top:611px;width:21px;height:15px;background:linear-gradient(#f8f8f8,#dcdcdc);border-radius:0 3px 3px 0;overflow:hidden"><span class="ab" style="right:9px;top:0;color:#141438;font-weight:bold;font-size:12px;line-height:15px;white-space:nowrap">nic</span></div><div class="ab" style="left:14px;top:616px;width:5px;height:5px;background:#30e030"></div>
<div class="ab" style="left:29px;top:541px;width:6px;height:10px;background:#262220"></div><svg class="ab" style="left:29px;top:541px" width="6" height="10"><rect x="1" y="1" width="1" height="1" fill="#8a5228"/><rect x="3" y="1" width="1" height="1" fill="#8a5228"/><rect x="5" y="1" width="1" height="1" fill="#8a5228"/><rect x="1" y="3" width="1" height="1" fill="#8a5228"/><rect x="3" y="3" width="1" height="1" fill="#8a5228"/><rect x="5" y="3" width="1" height="1" fill="#8a5228"/><rect x="1" y="5" width="1" height="1" fill="#8a5228"/><rect x="3" y="5" width="1" height="1" fill="#8a5228"/><rect x="5" y="5" width="1" height="1" fill="#8a5228"/><rect x="1" y="7" width="1" height="1" fill="#8a5228"/><rect x="3" y="7" width="1" height="1" fill="#8a5228"/><rect x="5" y="7" width="1" height="1" fill="#8a5228"/><rect x="1" y="9" width="1" height="1" fill="#8a5228"/><rect x="3" y="9" width="1" height="1" fill="#8a5228"/><rect x="5" y="9" width="1" height="1" fill="#8a5228"/></svg><div class="ab" style="left:29px;top:551px;width:6px;height:33px;background:#664226"></div><div class="ab" style="left:29px;top:584px;width:6px;height:42px;background:repeating-linear-gradient(#24502a 0 1px,#1a301c 1px 2px);border-top:1px solid #2a5a2a"></div>
<div class="ab" style="left:35px;top:538px;width:1px;height:90px;background:repeating-linear-gradient(#383838 0 1px,#242424 1px 3px)"></div>
<div class="ab" style="left:47px;top:538px;width:67px;height:15px;background:linear-gradient(#fafafa,#e8e8e8 55%,#d4d4d4);border-radius:3px"></div><div class="ab" style="left:57px;top:538px;width:1px;height:15px;background:#b0b0b0"></div><div class="ab" style="left:51px;top:541px;width:4px;height:4px;border-radius:50%;background:#6a6a6a"></div><div class="ab" style="left:58px;top:538px;width:56px;height:15px;color:#141438;font-weight:bold;font-size:10px;letter-spacing:-0.2px;line-height:15px;text-align:center;white-space:nowrap">Enhancer</div><div class="ab" style="left:47px;top:556px;width:67px;height:15px;background:#262626;border-radius:3px"></div><div class="ab" style="left:51px;top:559px;width:3px;height:3px;background:#333"></div><div class="ab" style="left:47px;top:574px;width:67px;height:15px;background:#262626;border-radius:3px"></div><div class="ab" style="left:51px;top:577px;width:3px;height:3px;background:#333"></div><div class="ab" style="left:47px;top:592px;width:67px;height:15px;background:#262626;border-radius:3px"></div><div class="ab" style="left:51px;top:595px;width:3px;height:3px;background:#333"></div><div class="ab" style="left:47px;top:610px;width:67px;height:15px;background:#262626;border-radius:3px"></div><div class="ab" style="left:51px;top:613px;width:3px;height:3px;background:#333"></div>
<div class="ab" style="left:122px;top:538px;width:77px;height:15px;background:linear-gradient(#fafafa,#e8e8e8 55%,#d4d4d4);border-radius:3px;color:#141438;font-weight:bold;font-size:10px;letter-spacing:-0.2px;line-height:15px;white-space:nowrap"><span class="ab" style="left:0;width:68px;text-align:center">Analog 3</span></div><div class="arr" style="left:189px;top:541px;border-left-width:4px;border-right-width:4px;border-top-width:5px;border-top-color:#707070"></div><div class="ab" style="left:122px;top:556px;width:77px;height:15px;background:linear-gradient(#fafafa,#e8e8e8 55%,#d4d4d4);border-radius:3px;color:#141438;font-weight:bold;font-size:10px;letter-spacing:-0.2px;line-height:15px;white-space:nowrap"><span class="ab" style="left:0;width:66px;text-align:center">Out 1-2</span></div><div class="ab" style="left:188px;top:556px;width:1px;height:15px;background:#a8a8a8"></div><div class="ab" style="left:193px;top:559px;width:1px;height:10px;background:#888"></div><div class="ab" style="left:191px;top:562px;width:5px;height:3px;background:#ddd;border:1px solid #888"></div><div class="gt" style="left:129px;top:581px">vol</div><div class="gt" style="left:160px;top:581;width:33px;text-align:right;top:581px">0.0</div><div class="ab" style="left:128px;top:593px;width:65px;height:1px;background:#3a8a10"></div><div class="gt" style="left:129px;top:595px">pan</div><svg class="ab" style="left:167px;top:598px" width="5" height="7"><path d="M0 0 L0 7 L4 3.5Z" fill="#b8f020"/></svg><div class="gt" style="left:177px;top:595px">0</div><svg class="ab" style="left:189px;top:598px" width="5" height="7"><path d="M4 0 L4 7 L0 3.5Z" fill="#b8f020"/></svg><div class="ab" style="left:125px;top:605px;width:74px;height:4px;border-bottom:1px solid #333;border-right:1px solid #333;border-radius:0 0 4px 0"></div>
<div class="ab" style="left:0;top:632px;width:25px;height:58px;background:#7a7a7a;border-radius:0 4px 4px 0"></div>
<div class="ab" style="left:0;top:631px;width:25px;height:16px;background:linear-gradient(90deg,#d0d0d0 0,#d0d0d0 13px,#dadada 13px);border-radius:0 3px 3px 0;overflow:hidden"></div>
<div class="ab" style="left:6px;top:652px;width:16px;height:16px;background:linear-gradient(#bcbcbc,#a8a8a8 48%,#646464 52%,#505050);border:2px solid #1c1c1c;border-radius:4px;color:#fff;font-weight:bold;font-size:11px;line-height:12px;text-align:center;-webkit-text-stroke:0.5px #fff">M</div>
<div class="ab" style="left:0;top:652px;width:3px;height:16px;background:#9a9a9a;border-right:1px solid #444"></div>
<div class="ab" style="left:0;top:671px;width:21px;height:15px;background:linear-gradient(#f4f4f4,#dcdcdc);border-radius:0 3px 3px 0;overflow:hidden"><div class="ab" style="right:0;left:-20px;top:0;color:#2a8a10;font-weight:bold;font-size:11px;line-height:16px;white-space:nowrap;text-align:left"><span class="ab" style="right:16px">ad</span></div></div><div class="arr" style="left:12px;top:675px;border-left-width:4px;border-right-width:4px;border-top-width:5px;border-top-color:#6a6a6a"></div>
<div class="ab" style="left:29px;top:638px;width:5px;height:4px;background:#262220"></div><svg class="ab" style="left:29px;top:638px" width="5" height="4"><rect x="1" y="1" width="1" height="1" fill="#8a5228"/><rect x="3" y="1" width="1" height="1" fill="#8a5228"/><rect x="1" y="3" width="1" height="1" fill="#8a5228"/><rect x="3" y="3" width="1" height="1" fill="#8a5228"/></svg><div class="ab" style="left:29px;top:642px;width:5px;height:20px;background:#664226"></div><div class="ab" style="left:29px;top:662px;width:5px;height:26px;background:repeating-linear-gradient(#24502a 0 1px,#1a301c 1px 2px);border-top:1px solid #2a5a2a"></div><div class="ab" style="left:35px;top:638px;width:5px;height:4px;background:#262220"></div><svg class="ab" style="left:35px;top:638px" width="5" height="4"><rect x="1" y="1" width="1" height="1" fill="#8a5228"/><rect x="3" y="1" width="1" height="1" fill="#8a5228"/><rect x="1" y="3" width="1" height="1" fill="#8a5228"/><rect x="3" y="3" width="1" height="1" fill="#8a5228"/></svg><div class="ab" style="left:35px;top:642px;width:5px;height:20px;background:#664226"></div><div class="ab" style="left:35px;top:662px;width:5px;height:26px;background:repeating-linear-gradient(#24502a 0 1px,#1a301c 1px 2px);border-top:1px solid #2a5a2a"></div>
<div class="ab" style="left:40px;top:634px;width:1px;height:57px;background:repeating-linear-gradient(#383838 0 1px,#242424 1px 3px)"></div>
<div class="ab" style="left:47px;top:635px;width:67px;height:15px;background:linear-gradient(#fafafa,#e8e8e8 55%,#d4d4d4);border-radius:3px"></div><div class="ab" style="left:57px;top:635px;width:1px;height:15px;background:#b0b0b0"></div><div class="ab" style="left:51px;top:638px;width:4px;height:4px;border-radius:50%;background:#6a6a6a"></div><div class="ab" style="left:58px;top:635px;width:56px;height:15px;color:#141438;font-weight:bold;font-size:10px;letter-spacing:-0.2px;line-height:15px;text-align:center;white-space:nowrap">TL Space</div><div class="ab" style="left:47px;top:653px;width:67px;height:15px;background:#262626;border-radius:3px"></div><div class="ab" style="left:51px;top:656px;width:3px;height:3px;background:#333"></div><div class="ab" style="left:47px;top:671px;width:67px;height:15px;background:#262626;border-radius:3px"></div><div class="ab" style="left:51px;top:674px;width:3px;height:3px;background:#333"></div>
<div class="ab" style="left:122px;top:635px;width:77px;height:15px;background:linear-gradient(#fafafa,#e8e8e8 55%,#d4d4d4);border-radius:3px;color:#141438;font-weight:bold;font-size:10px;letter-spacing:-0.2px;line-height:15px;white-space:nowrap"><span class="ab" style="left:0;width:68px;text-align:center">Aux 1</span></div><div class="arr" style="left:189px;top:638px;border-left-width:4px;border-right-width:4px;border-top-width:5px;border-top-color:#707070"></div><div class="ab" style="left:122px;top:653px;width:77px;height:15px;background:linear-gradient(#fafafa,#e8e8e8 55%,#d4d4d4);border-radius:3px;color:#141438;font-weight:bold;font-size:10px;letter-spacing:-0.2px;line-height:15px;white-space:nowrap"><span class="ab" style="left:0;width:66px;text-align:center">Out 1-2</span></div><div class="ab" style="left:188px;top:653px;width:1px;height:15px;background:#a8a8a8"></div><div class="ab" style="left:193px;top:656px;width:1px;height:10px;background:#888"></div><div class="ab" style="left:191px;top:659px;width:5px;height:3px;background:#ddd;border:1px solid #888"></div>
<div class="gt" style="left:135px;top:673px">0.0</div><div class="ab" style="left:161px;top:673px;width:1px;height:11px;background:#3a8a10"></div><div class="gt" style="left:168px;top:673px">P</div><div class="gt" style="left:186px;top:673px">P</div>
<div class="ab" style="left:125px;top:682px;width:74px;height:4px;border-bottom:1px solid #333;border-right:1px solid #333;border-radius:0 0 4px 0"></div>
<div class="ab" style="left:0;top:692px;width:25px;height:11px;background:#7a7a7a;border-radius:0 4px 4px 0"></div>
<div class="ab" style="left:0;top:694px;width:25px;height:16px;background:linear-gradient(90deg,#d0d0d0 0,#d0d0d0 13px,#dadada 13px);border-radius:0 3px 3px 0;overflow:hidden"></div><div class="ab" style="left:13px;top:694px;width:1px;height:16px;background:#a4a4a4"></div><div class="arr" style="left:15px;top:699px;border-left-width:4px;border-right-width:4px;border-top-width:5px;border-top-color:#6a6a6a"></div>
<div class="ab" style="left:47px;top:696px;width:67px;height:10px;background:#eee;border-radius:3px"></div><div class="ab" style="left:122px;top:696px;width:77px;height:10px;background:#eee;border-radius:3px"></div>
</body></html>
